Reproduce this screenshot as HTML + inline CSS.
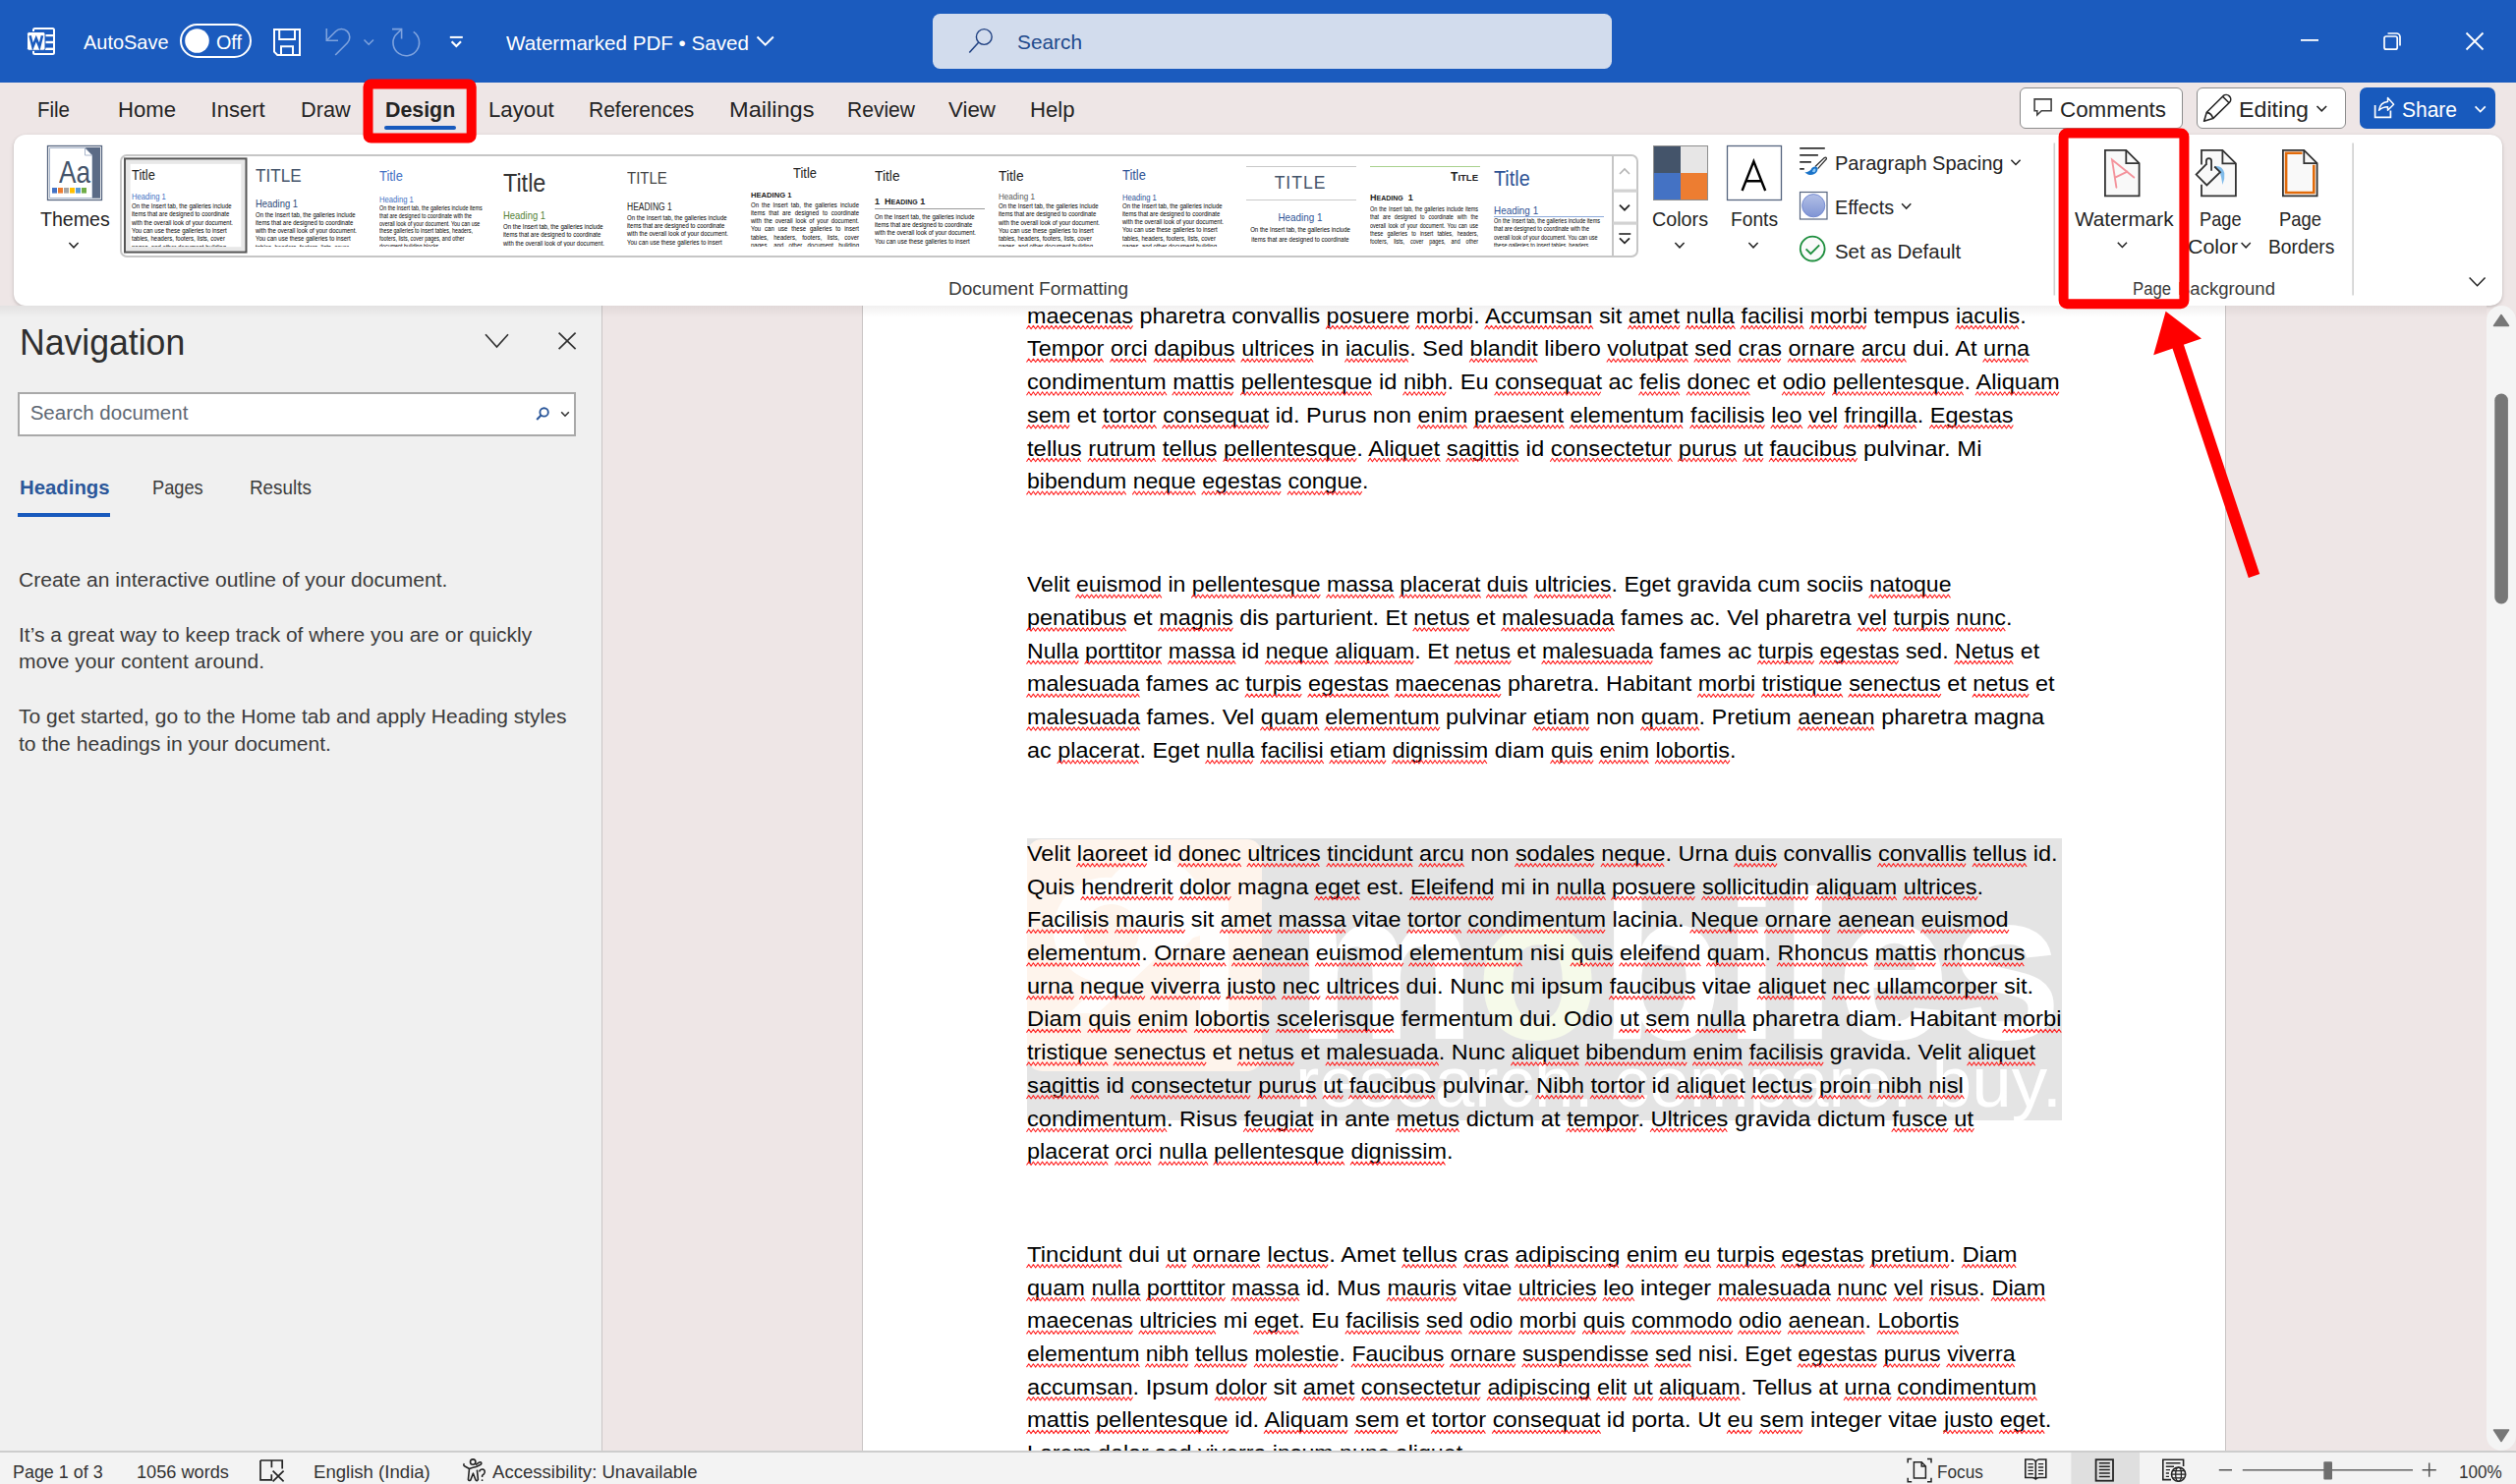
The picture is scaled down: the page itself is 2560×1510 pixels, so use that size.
<!DOCTYPE html>
<html><head><meta charset="utf-8"><title>Word</title>
<style>
html,body{margin:0;padding:0;width:2560px;height:1510px;overflow:hidden;background:#EEE6E6;font-family:'Liberation Sans', sans-serif;}
.t{position:absolute;white-space:pre;line-height:1;transform-origin:0 0;font-family:'Liberation Sans', sans-serif;}
.a{position:absolute;}
.u{}
svg{position:absolute;overflow:visible;}
</style></head><body>
<div class="a" style="left:0;top:0;width:2560px;height:84px;background:#1B5BBE"></div>
<div class="a" style="left:0;top:84px;width:2560px;height:227px;background:#EEE6E6"></div>
<div class="a" style="left:14px;top:137px;width:2532px;height:174px;background:#fff;border-radius:12px;box-shadow:0 1px 3px rgba(0,0,0,0.18),0 2px 6px rgba(0,0,0,0.06)"></div>
<div class="a" style="left:0;top:311px;width:612px;height:1165px;background:#F0F0F0"></div>
<div class="a" style="left:612px;top:311px;width:1px;height:1165px;background:#C9C6C6"></div>
<div class="a" style="left:613px;top:311px;width:1917px;height:1165px;background:#EEE6E6"></div>
<div class="a" style="left:877px;top:311px;width:1388px;height:1165px;background:#fff;border-left:1px solid #C8C3C3;border-right:1px solid #C8C3C3;box-sizing:border-box"></div>
<div class="a" style="left:2530px;top:311px;width:30px;height:1165px;background:#F4F4F4;border-radius:15px"></div>
<div class="a" style="left:1045px;top:853px;width:1053px;height:287px;background:#E4E4E4"></div><div class="a" style="left:1045px;top:853.5px;width:239px;height:236.5px;background:#FEF4EC;border-radius:15px"></div><svg style="left:0;top:0" width="2560" height="1510" viewBox="0 0 2560 1510"><path d="M1131,893 A51.5,51.5 0 1 1 1176,975 L1117,1031 H1088 L1120,1000 A51.5,51.5 0 0 1 1131,893 Z M1130,920 A28,28 0 1 0 1131,977 A28,28 0 1 0 1130,920 Z" fill="#FFFFFF" fill-rule="evenodd" opacity="0.9"/><path d="M1221,917 H1250 V1029 H1221 V952 L1196,960 V936 Z" fill="#FFFFFF" opacity="0.9"/></svg>
<div class="a" style="left:0px;top:311px;width:2530px;height:12px;background:linear-gradient(rgba(60,40,40,0.07),rgba(60,40,40,0))"></div>
<div class="t" style="left:1318.0px;top:873.6px;font-size:216px;color:#FFFFFF;font-weight:700;transform:scaleX(0.9556);">m<span style="color:#F6FAEA">o</span>biles</div>
<div class="t" style="left:1318.0px;top:1063.5px;font-size:73px;color:#FFFFFF;transform:scaleX(0.9978);">research. compare. buy.</div>
<div class="a" style="left:391px;top:128px;width:73px;height:4px;background:#185ABD;border-radius:2px"></div>
<div class="a" style="left:2055px;top:89px;width:166px;height:42px;background:#fff;border:1.5px solid #8C8C8C;border-radius:6px;box-sizing:border-box"></div>
<div class="a" style="left:2235px;top:89px;width:152px;height:42px;background:#fff;border:1.5px solid #8C8C8C;border-radius:6px;box-sizing:border-box"></div>
<div class="a" style="left:2401px;top:89px;width:138px;height:42px;background:#185ABD;border-radius:7px"></div>
<div class="a" style="left:18px;top:399px;width:568px;height:45px;background:#fff;border:2px solid #A9A9A9;box-sizing:border-box"></div>
<div class="a" style="left:18px;top:522px;width:94px;height:4px;background:#185ABD"></div>
<svg style="left:0;top:0" width="2560" height="1510" viewBox="0 0 2560 1510"><rect x="34" y="29" width="21" height="26" rx="1.5" fill="none" stroke="#fff" stroke-width="2"/>
<rect x="34" y="35" width="21" height="2.2" fill="#fff"/><rect x="34" y="41.8" width="21" height="2.4" fill="#fff"/><rect x="34" y="48.6" width="21" height="2.4" fill="#fff"/>
<rect x="27.5" y="32.5" width="18.5" height="18.8" rx="2" fill="#fff" stroke="#1B5BBE" stroke-width="1"/>
<path d="M30.6,36.3 L33.4,47.6 L36.8,39.2 L40.2,47.6 L43,36.3" fill="none" stroke="#1B5BBE" stroke-width="2.6" stroke-linejoin="miter"/><rect x="184" y="25" width="71" height="33" rx="16.5" fill="none" stroke="#fff" stroke-width="2"/><circle cx="200.5" cy="41.5" r="12.3" fill="#fff"/><path d="M279,30 H305 V56 H282.3 L279,52.7 Z" fill="none" stroke="#fff" stroke-width="2"/><path d="M284.2,30 V40 H300 V30" fill="none" stroke="#fff" stroke-width="2"/><path d="M286,56 V47.2 H298 V56" fill="none" stroke="#fff" stroke-width="2"/><path d="M332.3,29 V41.2 H344" fill="none" stroke="#7FA3DE" stroke-width="1.6"/><path d="M332.8,40.7 L341.5,32 A8.3,8.3 0 0 1 353.4,43.7 L341.2,56" fill="none" stroke="#7FA3DE" stroke-width="1.6"/><path d="M370.5,40.5 L375.2,45.3 L380,40.5" fill="none" stroke="#7FA3DE" stroke-width="1.5"/><path d="M399,29.6 H408.6 V39.5" fill="none" stroke="#7FA3DE" stroke-width="1.6"/><path d="M408.2,30 L402.3,35.9 A13.3,13.3 0 1 0 420.7,32.4" fill="none" stroke="#7FA3DE" stroke-width="1.6"/><rect x="457.8" y="36.9" width="13" height="2" fill="#fff"/><path d="M459.6,42.3 L464.3,47 L469,42.3" fill="none" stroke="#fff" stroke-width="2.2"/><path d="M770.5,37.5 L778.7,45.7 L786.9,37.5" fill="none" stroke="#fff" stroke-width="2"/><rect x="949" y="14" width="691" height="56" rx="7.5" fill="#D2DCED"/><circle cx="1001.3" cy="37.5" r="7.9" fill="none" stroke="#1E3F80" stroke-width="1.4"/><path d="M995.6,43.2 L986.3,53.5" fill="none" stroke="#1E3F80" stroke-width="1.5"/><rect x="2341" y="40" width="18" height="1.8" fill="#fff"/><rect x="2426" y="37" width="13.2" height="13.2" rx="2" fill="none" stroke="#fff" stroke-width="1.7"/><path d="M2429.5,34 H2438.5 A3.5,3.5 0 0 1 2442,37.5 V46.5" fill="none" stroke="#fff" stroke-width="1.7"/><path d="M2509.5,33.5 L2526.5,50.5 M2526.5,33.5 L2509.5,50.5" fill="none" stroke="#fff" stroke-width="1.8"/><path d="M2070.1,100.9 H2087.1 V112.7 H2077.3 L2072.8,117 V112.7 H2070.1 Z" fill="none" stroke="#424242" stroke-width="1.6" stroke-linejoin="miter"/><path d="M2242.6,123.2 L2245.3,114.3 L2262,97.7 A4.6,4.6 0 0 1 2268.5,104.2 L2251.7,120.6 Z M2261.6,98.3 L2267.6,104.3 M2245.4,114.4 Q2250.5,115.5 2251.6,120.5" fill="none" stroke="#242424" stroke-width="1.6" stroke-linejoin="round"/><path d="M2357.5,108 L2362.3,112.8 L2367.1,108" fill="none" stroke="#242424" stroke-width="1.6"/><path d="M2416.6,107 V119.3 H2432.4 V112.4" fill="none" stroke="#fff" stroke-width="1.7"/><path d="M2420.6,112.3 C2421.5,106.8 2425.3,103.8 2429.5,103.6 V99.6 L2435.6,106.2 L2429.5,112.3 V108.8 C2426,108.8 2423.2,109.8 2420.6,112.3 Z" fill="none" stroke="#fff" stroke-width="1.5" stroke-linejoin="round"/><path d="M2518.6,108.4 L2523.7,113.5 L2528.8,108.4" fill="none" stroke="#fff" stroke-width="1.7"/></svg>
<svg style="left:0;top:0" width="2560" height="1510" viewBox="0 0 2560 1510"><rect x="48.5" y="148.5" width="55" height="55" fill="#fff" stroke="#56657F" stroke-width="1.3"/>
<path d="M50.5,150.5 H86.5 L94,158 V201.5 H50.5 Z" fill="#fff" stroke="#A9B6CB" stroke-width="1"/>
<path d="M86.5,150 H102 V201.8 H94 V158 Z" fill="#5B6B86"/>
<path d="M86.5,150.5 V158 H94" fill="none" stroke="#A9B6CB" stroke-width="1"/><rect x="53" y="191" width="5" height="5.6" fill="#4472C4"/><rect x="59" y="191" width="5" height="5.6" fill="#ED7D31"/><rect x="65" y="191" width="5" height="5.6" fill="#A5A5A5"/><rect x="71" y="191" width="5" height="5.6" fill="#FFC000"/><rect x="77" y="191" width="5" height="5.6" fill="#5B9BD5"/><rect x="83" y="191" width="5" height="5.6" fill="#70AD47"/><rect x="123" y="158" width="1543" height="103" rx="6" fill="#fff" stroke="#C6C6C6" stroke-width="2"/><rect x="1640" y="158" width="2" height="103" fill="#C6C6C6"/><rect x="1641" y="192.5" width="25" height="3.2" fill="#D2D2D2"/><rect x="1641" y="225.5" width="25" height="3.2" fill="#D2D2D2"/><path d="M1648,177 L1653,172 L1658,177" fill="none" stroke="#B4B4B4" stroke-width="1.6"/><path d="M1648,208.7 L1653,213.7 L1658,208.7" fill="none" stroke="#242424" stroke-width="1.8"/><path d="M1647.3,238 H1659.3" stroke="#242424" stroke-width="1.6"/><path d="M1648,242.3 L1653,247.3 L1658,242.3" fill="none" stroke="#242424" stroke-width="1.8"/><rect x="127" y="161.4" width="123.5" height="95.2" fill="#E8E8E8" stroke="#555" stroke-width="2"/><rect x="132.6" y="166.8" width="112.7" height="84.4" fill="#fff"/><rect x="1682" y="148" width="28" height="28" fill="#44546A"/><rect x="1710" y="148" width="28" height="28" fill="#E7E6E6"/><rect x="1682" y="176" width="28" height="28" fill="#4472C4"/><rect x="1710" y="176" width="28" height="28" fill="#ED7D31"/><rect x="1682.5" y="148.5" width="55" height="55" fill="none" stroke="#8E8E8E" stroke-width="1"/><rect x="1757.5" y="148.5" width="55" height="55" fill="#fff" stroke="#56657F" stroke-width="1.3"/><path d="M1772.6,194 L1784.4,164.2 L1796.2,194 M1776.6,184.2 H1792.2" fill="none" stroke="#000" stroke-width="2.4"/><path d="M1831.2,150.9 H1856.8 M1831.2,157.9 H1849.9 M1831.2,164.8 H1842.9 M1831.2,171.8 H1835.8" stroke="#333" stroke-width="1.7" fill="none"/><path d="M1847,169.5 L1856.3,160.6 Q1858.6,159.4 1858.4,161.8 L1849.6,171.6" fill="none" stroke="#333" stroke-width="1.3"/><path d="M1836.3,175.4 Q1842,175 1843.5,171 Q1845.5,168.7 1848.3,169.8 Q1850.5,171.5 1848.8,174.5 Q1846.5,178.5 1840,177.8 Z" fill="#1A73C8"/><path d="M1843.8,174.5 Q1845,171.3 1847,171.5 Q1848.2,173 1846.8,174.8 Q1845.5,176 1843.8,174.5Z" fill="#8CC8F7"/><defs><linearGradient id="gE" x1="0" y1="0" x2="0" y2="1"><stop offset="0" stop-color="#B3C0E6"/><stop offset="1" stop-color="#7F94D4"/></linearGradient></defs><rect x="1831.5" y="195.5" width="27.5" height="27.5" fill="#fff" stroke="#56657F" stroke-width="1.2"/><circle cx="1845.2" cy="209.2" r="11.6" fill="url(#gE)" stroke="#6E86CF" stroke-width="0.9"/><circle cx="1844.2" cy="253.1" r="12.4" fill="#FAFAFA" stroke="#1E8E3E" stroke-width="1.8"/><path d="M1837.6,253.4 L1842.4,258.2 L1851.2,249.4" fill="none" stroke="#1E8E3E" stroke-width="1.9"/><path d="M70.4,247.0 L75,251.8 L79.6,247.0" fill="none" stroke="#242424" stroke-width="1.5"/><path d="M1704.4,247.0 L1709,251.8 L1713.6,247.0" fill="none" stroke="#242424" stroke-width="1.5"/><path d="M1779.4,247.0 L1784,251.8 L1788.6,247.0" fill="none" stroke="#242424" stroke-width="1.5"/><path d="M2154.8,246.7 L2159.4,251.5 L2164.0,246.7" fill="none" stroke="#242424" stroke-width="1.5"/><path d="M2280.6,247.0 L2285.2,251.8 L2289.7999999999997,247.0" fill="none" stroke="#242424" stroke-width="1.5"/><path d="M2046.4,162.7 L2051,167.5 L2055.6,162.7" fill="none" stroke="#242424" stroke-width="1.5"/><path d="M1935.1000000000001,207.3 L1939.7,212.10000000000002 L1944.3,207.3" fill="none" stroke="#242424" stroke-width="1.5"/><rect x="2089.5" y="145.5" width="1.6" height="155" fill="#D0D0D0"/><rect x="2393.3" y="145.5" width="1.6" height="155" fill="#D0D0D0"/><path d="M2141.9,152.9 H2163.3 L2176.6,166.2 V199.4 H2141.9 Z" fill="#F9F9F9" stroke="#333" stroke-width="1.8" stroke-linejoin="miter"/><path d="M2163.3,152.9 V166.2 H2176.6" fill="none" stroke="#333" stroke-width="1.8"/><path d="M2153.4,190.7 L2149,162.6 L2171.3,180.6 M2152.1,180.6 L2164.5,174.6" fill="none" stroke="#F4939C" stroke-width="1.9" stroke-linecap="round"/><path d="M2240,152.9 H2261.4 L2274.9,166.4 V199.4 H2240 Z" fill="#F9F9F9" stroke="none"/><path d="M2240,167.5 V152.9 H2261.4 L2274.9,166.4 V199.4 H2240 V187.8" fill="none" stroke="#333" stroke-width="1.8"/><path d="M2261.4,152.9 V166.4 H2274.9" fill="none" stroke="#333" stroke-width="1.8"/><path d="M2253.5,169.2 Q2261,168 2263.3,176 Q2264,182 2261.4,188 Q2260.5,181 2258.8,175.6 Z" fill="#7FBBEA"/><path d="M2244.6,167.4 L2234.6,177.6 L2245.4,188.5 L2259,175.2 L2253.2,169.5" fill="#F9F9F9" stroke="#333" stroke-width="1.8" stroke-linejoin="miter"/><path d="M2244.9,168 V163.8 A2.6,2.6 0 0 1 2250.1,163.8 V173.8" fill="none" stroke="#333" stroke-width="1.8"/><path d="M2322.9,152.9 H2344.3 L2357.6,166.2 V199.4 H2322.9 Z" fill="#F9F9F9" stroke="#333" stroke-width="1.8" stroke-linejoin="miter"/><path d="M2344.3,152.9 V166.2 H2357.6" fill="none" stroke="#333" stroke-width="1.8"/><path d="M2342.5,155.8 H2326.1 V196 H2354.3 V167.8" fill="none" stroke="#E26B0A" stroke-width="2.6"/><path d="M2512.6,282.6 L2520.6,290.8 L2528.6,282.6" fill="none" stroke="#242424" stroke-width="1.5"/><path d="M494,340.2 L505.5,353 L517,340.2" fill="none" stroke="#333" stroke-width="1.7"/><path d="M568.6,338.6 L585.6,355.2 M585.6,338.6 L568.6,355.2" fill="none" stroke="#333" stroke-width="1.7"/><circle cx="553.6" cy="419.4" r="4.2" fill="none" stroke="#2B579A" stroke-width="1.9"/><path d="M550.5,422.6 L546.2,426.9" stroke="#2B579A" stroke-width="2.1"/><path d="M571.2,419.2 L575,423.2 L578.8,419.2" fill="none" stroke="#333" stroke-width="1.6"/><path d="M2545,320.5 L2552.5,331.5 H2537.5 Z" fill="#777" stroke="#777" stroke-width="1.5" stroke-linejoin="round"/><rect x="2538.3" y="400.5" width="13.6" height="214" rx="6.8" fill="#777"/><path d="M2545,1466.5 L2552.5,1455 H2537.5 Z" fill="#777" stroke="#777" stroke-width="1.5" stroke-linejoin="round"/></svg>
<div class="a" style="left:132px;top:167px;width:114px;height:84px;overflow:hidden"><div style="position:absolute;top:4.4px;font-size:14px;color:#222;line-height:1;white-space:pre;font-weight:400;letter-spacing:0px;left:2px;transform:scaleX(0.92);transform-origin:0 0;">Title</div><div style="position:absolute;top:29.0px;font-size:8.5px;color:#4472C4;line-height:1;white-space:pre;font-weight:400;letter-spacing:0px;left:2px;transform:scaleX(0.9);transform-origin:0 0;">Heading 1</div><div style="position:absolute;left:2px;top:39.1px;width:131.0px;font-size:7.2px;line-height:8.3px;color:#000;text-align:left;transform:scaleX(0.84);transform-origin:0 0;font-weight:400;letter-spacing:0px">On the Insert tab, the galleries include items that are designed to coordinate with the overall look of your document. You can use these galleries to insert tables, headers, footers, lists, cover pages, and other document building blocks.</div></div><div class="a" style="left:258px;top:167px;width:114px;height:84px;overflow:hidden"><div style="position:absolute;top:1.7px;font-size:19px;color:#44546A;line-height:1;white-space:pre;font-weight:400;letter-spacing:0px;left:2px;transform:scaleX(0.9);transform-origin:0 0;">TITLE</div><div style="position:absolute;top:35.3px;font-size:10.5px;color:#2E4A7A;line-height:1;white-space:pre;font-weight:400;letter-spacing:0px;left:2px;transform:scaleX(0.9);transform-origin:0 0;">Heading 1</div><div style="position:absolute;left:2px;top:47.5px;width:131.0px;font-size:7.2px;line-height:8.3px;color:#000;text-align:left;transform:scaleX(0.84);transform-origin:0 0;font-weight:400;letter-spacing:0px">On the Insert tab, the galleries include items that are designed to coordinate with the overall look of your document. You can use these galleries to insert tables, headers, footers, lists, cover pages, and other document building blocks.</div></div><div class="a" style="left:384px;top:167px;width:114px;height:84px;overflow:hidden"><div style="position:absolute;top:4.9px;font-size:14px;color:#4472C4;line-height:1;white-space:pre;font-weight:400;letter-spacing:0px;left:2px;transform:scaleX(0.92);transform-origin:0 0;">Title</div><div style="position:absolute;top:31.5px;font-size:8.5px;color:#4472C4;line-height:1;white-space:pre;font-weight:400;letter-spacing:0px;left:2px;transform:scaleX(0.9);transform-origin:0 0;">Heading 1</div><div style="position:absolute;left:2px;top:41.1px;width:131.0px;font-size:6.4px;line-height:7.8px;color:#000;text-align:left;transform:scaleX(0.84);transform-origin:0 0;font-weight:400;letter-spacing:0px">On the Insert tab, the galleries include items that are designed to coordinate with the overall look of your document. You can use these galleries to insert tables, headers, footers, lists, cover pages, and other document building blocks.</div></div><div class="a" style="left:510px;top:167px;width:114px;height:84px;overflow:hidden"><div style="position:absolute;top:5.7px;font-size:26px;color:#333;line-height:1;white-space:pre;font-weight:400;letter-spacing:0px;left:2px;transform:scaleX(0.9);transform-origin:0 0;">Title</div><div style="position:absolute;top:47.3px;font-size:10.5px;color:#538135;line-height:1;white-space:pre;font-weight:400;letter-spacing:0px;left:2px;transform:scaleX(0.9);transform-origin:0 0;">Heading 1</div><div style="position:absolute;left:2px;top:59.5px;width:131.0px;font-size:7.2px;line-height:8.9px;color:#000;text-align:left;transform:scaleX(0.84);transform-origin:0 0;font-weight:400;letter-spacing:0px">On the Insert tab, the galleries include items that are designed to coordinate with the overall look of your document. You can use these galleries to insert tables, headers, footers, lists, cover pages, and other document building blocks.</div></div><div class="a" style="left:636px;top:167px;width:114px;height:84px;overflow:hidden"><div style="position:absolute;top:6.4px;font-size:17px;color:#444;line-height:1;white-space:pre;font-weight:400;letter-spacing:0px;left:2px;transform:scaleX(0.88);transform-origin:0 0;">TITLE</div><div style="position:absolute;top:39.1px;font-size:10px;color:#222;line-height:1;white-space:pre;font-weight:400;letter-spacing:0px;left:2px;transform:scaleX(0.85);transform-origin:0 0;">HEADING 1</div><div style="position:absolute;left:2px;top:50.9px;width:131.0px;font-size:7.2px;line-height:8.3px;color:#000;text-align:left;transform:scaleX(0.84);transform-origin:0 0;font-weight:400;letter-spacing:0px">On the Insert tab, the galleries include items that are designed to coordinate with the overall look of your document. You can use these galleries to insert tables, headers, footers, lists, cover pages, and other document building blocks.</div></div><div class="a" style="left:762px;top:167px;width:114px;height:84px;overflow:hidden"><div style="position:absolute;top:1.9px;font-size:14px;color:#222;line-height:1;white-space:pre;font-weight:400;letter-spacing:0px;left:0;width:114px;text-align:center;transform:scaleX(0.92);transform-origin:50% 0;">Title</div><div style="position:absolute;top:28.3px;font-size:8px;color:#222;line-height:1;white-space:pre;font-weight:700;letter-spacing:0px;left:2px;transform:scaleX(0.95);transform-origin:0 0;">HEADING 1</div><div style="position:absolute;left:2px;top:38.0px;width:131.0px;font-size:7.2px;line-height:8.15px;color:#000;text-align:justify;transform:scaleX(0.84);transform-origin:0 0;font-weight:400;letter-spacing:0px">On the Insert tab, the galleries include items that are designed to coordinate with the overall look of your document. You can use these galleries to insert tables, headers, footers, lists, cover pages, and other document building blocks.</div></div><div class="a" style="left:888px;top:167px;width:114px;height:84px;overflow:hidden"><div style="position:absolute;top:3.7px;font-size:15px;color:#222;line-height:1;white-space:pre;font-weight:400;letter-spacing:0px;left:2px;transform:scaleX(0.92);transform-origin:0 0;">Title</div><div style="position:absolute;top:33.7px;font-size:9px;color:#222;line-height:1;white-space:pre;font-weight:700;letter-spacing:0px;left:2px;">1  H<span style="font-size:7px">EADING</span> 1</div><div style="position:absolute;left:2px;top:45.2px;width:112px;height:1px;background:#9A9A9A"></div><div style="position:absolute;left:2px;top:49.9px;width:131.0px;font-size:7.2px;line-height:8.3px;color:#000;text-align:left;transform:scaleX(0.84);transform-origin:0 0;font-weight:400;letter-spacing:0px">On the Insert tab, the galleries include items that are designed to coordinate with the overall look of your document. You can use these galleries to insert tables, headers, footers, lists, cover pages, and other document building blocks.</div></div><div class="a" style="left:1014px;top:167px;width:114px;height:84px;overflow:hidden"><div style="position:absolute;top:3.7px;font-size:15px;color:#222;line-height:1;white-space:pre;font-weight:400;letter-spacing:0px;left:2px;transform:scaleX(0.92);transform-origin:0 0;">Title</div><div style="position:absolute;top:28.7px;font-size:9px;color:#595959;line-height:1;white-space:pre;font-weight:400;letter-spacing:0px;left:2px;transform:scaleX(0.9);transform-origin:0 0;">Heading 1</div><div style="position:absolute;left:2px;top:39.0px;width:131.0px;font-size:7.2px;line-height:8.3px;color:#000;text-align:left;transform:scaleX(0.84);transform-origin:0 0;font-weight:400;letter-spacing:0px">On the Insert tab, the galleries include items that are designed to coordinate with the overall look of your document. You can use these galleries to insert tables, headers, footers, lists, cover pages, and other document building blocks.</div></div><div class="a" style="left:1140px;top:167px;width:114px;height:84px;overflow:hidden"><div style="position:absolute;top:3.9px;font-size:14px;color:#2F5496;line-height:1;white-space:pre;font-weight:400;letter-spacing:0px;left:2px;transform:scaleX(0.92);transform-origin:0 0;">Title</div><div style="position:absolute;top:29.5px;font-size:8.5px;color:#2F5496;line-height:1;white-space:pre;font-weight:400;letter-spacing:0px;left:2px;transform:scaleX(0.9);transform-origin:0 0;">Heading 1</div><div style="position:absolute;left:2px;top:38.6px;width:131.0px;font-size:7.2px;line-height:8.3px;color:#000;text-align:left;transform:scaleX(0.84);transform-origin:0 0;font-weight:400;letter-spacing:0px">On the Insert tab, the galleries include items that are designed to coordinate with the overall look of your document. You can use these galleries to insert tables, headers, footers, lists, cover pages, and other document building blocks.</div></div><div class="a" style="left:1266px;top:167px;width:114px;height:84px;overflow:hidden"><div style="position:absolute;left:2px;top:1.5px;width:112px;height:1px;background:#C9C9C9"></div><div style="position:absolute;top:10.9px;font-size:17.5px;color:#44546A;line-height:1;white-space:pre;font-weight:400;letter-spacing:1px;left:0;width:114px;text-align:center;">TITLE</div><div style="position:absolute;left:2px;top:36.1px;width:112px;height:1px;background:#C9C9C9"></div><div style="position:absolute;top:49.2px;font-size:11px;color:#2F5496;line-height:1;white-space:pre;font-weight:400;letter-spacing:0px;left:0;width:114px;text-align:center;transform:scaleX(0.9);transform-origin:50% 0;">Heading 1</div><div style="position:absolute;left:2px;top:62.0px;width:131.0px;font-size:7.2px;line-height:10px;color:#000;text-align:center;transform:scaleX(0.84);transform-origin:0 0;font-weight:400;letter-spacing:0px">On the Insert tab, the galleries include items that are designed to coordinate with the overall look of your document. You can use these galleries to insert tables, headers, footers, lists, cover pages, and other document building blocks.</div></div><div class="a" style="left:1392px;top:167px;width:114px;height:84px;overflow:hidden"><div style="position:absolute;left:2px;top:1.5px;width:112px;height:1px;background:#A9D18E"></div><div style="position:absolute;top:6.6px;font-size:12px;color:#222;line-height:1;white-space:pre;font-weight:700;letter-spacing:0px;left:0;width:112px;text-align:right;">T<span style="font-size:9.5px">ITLE</span></div><div style="position:absolute;top:30.0px;font-size:9px;color:#222;line-height:1;white-space:pre;font-weight:700;letter-spacing:0px;left:2px;">H<span style="font-size:7px">EADING</span>  1</div><div style="position:absolute;left:2px;top:42.2px;width:131.0px;font-size:6.5px;line-height:8.2px;color:#000;text-align:justify;transform:scaleX(0.84);transform-origin:0 0;font-weight:400;letter-spacing:0px">On the Insert tab, the galleries include items that are designed to coordinate with the overall look of your document. You can use these galleries to insert tables, headers, footers, lists, cover pages, and other document building blocks.</div></div><div class="a" style="left:1518px;top:167px;width:114px;height:84px;overflow:hidden"><div style="position:absolute;top:4.3px;font-size:22px;color:#2F5496;line-height:1;white-space:pre;font-weight:400;letter-spacing:0px;left:2px;transform:scaleX(0.9);transform-origin:0 0;">Title</div><div style="position:absolute;top:41.8px;font-size:11px;color:#2F5496;line-height:1;white-space:pre;font-weight:400;letter-spacing:0px;left:2px;transform:scaleX(0.9);transform-origin:0 0;">Heading 1</div><div style="position:absolute;left:2px;top:53.2px;width:112px;height:1px;background:#8EAADB"></div><div style="position:absolute;left:2px;top:54.1px;width:131.0px;font-size:6.6px;line-height:8.3px;color:#000;text-align:left;transform:scaleX(0.84);transform-origin:0 0;font-weight:400;letter-spacing:0px">On the Insert tab, the galleries include items that are designed to coordinate with the overall look of your document. You can use these galleries to insert tables, headers, footers, lists, cover pages, and other document building blocks.</div></div>
<div class="t" style="left:84.5px;top:31.9px;font-size:21px;color:#FFFFFF;transform:scaleX(0.9497);">AutoSave</div>
<div class="t" style="left:220.0px;top:31.9px;font-size:21px;color:#FFFFFF;transform:scaleX(0.9412);">Off</div>
<div class="t" style="left:515.0px;top:33.0px;font-size:21px;color:#FFFFFF;transform:scaleX(0.9815);">Watermarked PDF • Saved</div>
<div class="t" style="left:1035.0px;top:32.4px;font-size:21px;color:#1F4A8C;transform:scaleX(0.9918);">Search</div>
<div class="t" style="left:38.0px;top:101.3px;font-size:22px;color:#242424;transform:scaleX(0.9308);">File</div>
<div class="t" style="left:119.5px;top:101.3px;font-size:22px;color:#242424;transform:scaleX(1.0053);">Home</div>
<div class="t" style="left:214.6px;top:101.3px;font-size:22px;color:#242424;">Insert</div>
<div class="t" style="left:306.4px;top:101.3px;font-size:22px;color:#242424;transform:scaleX(0.9855);">Draw</div>
<div class="t" style="left:391.7px;top:101.3px;font-size:22px;color:#242424;font-weight:700;transform:scaleX(0.9706);">Design</div>
<div class="t" style="left:497.0px;top:101.3px;font-size:22px;color:#242424;transform:scaleX(1.0096);">Layout</div>
<div class="t" style="left:599.4px;top:101.3px;font-size:22px;color:#242424;transform:scaleX(0.9536);">References</div>
<div class="t" style="left:741.5px;top:101.3px;font-size:22px;color:#242424;transform:scaleX(1.0718);">Mailings</div>
<div class="t" style="left:862.0px;top:101.3px;font-size:22px;color:#242424;transform:scaleX(0.9565);">Review</div>
<div class="t" style="left:965.0px;top:101.3px;font-size:22px;color:#242424;transform:scaleX(1.0149);">View</div>
<div class="t" style="left:1048.0px;top:101.3px;font-size:22px;color:#242424;transform:scaleX(1.0077);">Help</div>
<div class="t" style="left:2095.8px;top:101.0px;font-size:22px;color:#242424;transform:scaleX(1.0154);">Comments</div>
<div class="t" style="left:2278.0px;top:101.0px;font-size:22px;color:#242424;transform:scaleX(1.0553);">Editing</div>
<div class="t" style="left:2444.0px;top:101.0px;font-size:22px;color:#fff;transform:scaleX(0.9537);">Share</div>
<div class="t" style="left:40.7px;top:211.8px;font-size:21px;color:#242424;transform:scaleX(0.9320);">Themes</div>
<div class="t" style="left:59.5px;top:158.8px;font-size:32px;color:#44546A;transform:scaleX(0.8176);">Aa</div>
<div class="t" style="left:1681.4px;top:212.2px;font-size:21px;color:#242424;transform:scaleX(0.9392);">Colors</div>
<div class="t" style="left:1761.0px;top:212.2px;font-size:21px;color:#242424;transform:scaleX(0.9137);">Fonts</div>
<div class="t" style="left:1867.0px;top:155.3px;font-size:21px;color:#242424;transform:scaleX(0.9539);">Paragraph Spacing</div>
<div class="t" style="left:1867.0px;top:199.8px;font-size:21px;color:#242424;transform:scaleX(0.9403);">Effects</div>
<div class="t" style="left:1866.8px;top:245.2px;font-size:21px;color:#242424;transform:scaleX(0.9719);">Set as Default</div>
<div class="t" style="left:2110.7px;top:211.8px;font-size:21px;color:#242424;transform:scaleX(0.9872);">Watermark</div>
<div class="t" style="left:2237.5px;top:211.8px;font-size:21px;color:#242424;transform:scaleX(0.8665);">Page</div>
<div class="t" style="left:2226.0px;top:239.8px;font-size:21px;color:#242424;transform:scaleX(1.0162);">Color</div>
<div class="t" style="left:2319.4px;top:211.8px;font-size:21px;color:#242424;transform:scaleX(0.8767);">Page</div>
<div class="t" style="left:2307.6px;top:239.8px;font-size:21px;color:#242424;transform:scaleX(0.9166);">Borders</div>
<div class="t" style="left:964.5px;top:286.0px;font-size:17.5px;color:#3A3A3A;transform:scaleX(1.0876);">Document Formatting</div>
<div class="t" style="left:2170.0px;top:286.0px;font-size:17.5px;color:#3A3A3A;transform:scaleX(0.9541);">Page</div>
<div class="t" style="left:2216.0px;top:286.0px;font-size:17.5px;color:#3A3A3A;transform:scaleX(1.0599);">Background</div>
<div class="t" style="left:20.2px;top:330.9px;font-size:36px;color:#2E2E2E;transform:scaleX(0.9888);">Navigation</div>
<div class="t" style="left:30.7px;top:410.4px;font-size:20.5px;color:#5E6773;">Search document</div>
<div class="t" style="left:19.7px;top:484.6px;font-size:21px;color:#2B579A;font-weight:700;transform:scaleX(0.9690);">Headings</div>
<div class="t" style="left:155.3px;top:484.6px;font-size:21px;color:#3B3B3B;transform:scaleX(0.8682);">Pages</div>
<div class="t" style="left:254.2px;top:484.6px;font-size:21px;color:#3B3B3B;transform:scaleX(0.8967);">Results</div>
<div class="t" style="left:18.6px;top:579.5px;font-size:20.5px;color:#3B3B3B;transform:scaleX(1.0267);">Create an interactive outline of your document.</div>
<div class="t" style="left:18.6px;top:636.0px;font-size:20.5px;color:#3B3B3B;transform:scaleX(1.0214);">It’s a great way to keep track of where you are or quickly</div>
<div class="t" style="left:18.6px;top:662.5px;font-size:20.5px;color:#3B3B3B;transform:scaleX(1.0251);">move your content around.</div>
<div class="t" style="left:18.6px;top:719.0px;font-size:20.5px;color:#3B3B3B;transform:scaleX(1.0233);">To get started, go to the Home tab and apply Heading styles</div>
<div class="t" style="left:18.6px;top:746.6px;font-size:20.5px;color:#3B3B3B;transform:scaleX(1.0296);">to the headings in your document.</div>
<div class="t" style="left:1044.5px;top:310.6px;font-size:22.5px;color:#000000;transform:scaleX(1.0408);"><span class="u">maecenas</span> pharetra convallis <span class="u">posuere</span> <span class="u">morbi</span>. <span class="u">Accumsan</span> sit <span class="u">amet</span> <span class="u">nulla</span> <span class="u">facilisi</span> <span class="u">morbi</span> tempus <span class="u">iaculis</span>.</div>
<div class="t" style="left:1044.5px;top:344.3px;font-size:22.5px;color:#000000;transform:scaleX(1.0441);"><span class="u">Tempor</span> <span class="u">orci</span> <span class="u">dapibus</span> <span class="u">ultrices</span> in <span class="u">iaculis</span>. Sed <span class="u">blandit</span> libero <span class="u">volutpat</span> <span class="u">sed</span> <span class="u">cras</span> <span class="u">ornare</span> <span class="u">arcu</span> dui. At <span class="u">urna</span></div>
<div class="t" style="left:1044.5px;top:378.0px;font-size:22.5px;color:#000000;transform:scaleX(1.0485);"><span class="u">condimentum</span> <span class="u">mattis</span> <span class="u">pellentesque</span> id <span class="u">nibh</span>. Eu <span class="u">consequat</span> ac <span class="u">felis</span> <span class="u">donec</span> et <span class="u">odio</span> <span class="u">pellentesque</span>. <span class="u">Aliquam</span></div>
<div class="t" style="left:1044.5px;top:411.7px;font-size:22.5px;color:#000000;transform:scaleX(1.0419);"><span class="u">sem</span> et <span class="u">tortor</span> <span class="u">consequat</span> id. Purus non <span class="u">enim</span> <span class="u">praesent</span> <span class="u">elementum</span> <span class="u">facilisis</span> <span class="u">leo</span> <span class="u">vel</span> <span class="u">fringilla</span>. <span class="u">Egestas</span></div>
<div class="t" style="left:1044.5px;top:445.5px;font-size:22.5px;color:#000000;transform:scaleX(1.0595);"><span class="u">tellus</span> <span class="u">rutrum</span> <span class="u">tellus</span> <span class="u">pellentesque</span>. <span class="u">Aliquet</span> <span class="u">sagittis</span> id <span class="u">consectetur</span> <span class="u">purus</span> <span class="u">ut</span> <span class="u">faucibus</span> pulvinar. Mi</div>
<div class="t" style="left:1044.5px;top:479.2px;font-size:22.5px;color:#000000;transform:scaleX(1.0247);"><span class="u">bibendum</span> <span class="u">neque</span> <span class="u">egestas</span> <span class="u">congue</span>.</div>
<div class="t" style="left:1044.5px;top:584.2px;font-size:22.5px;color:#000000;transform:scaleX(1.0244);">Velit <span class="u">euismod</span> in <span class="u">pellentesque</span> <span class="u">massa</span> <span class="u">placerat</span> <span class="u">duis</span> <span class="u">ultricies</span>. Eget gravida cum sociis <span class="u">natoque</span></div>
<div class="t" style="left:1044.5px;top:617.9px;font-size:22.5px;color:#000000;transform:scaleX(1.0408);"><span class="u">penatibus</span> et <span class="u">magnis</span> dis parturient. Et <span class="u">netus</span> et <span class="u">malesuada</span> fames ac. Vel pharetra <span class="u">vel</span> <span class="u">turpis</span> <span class="u">nunc</span>.</div>
<div class="t" style="left:1044.5px;top:651.6px;font-size:22.5px;color:#000000;transform:scaleX(1.0268);"><span class="u">Nulla</span> <span class="u">porttitor</span> <span class="u">massa</span> id <span class="u">neque</span> <span class="u">aliquam</span>. Et <span class="u">netus</span> et <span class="u">malesuada</span> fames ac <span class="u">turpis</span> <span class="u">egestas</span> sed. <span class="u">Netus</span> et</div>
<div class="t" style="left:1044.5px;top:685.3px;font-size:22.5px;color:#000000;transform:scaleX(1.0396);"><span class="u">malesuada</span> fames ac <span class="u">turpis</span> <span class="u">egestas</span> <span class="u">maecenas</span> pharetra. Habitant <span class="u">morbi</span> <span class="u">tristique</span> <span class="u">senectus</span> et <span class="u">netus</span> et</div>
<div class="t" style="left:1044.5px;top:719.1px;font-size:22.5px;color:#000000;transform:scaleX(1.0449);"><span class="u">malesuada</span> fames. Vel <span class="u">quam</span> <span class="u">elementum</span> pulvinar <span class="u">etiam</span> non <span class="u">quam</span>. Pretium <span class="u">aenean</span> pharetra magna</div>
<div class="t" style="left:1044.5px;top:752.8px;font-size:22.5px;color:#000000;transform:scaleX(1.0393);">ac <span class="u">placerat</span>. Eget <span class="u">nulla</span> <span class="u">facilisi</span> <span class="u">etiam</span> <span class="u">dignissim</span> diam <span class="u">quis</span> <span class="u">enim</span> <span class="u">lobortis</span>.</div>
<div class="t" style="left:1044.5px;top:857.8px;font-size:22.5px;color:#000000;transform:scaleX(1.0425);">Velit <span class="u">laoreet</span> id <span class="u">donec</span> <span class="u">ultrices</span> <span class="u">tincidunt</span> <span class="u">arcu</span> non <span class="u">sodales</span> <span class="u">neque</span>. Urna <span class="u">duis</span> convallis <span class="u">convallis</span> <span class="u">tellus</span> id.</div>
<div class="t" style="left:1044.5px;top:891.5px;font-size:22.5px;color:#000000;transform:scaleX(1.0499);">Quis <span class="u">hendrerit</span> <span class="u">dolor</span> magna <span class="u">eget</span> est. <span class="u">Eleifend</span> mi in <span class="u">nulla</span> <span class="u">posuere</span> <span class="u">sollicitudin</span> <span class="u">aliquam</span> <span class="u">ultrices</span>.</div>
<div class="t" style="left:1044.5px;top:925.2px;font-size:22.5px;color:#000000;transform:scaleX(1.0421);"><span class="u">Facilisis</span> <span class="u">mauris</span> sit <span class="u">amet</span> <span class="u">massa</span> vitae <span class="u">tortor</span> <span class="u">condimentum</span> lacinia. <span class="u">Neque</span> <span class="u">ornare</span> <span class="u">aenean</span> <span class="u">euismod</span></div>
<div class="t" style="left:1044.5px;top:958.9px;font-size:22.5px;color:#000000;transform:scaleX(1.0434);"><span class="u">elementum</span>. <span class="u">Ornare</span> <span class="u">aenean</span> <span class="u">euismod</span> <span class="u">elementum</span> nisi <span class="u">quis</span> <span class="u">eleifend</span> <span class="u">quam</span>. <span class="u">Rhoncus</span> <span class="u">mattis</span> <span class="u">rhoncus</span></div>
<div class="t" style="left:1044.5px;top:992.7px;font-size:22.5px;color:#000000;transform:scaleX(1.0483);"><span class="u">urna</span> <span class="u">neque</span> <span class="u">viverra</span> <span class="u">justo</span> <span class="u">nec</span> <span class="u">ultrices</span> dui. Nunc mi ipsum <span class="u">faucibus</span> vitae <span class="u">aliquet</span> <span class="u">nec</span> <span class="u">ullamcorper</span> sit.</div>
<div class="t" style="left:1044.5px;top:1026.4px;font-size:22.5px;color:#000000;transform:scaleX(1.0571);"><span class="u">Diam</span> <span class="u">quis</span> <span class="u">enim</span> <span class="u">lobortis</span> <span class="u">scelerisque</span> fermentum dui. Odio <span class="u">ut</span> <span class="u">sem</span> <span class="u">nulla</span> pharetra diam. Habitant <span class="u">morbi</span></div>
<div class="t" style="left:1044.5px;top:1060.1px;font-size:22.5px;color:#000000;transform:scaleX(1.0396);"><span class="u">tristique</span> <span class="u">senectus</span> et <span class="u">netus</span> et <span class="u">malesuada</span>. Nunc <span class="u">aliquet</span> <span class="u">bibendum</span> <span class="u">enim</span> <span class="u">facilisis</span> gravida. Velit <span class="u">aliquet</span></div>
<div class="t" style="left:1044.5px;top:1093.8px;font-size:22.5px;color:#000000;transform:scaleX(1.0564);"><span class="u">sagittis</span> id <span class="u">consectetur</span> <span class="u">purus</span> <span class="u">ut</span> <span class="u">faucibus</span> pulvinar. <span class="u">Nibh</span> <span class="u">tortor</span> id <span class="u">aliquet</span> <span class="u">lectus</span> <span class="u">proin</span> <span class="u">nibh</span> <span class="u">nisl</span></div>
<div class="t" style="left:1044.5px;top:1127.5px;font-size:22.5px;color:#000000;transform:scaleX(1.0504);"><span class="u">condimentum</span>. Risus <span class="u">feugiat</span> in ante <span class="u">metus</span> dictum at <span class="u">tempor</span>. <span class="u">Ultrices</span> gravida dictum <span class="u">fusce</span> <span class="u">ut</span></div>
<div class="t" style="left:1044.5px;top:1161.3px;font-size:22.5px;color:#000000;transform:scaleX(1.0406);"><span class="u">placerat</span> <span class="u">orci</span> <span class="u">nulla</span> <span class="u">pellentesque</span> <span class="u">dignissim</span>.</div>
<div class="t" style="left:1044.5px;top:1265.8px;font-size:22.5px;color:#000000;transform:scaleX(1.0663);"><span class="u">Tincidunt</span> dui <span class="u">ut</span> <span class="u">ornare</span> <span class="u">lectus</span>. Amet <span class="u">tellus</span> <span class="u">cras</span> <span class="u">adipiscing</span> <span class="u">enim</span> <span class="u">eu</span> <span class="u">turpis</span> <span class="u">egestas</span> <span class="u">pretium</span>. <span class="u">Diam</span></div>
<div class="t" style="left:1044.5px;top:1299.5px;font-size:22.5px;color:#000000;transform:scaleX(1.0461);"><span class="u">quam</span> <span class="u">nulla</span> <span class="u">porttitor</span> <span class="u">massa</span> id. Mus <span class="u">mauris</span> vitae <span class="u">ultricies</span> <span class="u">leo</span> integer <span class="u">malesuada</span> <span class="u">nunc</span> <span class="u">vel</span> <span class="u">risus</span>. <span class="u">Diam</span></div>
<div class="t" style="left:1044.5px;top:1333.2px;font-size:22.5px;color:#000000;transform:scaleX(1.0372);"><span class="u">maecenas</span> <span class="u">ultricies</span> mi <span class="u">eget</span>. Eu <span class="u">facilisis</span> <span class="u">sed</span> <span class="u">odio</span> <span class="u">morbi</span> <span class="u">quis</span> <span class="u">commodo</span> <span class="u">odio</span> <span class="u">aenean</span>. <span class="u">Lobortis</span></div>
<div class="t" style="left:1044.5px;top:1366.9px;font-size:22.5px;color:#000000;transform:scaleX(1.0279);"><span class="u">elementum</span> <span class="u">nibh</span> <span class="u">tellus</span> <span class="u">molestie</span>. <span class="u">Faucibus</span> <span class="u">ornare</span> <span class="u">suspendisse</span> <span class="u">sed</span> nisi. Eget <span class="u">egestas</span> <span class="u">purus</span> <span class="u">viverra</span></div>
<div class="t" style="left:1044.5px;top:1400.7px;font-size:22.5px;color:#000000;transform:scaleX(1.0491);"><span class="u">accumsan</span>. Ipsum <span class="u">dolor</span> sit <span class="u">amet</span> <span class="u">consectetur</span> <span class="u">adipiscing</span> <span class="u">elit</span> <span class="u">ut</span> <span class="u">aliquam</span>. Tellus at <span class="u">urna</span> <span class="u">condimentum</span></div>
<div class="t" style="left:1044.5px;top:1434.4px;font-size:22.5px;color:#000000;transform:scaleX(1.0549);"><span class="u">mattis</span> <span class="u">pellentesque</span> id. <span class="u">Aliquam</span> <span class="u">sem</span> et <span class="u">tortor</span> <span class="u">consequat</span> id porta. Ut <span class="u">eu</span> <span class="u">sem</span> integer vitae <span class="u">justo</span> <span class="u">eget</span>.</div>
<div class="t" style="left:1044.5px;top:1468.1px;font-size:22.5px;color:#000000;transform:scaleX(1.0299);">Lorem dolor sed viverra ipsum nunc aliquet.</div>
<svg style="left:0;top:0;position:absolute" width="2560" height="1510" viewBox="0 0 2560 1510"><path d="M1044.5,334.8l2.3,-3.4l2.3,3.4l2.3,-3.4l2.3,3.4l2.3,-3.4l2.3,3.4l2.3,-3.4l2.3,3.4l2.3,-3.4l2.3,3.4l2.3,-3.4l2.3,3.4l2.3,-3.4l2.3,3.4l2.3,-3.4l2.3,3.4l2.3,-3.4l2.3,3.4l2.3,-3.4l2.3,3.4l2.3,-3.4l2.3,3.4l2.3,-3.4l2.3,3.4l2.3,-3.4l2.3,3.4l2.3,-3.4l2.3,3.4l2.3,-3.4l2.3,3.4l2.3,-3.4l2.3,3.4l2.3,-3.4l2.3,3.4l2.3,-3.4l2.3,3.4l2.3,-3.4l2.3,3.4l2.3,-3.4l2.3,3.4l2.3,-3.4l2.3,3.4l2.3,-3.4l2.3,3.4l2.3,-3.4l2.3,3.4l2.3,-3.4 M1349.1,334.8l2.3,-3.4l2.3,3.4l2.3,-3.4l2.3,3.4l2.3,-3.4l2.3,3.4l2.3,-3.4l2.3,3.4l2.3,-3.4l2.3,3.4l2.3,-3.4l2.3,3.4l2.3,-3.4l2.3,3.4l2.3,-3.4l2.3,3.4l2.3,-3.4l2.3,3.4l2.3,-3.4l2.3,3.4l2.3,-3.4l2.3,3.4l2.3,-3.4l2.3,3.4l2.3,-3.4l2.3,3.4l2.3,-3.4l2.3,3.4l2.3,-3.4l2.3,3.4l2.3,-3.4l2.3,3.4l2.3,-3.4l2.3,3.4l2.3,-3.4l2.3,3.4l2.3,-3.4 M1440.3,334.8l2.3,-3.4l2.3,3.4l2.3,-3.4l2.3,3.4l2.3,-3.4l2.3,3.4l2.3,-3.4l2.3,3.4l2.3,-3.4l2.3,3.4l2.3,-3.4l2.3,3.4l2.3,-3.4l2.3,3.4l2.3,-3.4l2.3,3.4l2.3,-3.4l2.3,3.4l2.3,-3.4l2.3,3.4l2.3,-3.4l2.3,3.4l2.3,-3.4l2.3,3.4l2.3,-3.4 M1510.6,334.8l2.3,-3.4l2.3,3.4l2.3,-3.4l2.3,3.4l2.3,-3.4l2.3,3.4l2.3,-3.4l2.3,3.4l2.3,-3.4l2.3,3.4l2.3,-3.4l2.3,3.4l2.3,-3.4l2.3,3.4l2.3,-3.4l2.3,3.4l2.3,-3.4l2.3,3.4l2.3,-3.4l2.3,3.4l2.3,-3.4l2.3,3.4l2.3,-3.4l2.3,3.4l2.3,-3.4l2.3,3.4l2.3,-3.4l2.3,3.4l2.3,-3.4l2.3,3.4l2.3,-3.4l2.3,3.4l2.3,-3.4l2.3,3.4l2.3,-3.4l2.3,3.4l2.3,-3.4l2.3,3.4l2.3,-3.4l2.3,3.4l2.3,-3.4l2.3,3.4l2.3,-3.4l2.3,3.4l2.3,-3.4l2.3,3.4l2.3,-3.4l2.3,3.4 M1656.3,334.8l2.3,-3.4l2.3,3.4l2.3,-3.4l2.3,3.4l2.3,-3.4l2.3,3.4l2.3,-3.4l2.3,3.4l2.3,-3.4l2.3,3.4l2.3,-3.4l2.3,3.4l2.3,-3.4l2.3,3.4l2.3,-3.4l2.3,3.4l2.3,-3.4l2.3,3.4l2.3,-3.4l2.3,3.4l2.3,-3.4l2.3,3.4l2.3,-3.4 M1714.9,334.8l2.3,-3.4l2.3,3.4l2.3,-3.4l2.3,3.4l2.3,-3.4l2.3,3.4l2.3,-3.4l2.3,3.4l2.3,-3.4l2.3,3.4l2.3,-3.4l2.3,3.4l2.3,-3.4l2.3,3.4l2.3,-3.4l2.3,3.4l2.3,-3.4l2.3,3.4l2.3,-3.4l2.3,3.4l2.3,-3.4l2.3,3.4 M1770.9,334.8l2.3,-3.4l2.3,3.4l2.3,-3.4l2.3,3.4l2.3,-3.4l2.3,3.4l2.3,-3.4l2.3,3.4l2.3,-3.4l2.3,3.4l2.3,-3.4l2.3,3.4l2.3,-3.4l2.3,3.4l2.3,-3.4l2.3,3.4l2.3,-3.4l2.3,3.4l2.3,-3.4l2.3,3.4l2.3,-3.4l2.3,3.4l2.3,-3.4l2.3,3.4l2.3,-3.4l2.3,3.4l2.3,-3.4l2.3,3.4 M1841.2,334.8l2.3,-3.4l2.3,3.4l2.3,-3.4l2.3,3.4l2.3,-3.4l2.3,3.4l2.3,-3.4l2.3,3.4l2.3,-3.4l2.3,3.4l2.3,-3.4l2.3,3.4l2.3,-3.4l2.3,3.4l2.3,-3.4l2.3,3.4l2.3,-3.4l2.3,3.4l2.3,-3.4l2.3,3.4l2.3,-3.4l2.3,3.4l2.3,-3.4l2.3,3.4l2.3,-3.4 M1989.6,334.8l2.3,-3.4l2.3,3.4l2.3,-3.4l2.3,3.4l2.3,-3.4l2.3,3.4l2.3,-3.4l2.3,3.4l2.3,-3.4l2.3,3.4l2.3,-3.4l2.3,3.4l2.3,-3.4l2.3,3.4l2.3,-3.4l2.3,3.4l2.3,-3.4l2.3,3.4l2.3,-3.4l2.3,3.4l2.3,-3.4l2.3,3.4l2.3,-3.4l2.3,3.4l2.3,-3.4l2.3,3.4l2.3,-3.4l2.3,3.4 M1044.5,368.5l2.3,-3.4l2.3,3.4l2.3,-3.4l2.3,3.4l2.3,-3.4l2.3,3.4l2.3,-3.4l2.3,3.4l2.3,-3.4l2.3,3.4l2.3,-3.4l2.3,3.4l2.3,-3.4l2.3,3.4l2.3,-3.4l2.3,3.4l2.3,-3.4l2.3,3.4l2.3,-3.4l2.3,3.4l2.3,-3.4l2.3,3.4l2.3,-3.4l2.3,3.4l2.3,-3.4l2.3,3.4l2.3,-3.4l2.3,3.4l2.3,-3.4l2.3,3.4l2.3,-3.4l2.3,3.4l2.3,-3.4l2.3,3.4 M1129.4,368.5l2.3,-3.4l2.3,3.4l2.3,-3.4l2.3,3.4l2.3,-3.4l2.3,3.4l2.3,-3.4l2.3,3.4l2.3,-3.4l2.3,3.4l2.3,-3.4l2.3,3.4l2.3,-3.4l2.3,3.4l2.3,-3.4l2.3,3.4 M1173.8,368.5l2.3,-3.4l2.3,3.4l2.3,-3.4l2.3,3.4l2.3,-3.4l2.3,3.4l2.3,-3.4l2.3,3.4l2.3,-3.4l2.3,3.4l2.3,-3.4l2.3,3.4l2.3,-3.4l2.3,3.4l2.3,-3.4l2.3,3.4l2.3,-3.4l2.3,3.4l2.3,-3.4l2.3,3.4l2.3,-3.4l2.3,3.4l2.3,-3.4l2.3,3.4l2.3,-3.4l2.3,3.4l2.3,-3.4l2.3,3.4l2.3,-3.4l2.3,3.4l2.3,-3.4l2.3,3.4l2.3,-3.4l2.3,3.4l2.3,-3.4l2.3,3.4 M1262.6,368.5l2.3,-3.4l2.3,3.4l2.3,-3.4l2.3,3.4l2.3,-3.4l2.3,3.4l2.3,-3.4l2.3,3.4l2.3,-3.4l2.3,3.4l2.3,-3.4l2.3,3.4l2.3,-3.4l2.3,3.4l2.3,-3.4l2.3,3.4l2.3,-3.4l2.3,3.4l2.3,-3.4l2.3,3.4l2.3,-3.4l2.3,3.4l2.3,-3.4l2.3,3.4l2.3,-3.4l2.3,3.4l2.3,-3.4l2.3,3.4l2.3,-3.4l2.3,3.4l2.3,-3.4l2.3,3.4 M1368.4,368.5l2.3,-3.4l2.3,3.4l2.3,-3.4l2.3,3.4l2.3,-3.4l2.3,3.4l2.3,-3.4l2.3,3.4l2.3,-3.4l2.3,3.4l2.3,-3.4l2.3,3.4l2.3,-3.4l2.3,3.4l2.3,-3.4l2.3,3.4l2.3,-3.4l2.3,3.4l2.3,-3.4l2.3,3.4l2.3,-3.4l2.3,3.4l2.3,-3.4l2.3,3.4l2.3,-3.4l2.3,3.4l2.3,-3.4l2.3,3.4 M1495.1,368.5l2.3,-3.4l2.3,3.4l2.3,-3.4l2.3,3.4l2.3,-3.4l2.3,3.4l2.3,-3.4l2.3,3.4l2.3,-3.4l2.3,3.4l2.3,-3.4l2.3,3.4l2.3,-3.4l2.3,3.4l2.3,-3.4l2.3,3.4l2.3,-3.4l2.3,3.4l2.3,-3.4l2.3,3.4l2.3,-3.4l2.3,3.4l2.3,-3.4l2.3,3.4l2.3,-3.4l2.3,3.4l2.3,-3.4l2.3,3.4l2.3,-3.4l2.3,3.4 M1634.8,368.5l2.3,-3.4l2.3,3.4l2.3,-3.4l2.3,3.4l2.3,-3.4l2.3,3.4l2.3,-3.4l2.3,3.4l2.3,-3.4l2.3,3.4l2.3,-3.4l2.3,3.4l2.3,-3.4l2.3,3.4l2.3,-3.4l2.3,3.4l2.3,-3.4l2.3,3.4l2.3,-3.4l2.3,3.4l2.3,-3.4l2.3,3.4l2.3,-3.4l2.3,3.4l2.3,-3.4l2.3,3.4l2.3,-3.4l2.3,3.4l2.3,-3.4l2.3,3.4l2.3,-3.4l2.3,3.4l2.3,-3.4l2.3,3.4l2.3,-3.4l2.3,3.4 M1723.7,368.5l2.3,-3.4l2.3,3.4l2.3,-3.4l2.3,3.4l2.3,-3.4l2.3,3.4l2.3,-3.4l2.3,3.4l2.3,-3.4l2.3,3.4l2.3,-3.4l2.3,3.4l2.3,-3.4l2.3,3.4l2.3,-3.4l2.3,3.4 M1768.1,368.5l2.3,-3.4l2.3,3.4l2.3,-3.4l2.3,3.4l2.3,-3.4l2.3,3.4l2.3,-3.4l2.3,3.4l2.3,-3.4l2.3,3.4l2.3,-3.4l2.3,3.4l2.3,-3.4l2.3,3.4l2.3,-3.4l2.3,3.4l2.3,-3.4l2.3,3.4l2.3,-3.4 M1819.0,368.5l2.3,-3.4l2.3,3.4l2.3,-3.4l2.3,3.4l2.3,-3.4l2.3,3.4l2.3,-3.4l2.3,3.4l2.3,-3.4l2.3,3.4l2.3,-3.4l2.3,3.4l2.3,-3.4l2.3,3.4l2.3,-3.4l2.3,3.4l2.3,-3.4l2.3,3.4l2.3,-3.4l2.3,3.4l2.3,-3.4l2.3,3.4l2.3,-3.4l2.3,3.4l2.3,-3.4l2.3,3.4l2.3,-3.4l2.3,3.4l2.3,-3.4l2.3,3.4 M1893.5,368.5l2.3,-3.4l2.3,3.4l2.3,-3.4l2.3,3.4l2.3,-3.4l2.3,3.4l2.3,-3.4l2.3,3.4l2.3,-3.4l2.3,3.4l2.3,-3.4l2.3,3.4l2.3,-3.4l2.3,3.4l2.3,-3.4l2.3,3.4l2.3,-3.4l2.3,3.4l2.3,-3.4l2.3,3.4 M2017.6,368.5l2.3,-3.4l2.3,3.4l2.3,-3.4l2.3,3.4l2.3,-3.4l2.3,3.4l2.3,-3.4l2.3,3.4l2.3,-3.4l2.3,3.4l2.3,-3.4l2.3,3.4l2.3,-3.4l2.3,3.4l2.3,-3.4l2.3,3.4l2.3,-3.4l2.3,3.4l2.3,-3.4l2.3,3.4 M1044.5,402.2l2.3,-3.4l2.3,3.4l2.3,-3.4l2.3,3.4l2.3,-3.4l2.3,3.4l2.3,-3.4l2.3,3.4l2.3,-3.4l2.3,3.4l2.3,-3.4l2.3,3.4l2.3,-3.4l2.3,3.4l2.3,-3.4l2.3,3.4l2.3,-3.4l2.3,3.4l2.3,-3.4l2.3,3.4l2.3,-3.4l2.3,3.4l2.3,-3.4l2.3,3.4l2.3,-3.4l2.3,3.4l2.3,-3.4l2.3,3.4l2.3,-3.4l2.3,3.4l2.3,-3.4l2.3,3.4l2.3,-3.4l2.3,3.4l2.3,-3.4l2.3,3.4l2.3,-3.4l2.3,3.4l2.3,-3.4l2.3,3.4l2.3,-3.4l2.3,3.4l2.3,-3.4l2.3,3.4l2.3,-3.4l2.3,3.4l2.3,-3.4l2.3,3.4l2.3,-3.4l2.3,3.4l2.3,-3.4l2.3,3.4l2.3,-3.4l2.3,3.4l2.3,-3.4l2.3,3.4l2.3,-3.4l2.3,3.4l2.3,-3.4l2.3,3.4l2.3,-3.4l2.3,3.4 M1192.7,402.2l2.3,-3.4l2.3,3.4l2.3,-3.4l2.3,3.4l2.3,-3.4l2.3,3.4l2.3,-3.4l2.3,3.4l2.3,-3.4l2.3,3.4l2.3,-3.4l2.3,3.4l2.3,-3.4l2.3,3.4l2.3,-3.4l2.3,3.4l2.3,-3.4l2.3,3.4l2.3,-3.4l2.3,3.4l2.3,-3.4l2.3,3.4l2.3,-3.4l2.3,3.4l2.3,-3.4l2.3,3.4l2.3,-3.4 M1262.2,402.2l2.3,-3.4l2.3,3.4l2.3,-3.4l2.3,3.4l2.3,-3.4l2.3,3.4l2.3,-3.4l2.3,3.4l2.3,-3.4l2.3,3.4l2.3,-3.4l2.3,3.4l2.3,-3.4l2.3,3.4l2.3,-3.4l2.3,3.4l2.3,-3.4l2.3,3.4l2.3,-3.4l2.3,3.4l2.3,-3.4l2.3,3.4l2.3,-3.4l2.3,3.4l2.3,-3.4l2.3,3.4l2.3,-3.4l2.3,3.4l2.3,-3.4l2.3,3.4l2.3,-3.4l2.3,3.4l2.3,-3.4l2.3,3.4l2.3,-3.4l2.3,3.4l2.3,-3.4l2.3,3.4l2.3,-3.4l2.3,3.4l2.3,-3.4l2.3,3.4l2.3,-3.4l2.3,3.4l2.3,-3.4l2.3,3.4l2.3,-3.4l2.3,3.4l2.3,-3.4l2.3,3.4l2.3,-3.4l2.3,3.4l2.3,-3.4l2.3,3.4l2.3,-3.4l2.3,3.4l2.3,-3.4l2.3,3.4 M1427.5,402.2l2.3,-3.4l2.3,3.4l2.3,-3.4l2.3,3.4l2.3,-3.4l2.3,3.4l2.3,-3.4l2.3,3.4l2.3,-3.4l2.3,3.4l2.3,-3.4l2.3,3.4l2.3,-3.4l2.3,3.4l2.3,-3.4l2.3,3.4l2.3,-3.4l2.3,3.4l2.3,-3.4 M1520.6,402.2l2.3,-3.4l2.3,3.4l2.3,-3.4l2.3,3.4l2.3,-3.4l2.3,3.4l2.3,-3.4l2.3,3.4l2.3,-3.4l2.3,3.4l2.3,-3.4l2.3,3.4l2.3,-3.4l2.3,3.4l2.3,-3.4l2.3,3.4l2.3,-3.4l2.3,3.4l2.3,-3.4l2.3,3.4l2.3,-3.4l2.3,3.4l2.3,-3.4l2.3,3.4l2.3,-3.4l2.3,3.4l2.3,-3.4l2.3,3.4l2.3,-3.4l2.3,3.4l2.3,-3.4l2.3,3.4l2.3,-3.4l2.3,3.4l2.3,-3.4l2.3,3.4l2.3,-3.4l2.3,3.4l2.3,-3.4l2.3,3.4l2.3,-3.4l2.3,3.4l2.3,-3.4l2.3,3.4l2.3,-3.4l2.3,3.4l2.3,-3.4 M1667.5,402.2l2.3,-3.4l2.3,3.4l2.3,-3.4l2.3,3.4l2.3,-3.4l2.3,3.4l2.3,-3.4l2.3,3.4l2.3,-3.4l2.3,3.4l2.3,-3.4l2.3,3.4l2.3,-3.4l2.3,3.4l2.3,-3.4l2.3,3.4l2.3,-3.4l2.3,3.4 M1716.0,402.2l2.3,-3.4l2.3,3.4l2.3,-3.4l2.3,3.4l2.3,-3.4l2.3,3.4l2.3,-3.4l2.3,3.4l2.3,-3.4l2.3,3.4l2.3,-3.4l2.3,3.4l2.3,-3.4l2.3,3.4l2.3,-3.4l2.3,3.4l2.3,-3.4l2.3,3.4l2.3,-3.4l2.3,3.4l2.3,-3.4l2.3,3.4l2.3,-3.4l2.3,3.4l2.3,-3.4l2.3,3.4l2.3,-3.4l2.3,3.4 M1813.1,402.2l2.3,-3.4l2.3,3.4l2.3,-3.4l2.3,3.4l2.3,-3.4l2.3,3.4l2.3,-3.4l2.3,3.4l2.3,-3.4l2.3,3.4l2.3,-3.4l2.3,3.4l2.3,-3.4l2.3,3.4l2.3,-3.4l2.3,3.4l2.3,-3.4l2.3,3.4l2.3,-3.4 M1864.3,402.2l2.3,-3.4l2.3,3.4l2.3,-3.4l2.3,3.4l2.3,-3.4l2.3,3.4l2.3,-3.4l2.3,3.4l2.3,-3.4l2.3,3.4l2.3,-3.4l2.3,3.4l2.3,-3.4l2.3,3.4l2.3,-3.4l2.3,3.4l2.3,-3.4l2.3,3.4l2.3,-3.4l2.3,3.4l2.3,-3.4l2.3,3.4l2.3,-3.4l2.3,3.4l2.3,-3.4l2.3,3.4l2.3,-3.4l2.3,3.4l2.3,-3.4l2.3,3.4l2.3,-3.4l2.3,3.4l2.3,-3.4l2.3,3.4l2.3,-3.4l2.3,3.4l2.3,-3.4l2.3,3.4l2.3,-3.4l2.3,3.4l2.3,-3.4l2.3,3.4l2.3,-3.4l2.3,3.4l2.3,-3.4l2.3,3.4l2.3,-3.4l2.3,3.4l2.3,-3.4l2.3,3.4l2.3,-3.4l2.3,3.4l2.3,-3.4l2.3,3.4l2.3,-3.4l2.3,3.4l2.3,-3.4l2.3,3.4 M2009.9,402.2l2.3,-3.4l2.3,3.4l2.3,-3.4l2.3,3.4l2.3,-3.4l2.3,3.4l2.3,-3.4l2.3,3.4l2.3,-3.4l2.3,3.4l2.3,-3.4l2.3,3.4l2.3,-3.4l2.3,3.4l2.3,-3.4l2.3,3.4l2.3,-3.4l2.3,3.4l2.3,-3.4l2.3,3.4l2.3,-3.4l2.3,3.4l2.3,-3.4l2.3,3.4l2.3,-3.4l2.3,3.4l2.3,-3.4l2.3,3.4l2.3,-3.4l2.3,3.4l2.3,-3.4l2.3,3.4l2.3,-3.4l2.3,3.4l2.3,-3.4l2.3,3.4l2.3,-3.4 M1044.5,435.9l2.3,-3.4l2.3,3.4l2.3,-3.4l2.3,3.4l2.3,-3.4l2.3,3.4l2.3,-3.4l2.3,3.4l2.3,-3.4l2.3,3.4l2.3,-3.4l2.3,3.4l2.3,-3.4l2.3,3.4l2.3,-3.4l2.3,3.4l2.3,-3.4l2.3,3.4l2.3,-3.4 M1121.4,435.9l2.3,-3.4l2.3,3.4l2.3,-3.4l2.3,3.4l2.3,-3.4l2.3,3.4l2.3,-3.4l2.3,3.4l2.3,-3.4l2.3,3.4l2.3,-3.4l2.3,3.4l2.3,-3.4l2.3,3.4l2.3,-3.4l2.3,3.4l2.3,-3.4l2.3,3.4l2.3,-3.4l2.3,3.4l2.3,-3.4l2.3,3.4l2.3,-3.4l2.3,3.4 M1182.6,435.9l2.3,-3.4l2.3,3.4l2.3,-3.4l2.3,3.4l2.3,-3.4l2.3,3.4l2.3,-3.4l2.3,3.4l2.3,-3.4l2.3,3.4l2.3,-3.4l2.3,3.4l2.3,-3.4l2.3,3.4l2.3,-3.4l2.3,3.4l2.3,-3.4l2.3,3.4l2.3,-3.4l2.3,3.4l2.3,-3.4l2.3,3.4l2.3,-3.4l2.3,3.4l2.3,-3.4l2.3,3.4l2.3,-3.4l2.3,3.4l2.3,-3.4l2.3,3.4l2.3,-3.4l2.3,3.4l2.3,-3.4l2.3,3.4l2.3,-3.4l2.3,3.4l2.3,-3.4l2.3,3.4l2.3,-3.4l2.3,3.4l2.3,-3.4l2.3,3.4l2.3,-3.4l2.3,3.4l2.3,-3.4l2.3,3.4l2.3,-3.4 M1442.0,435.9l2.3,-3.4l2.3,3.4l2.3,-3.4l2.3,3.4l2.3,-3.4l2.3,3.4l2.3,-3.4l2.3,3.4l2.3,-3.4l2.3,3.4l2.3,-3.4l2.3,3.4l2.3,-3.4l2.3,3.4l2.3,-3.4l2.3,3.4l2.3,-3.4l2.3,3.4l2.3,-3.4l2.3,3.4l2.3,-3.4l2.3,3.4 M1499.4,435.9l2.3,-3.4l2.3,3.4l2.3,-3.4l2.3,3.4l2.3,-3.4l2.3,3.4l2.3,-3.4l2.3,3.4l2.3,-3.4l2.3,3.4l2.3,-3.4l2.3,3.4l2.3,-3.4l2.3,3.4l2.3,-3.4l2.3,3.4l2.3,-3.4l2.3,3.4l2.3,-3.4l2.3,3.4l2.3,-3.4l2.3,3.4l2.3,-3.4l2.3,3.4l2.3,-3.4l2.3,3.4l2.3,-3.4l2.3,3.4l2.3,-3.4l2.3,3.4l2.3,-3.4l2.3,3.4l2.3,-3.4l2.3,3.4l2.3,-3.4l2.3,3.4l2.3,-3.4l2.3,3.4l2.3,-3.4l2.3,3.4 M1597.1,435.9l2.3,-3.4l2.3,3.4l2.3,-3.4l2.3,3.4l2.3,-3.4l2.3,3.4l2.3,-3.4l2.3,3.4l2.3,-3.4l2.3,3.4l2.3,-3.4l2.3,3.4l2.3,-3.4l2.3,3.4l2.3,-3.4l2.3,3.4l2.3,-3.4l2.3,3.4l2.3,-3.4l2.3,3.4l2.3,-3.4l2.3,3.4l2.3,-3.4l2.3,3.4l2.3,-3.4l2.3,3.4l2.3,-3.4l2.3,3.4l2.3,-3.4l2.3,3.4l2.3,-3.4l2.3,3.4l2.3,-3.4l2.3,3.4l2.3,-3.4l2.3,3.4l2.3,-3.4l2.3,3.4l2.3,-3.4l2.3,3.4l2.3,-3.4l2.3,3.4l2.3,-3.4l2.3,3.4l2.3,-3.4l2.3,3.4l2.3,-3.4l2.3,3.4l2.3,-3.4l2.3,3.4 M1719.6,435.9l2.3,-3.4l2.3,3.4l2.3,-3.4l2.3,3.4l2.3,-3.4l2.3,3.4l2.3,-3.4l2.3,3.4l2.3,-3.4l2.3,3.4l2.3,-3.4l2.3,3.4l2.3,-3.4l2.3,3.4l2.3,-3.4l2.3,3.4l2.3,-3.4l2.3,3.4l2.3,-3.4l2.3,3.4l2.3,-3.4l2.3,3.4l2.3,-3.4l2.3,3.4l2.3,-3.4l2.3,3.4l2.3,-3.4l2.3,3.4l2.3,-3.4l2.3,3.4l2.3,-3.4l2.3,3.4l2.3,-3.4 M1801.7,435.9l2.3,-3.4l2.3,3.4l2.3,-3.4l2.3,3.4l2.3,-3.4l2.3,3.4l2.3,-3.4l2.3,3.4l2.3,-3.4l2.3,3.4l2.3,-3.4l2.3,3.4l2.3,-3.4l2.3,3.4 M1839.5,435.9l2.3,-3.4l2.3,3.4l2.3,-3.4l2.3,3.4l2.3,-3.4l2.3,3.4l2.3,-3.4l2.3,3.4l2.3,-3.4l2.3,3.4l2.3,-3.4l2.3,3.4l2.3,-3.4 M1876.0,435.9l2.3,-3.4l2.3,3.4l2.3,-3.4l2.3,3.4l2.3,-3.4l2.3,3.4l2.3,-3.4l2.3,3.4l2.3,-3.4l2.3,3.4l2.3,-3.4l2.3,3.4l2.3,-3.4l2.3,3.4l2.3,-3.4l2.3,3.4l2.3,-3.4l2.3,3.4l2.3,-3.4l2.3,3.4l2.3,-3.4l2.3,3.4l2.3,-3.4l2.3,3.4l2.3,-3.4l2.3,3.4l2.3,-3.4l2.3,3.4l2.3,-3.4l2.3,3.4l2.3,-3.4l2.3,3.4 M1963.3,435.9l2.3,-3.4l2.3,3.4l2.3,-3.4l2.3,3.4l2.3,-3.4l2.3,3.4l2.3,-3.4l2.3,3.4l2.3,-3.4l2.3,3.4l2.3,-3.4l2.3,3.4l2.3,-3.4l2.3,3.4l2.3,-3.4l2.3,3.4l2.3,-3.4l2.3,3.4l2.3,-3.4l2.3,3.4l2.3,-3.4l2.3,3.4l2.3,-3.4l2.3,3.4l2.3,-3.4l2.3,3.4l2.3,-3.4l2.3,3.4l2.3,-3.4l2.3,3.4l2.3,-3.4l2.3,3.4l2.3,-3.4l2.3,3.4l2.3,-3.4l2.3,3.4l2.3,-3.4 M1044.5,469.7l2.3,-3.4l2.3,3.4l2.3,-3.4l2.3,3.4l2.3,-3.4l2.3,3.4l2.3,-3.4l2.3,3.4l2.3,-3.4l2.3,3.4l2.3,-3.4l2.3,3.4l2.3,-3.4l2.3,3.4l2.3,-3.4l2.3,3.4l2.3,-3.4l2.3,3.4l2.3,-3.4l2.3,3.4l2.3,-3.4l2.3,3.4l2.3,-3.4l2.3,3.4 M1106.8,469.7l2.3,-3.4l2.3,3.4l2.3,-3.4l2.3,3.4l2.3,-3.4l2.3,3.4l2.3,-3.4l2.3,3.4l2.3,-3.4l2.3,3.4l2.3,-3.4l2.3,3.4l2.3,-3.4l2.3,3.4l2.3,-3.4l2.3,3.4l2.3,-3.4l2.3,3.4l2.3,-3.4l2.3,3.4l2.3,-3.4l2.3,3.4l2.3,-3.4l2.3,3.4l2.3,-3.4l2.3,3.4l2.3,-3.4l2.3,3.4l2.3,-3.4l2.3,3.4 M1182.3,469.7l2.3,-3.4l2.3,3.4l2.3,-3.4l2.3,3.4l2.3,-3.4l2.3,3.4l2.3,-3.4l2.3,3.4l2.3,-3.4l2.3,3.4l2.3,-3.4l2.3,3.4l2.3,-3.4l2.3,3.4l2.3,-3.4l2.3,3.4l2.3,-3.4l2.3,3.4l2.3,-3.4l2.3,3.4l2.3,-3.4l2.3,3.4l2.3,-3.4l2.3,3.4 M1244.6,469.7l2.3,-3.4l2.3,3.4l2.3,-3.4l2.3,3.4l2.3,-3.4l2.3,3.4l2.3,-3.4l2.3,3.4l2.3,-3.4l2.3,3.4l2.3,-3.4l2.3,3.4l2.3,-3.4l2.3,3.4l2.3,-3.4l2.3,3.4l2.3,-3.4l2.3,3.4l2.3,-3.4l2.3,3.4l2.3,-3.4l2.3,3.4l2.3,-3.4l2.3,3.4l2.3,-3.4l2.3,3.4l2.3,-3.4l2.3,3.4l2.3,-3.4l2.3,3.4l2.3,-3.4l2.3,3.4l2.3,-3.4l2.3,3.4l2.3,-3.4l2.3,3.4l2.3,-3.4l2.3,3.4l2.3,-3.4l2.3,3.4l2.3,-3.4l2.3,3.4l2.3,-3.4l2.3,3.4l2.3,-3.4l2.3,3.4l2.3,-3.4l2.3,3.4l2.3,-3.4l2.3,3.4l2.3,-3.4l2.3,3.4l2.3,-3.4l2.3,3.4l2.3,-3.4l2.3,3.4l2.3,-3.4l2.3,3.4l2.3,-3.4 M1391.8,469.7l2.3,-3.4l2.3,3.4l2.3,-3.4l2.3,3.4l2.3,-3.4l2.3,3.4l2.3,-3.4l2.3,3.4l2.3,-3.4l2.3,3.4l2.3,-3.4l2.3,3.4l2.3,-3.4l2.3,3.4l2.3,-3.4l2.3,3.4l2.3,-3.4l2.3,3.4l2.3,-3.4l2.3,3.4l2.3,-3.4l2.3,3.4l2.3,-3.4l2.3,3.4l2.3,-3.4l2.3,3.4l2.3,-3.4l2.3,3.4l2.3,-3.4l2.3,3.4l2.3,-3.4l2.3,3.4 M1471.3,469.7l2.3,-3.4l2.3,3.4l2.3,-3.4l2.3,3.4l2.3,-3.4l2.3,3.4l2.3,-3.4l2.3,3.4l2.3,-3.4l2.3,3.4l2.3,-3.4l2.3,3.4l2.3,-3.4l2.3,3.4l2.3,-3.4l2.3,3.4l2.3,-3.4l2.3,3.4l2.3,-3.4l2.3,3.4l2.3,-3.4l2.3,3.4l2.3,-3.4l2.3,3.4l2.3,-3.4l2.3,3.4l2.3,-3.4l2.3,3.4l2.3,-3.4l2.3,3.4l2.3,-3.4l2.3,3.4 M1577.3,469.7l2.3,-3.4l2.3,3.4l2.3,-3.4l2.3,3.4l2.3,-3.4l2.3,3.4l2.3,-3.4l2.3,3.4l2.3,-3.4l2.3,3.4l2.3,-3.4l2.3,3.4l2.3,-3.4l2.3,3.4l2.3,-3.4l2.3,3.4l2.3,-3.4l2.3,3.4l2.3,-3.4l2.3,3.4l2.3,-3.4l2.3,3.4l2.3,-3.4l2.3,3.4l2.3,-3.4l2.3,3.4l2.3,-3.4l2.3,3.4l2.3,-3.4l2.3,3.4l2.3,-3.4l2.3,3.4l2.3,-3.4l2.3,3.4l2.3,-3.4l2.3,3.4l2.3,-3.4l2.3,3.4l2.3,-3.4l2.3,3.4l2.3,-3.4l2.3,3.4l2.3,-3.4l2.3,3.4l2.3,-3.4l2.3,3.4l2.3,-3.4l2.3,3.4l2.3,-3.4l2.3,3.4l2.3,-3.4l2.3,3.4l2.3,-3.4l2.3,3.4 M1707.2,469.7l2.3,-3.4l2.3,3.4l2.3,-3.4l2.3,3.4l2.3,-3.4l2.3,3.4l2.3,-3.4l2.3,3.4l2.3,-3.4l2.3,3.4l2.3,-3.4l2.3,3.4l2.3,-3.4l2.3,3.4l2.3,-3.4l2.3,3.4l2.3,-3.4l2.3,3.4l2.3,-3.4l2.3,3.4l2.3,-3.4l2.3,3.4l2.3,-3.4l2.3,3.4l2.3,-3.4l2.3,3.4 M1773.4,469.7l2.3,-3.4l2.3,3.4l2.3,-3.4l2.3,3.4l2.3,-3.4l2.3,3.4l2.3,-3.4l2.3,3.4l2.3,-3.4 M1800.0,469.7l2.3,-3.4l2.3,3.4l2.3,-3.4l2.3,3.4l2.3,-3.4l2.3,3.4l2.3,-3.4l2.3,3.4l2.3,-3.4l2.3,3.4l2.3,-3.4l2.3,3.4l2.3,-3.4l2.3,3.4l2.3,-3.4l2.3,3.4l2.3,-3.4l2.3,3.4l2.3,-3.4l2.3,3.4l2.3,-3.4l2.3,3.4l2.3,-3.4l2.3,3.4l2.3,-3.4l2.3,3.4l2.3,-3.4l2.3,3.4l2.3,-3.4l2.3,3.4l2.3,-3.4l2.3,3.4l2.3,-3.4l2.3,3.4l2.3,-3.4l2.3,3.4l2.3,-3.4l2.3,3.4l2.3,-3.4 M1044.5,503.4l2.3,-3.4l2.3,3.4l2.3,-3.4l2.3,3.4l2.3,-3.4l2.3,3.4l2.3,-3.4l2.3,3.4l2.3,-3.4l2.3,3.4l2.3,-3.4l2.3,3.4l2.3,-3.4l2.3,3.4l2.3,-3.4l2.3,3.4l2.3,-3.4l2.3,3.4l2.3,-3.4l2.3,3.4l2.3,-3.4l2.3,3.4l2.3,-3.4l2.3,3.4l2.3,-3.4l2.3,3.4l2.3,-3.4l2.3,3.4l2.3,-3.4l2.3,3.4l2.3,-3.4l2.3,3.4l2.3,-3.4l2.3,3.4l2.3,-3.4l2.3,3.4l2.3,-3.4l2.3,3.4l2.3,-3.4l2.3,3.4l2.3,-3.4l2.3,3.4l2.3,-3.4l2.3,3.4 M1152.2,503.4l2.3,-3.4l2.3,3.4l2.3,-3.4l2.3,3.4l2.3,-3.4l2.3,3.4l2.3,-3.4l2.3,3.4l2.3,-3.4l2.3,3.4l2.3,-3.4l2.3,3.4l2.3,-3.4l2.3,3.4l2.3,-3.4l2.3,3.4l2.3,-3.4l2.3,3.4l2.3,-3.4l2.3,3.4l2.3,-3.4l2.3,3.4l2.3,-3.4l2.3,3.4l2.3,-3.4l2.3,3.4l2.3,-3.4l2.3,3.4 M1222.7,503.4l2.3,-3.4l2.3,3.4l2.3,-3.4l2.3,3.4l2.3,-3.4l2.3,3.4l2.3,-3.4l2.3,3.4l2.3,-3.4l2.3,3.4l2.3,-3.4l2.3,3.4l2.3,-3.4l2.3,3.4l2.3,-3.4l2.3,3.4l2.3,-3.4l2.3,3.4l2.3,-3.4l2.3,3.4l2.3,-3.4l2.3,3.4l2.3,-3.4l2.3,3.4l2.3,-3.4l2.3,3.4l2.3,-3.4l2.3,3.4l2.3,-3.4l2.3,3.4l2.3,-3.4l2.3,3.4l2.3,-3.4l2.3,3.4l2.3,-3.4 M1309.9,503.4l2.3,-3.4l2.3,3.4l2.3,-3.4l2.3,3.4l2.3,-3.4l2.3,3.4l2.3,-3.4l2.3,3.4l2.3,-3.4l2.3,3.4l2.3,-3.4l2.3,3.4l2.3,-3.4l2.3,3.4l2.3,-3.4l2.3,3.4l2.3,-3.4l2.3,3.4l2.3,-3.4l2.3,3.4l2.3,-3.4l2.3,3.4l2.3,-3.4l2.3,3.4l2.3,-3.4l2.3,3.4l2.3,-3.4l2.3,3.4l2.3,-3.4l2.3,3.4l2.3,-3.4l2.3,3.4l2.3,-3.4 M1094.5,608.4l2.3,-3.4l2.3,3.4l2.3,-3.4l2.3,3.4l2.3,-3.4l2.3,3.4l2.3,-3.4l2.3,3.4l2.3,-3.4l2.3,3.4l2.3,-3.4l2.3,3.4l2.3,-3.4l2.3,3.4l2.3,-3.4l2.3,3.4l2.3,-3.4l2.3,3.4l2.3,-3.4l2.3,3.4l2.3,-3.4l2.3,3.4l2.3,-3.4l2.3,3.4l2.3,-3.4l2.3,3.4l2.3,-3.4l2.3,3.4l2.3,-3.4l2.3,3.4l2.3,-3.4l2.3,3.4l2.3,-3.4l2.3,3.4l2.3,-3.4l2.3,3.4l2.3,-3.4l2.3,3.4 M1212.3,608.4l2.3,-3.4l2.3,3.4l2.3,-3.4l2.3,3.4l2.3,-3.4l2.3,3.4l2.3,-3.4l2.3,3.4l2.3,-3.4l2.3,3.4l2.3,-3.4l2.3,3.4l2.3,-3.4l2.3,3.4l2.3,-3.4l2.3,3.4l2.3,-3.4l2.3,3.4l2.3,-3.4l2.3,3.4l2.3,-3.4l2.3,3.4l2.3,-3.4l2.3,3.4l2.3,-3.4l2.3,3.4l2.3,-3.4l2.3,3.4l2.3,-3.4l2.3,3.4l2.3,-3.4l2.3,3.4l2.3,-3.4l2.3,3.4l2.3,-3.4l2.3,3.4l2.3,-3.4l2.3,3.4l2.3,-3.4l2.3,3.4l2.3,-3.4l2.3,3.4l2.3,-3.4l2.3,3.4l2.3,-3.4l2.3,3.4l2.3,-3.4l2.3,3.4l2.3,-3.4l2.3,3.4l2.3,-3.4l2.3,3.4l2.3,-3.4l2.3,3.4l2.3,-3.4l2.3,3.4l2.3,-3.4 M1349.5,608.4l2.3,-3.4l2.3,3.4l2.3,-3.4l2.3,3.4l2.3,-3.4l2.3,3.4l2.3,-3.4l2.3,3.4l2.3,-3.4l2.3,3.4l2.3,-3.4l2.3,3.4l2.3,-3.4l2.3,3.4l2.3,-3.4l2.3,3.4l2.3,-3.4l2.3,3.4l2.3,-3.4l2.3,3.4l2.3,-3.4l2.3,3.4l2.3,-3.4l2.3,3.4l2.3,-3.4l2.3,3.4l2.3,-3.4l2.3,3.4l2.3,-3.4l2.3,3.4 M1423.8,608.4l2.3,-3.4l2.3,3.4l2.3,-3.4l2.3,3.4l2.3,-3.4l2.3,3.4l2.3,-3.4l2.3,3.4l2.3,-3.4l2.3,3.4l2.3,-3.4l2.3,3.4l2.3,-3.4l2.3,3.4l2.3,-3.4l2.3,3.4l2.3,-3.4l2.3,3.4l2.3,-3.4l2.3,3.4l2.3,-3.4l2.3,3.4l2.3,-3.4l2.3,3.4l2.3,-3.4l2.3,3.4l2.3,-3.4l2.3,3.4l2.3,-3.4l2.3,3.4l2.3,-3.4l2.3,3.4l2.3,-3.4l2.3,3.4l2.3,-3.4l2.3,3.4 M1512.2,608.4l2.3,-3.4l2.3,3.4l2.3,-3.4l2.3,3.4l2.3,-3.4l2.3,3.4l2.3,-3.4l2.3,3.4l2.3,-3.4l2.3,3.4l2.3,-3.4l2.3,3.4l2.3,-3.4l2.3,3.4l2.3,-3.4l2.3,3.4l2.3,-3.4l2.3,3.4 M1560.9,608.4l2.3,-3.4l2.3,3.4l2.3,-3.4l2.3,3.4l2.3,-3.4l2.3,3.4l2.3,-3.4l2.3,3.4l2.3,-3.4l2.3,3.4l2.3,-3.4l2.3,3.4l2.3,-3.4l2.3,3.4l2.3,-3.4l2.3,3.4l2.3,-3.4l2.3,3.4l2.3,-3.4l2.3,3.4l2.3,-3.4l2.3,3.4l2.3,-3.4l2.3,3.4l2.3,-3.4l2.3,3.4l2.3,-3.4l2.3,3.4l2.3,-3.4l2.3,3.4l2.3,-3.4l2.3,3.4l2.3,-3.4l2.3,3.4 M1901.7,608.4l2.3,-3.4l2.3,3.4l2.3,-3.4l2.3,3.4l2.3,-3.4l2.3,3.4l2.3,-3.4l2.3,3.4l2.3,-3.4l2.3,3.4l2.3,-3.4l2.3,3.4l2.3,-3.4l2.3,3.4l2.3,-3.4l2.3,3.4l2.3,-3.4l2.3,3.4l2.3,-3.4l2.3,3.4l2.3,-3.4l2.3,3.4l2.3,-3.4l2.3,3.4l2.3,-3.4l2.3,3.4l2.3,-3.4l2.3,3.4l2.3,-3.4l2.3,3.4l2.3,-3.4l2.3,3.4l2.3,-3.4l2.3,3.4l2.3,-3.4l2.3,3.4 M1044.5,642.1l2.3,-3.4l2.3,3.4l2.3,-3.4l2.3,3.4l2.3,-3.4l2.3,3.4l2.3,-3.4l2.3,3.4l2.3,-3.4l2.3,3.4l2.3,-3.4l2.3,3.4l2.3,-3.4l2.3,3.4l2.3,-3.4l2.3,3.4l2.3,-3.4l2.3,3.4l2.3,-3.4l2.3,3.4l2.3,-3.4l2.3,3.4l2.3,-3.4l2.3,3.4l2.3,-3.4l2.3,3.4l2.3,-3.4l2.3,3.4l2.3,-3.4l2.3,3.4l2.3,-3.4l2.3,3.4l2.3,-3.4l2.3,3.4l2.3,-3.4l2.3,3.4l2.3,-3.4l2.3,3.4l2.3,-3.4l2.3,3.4l2.3,-3.4l2.3,3.4l2.3,-3.4l2.3,3.4 M1178.6,642.1l2.3,-3.4l2.3,3.4l2.3,-3.4l2.3,3.4l2.3,-3.4l2.3,3.4l2.3,-3.4l2.3,3.4l2.3,-3.4l2.3,3.4l2.3,-3.4l2.3,3.4l2.3,-3.4l2.3,3.4l2.3,-3.4l2.3,3.4l2.3,-3.4l2.3,3.4l2.3,-3.4l2.3,3.4l2.3,-3.4l2.3,3.4l2.3,-3.4l2.3,3.4l2.3,-3.4l2.3,3.4l2.3,-3.4l2.3,3.4l2.3,-3.4l2.3,3.4l2.3,-3.4l2.3,3.4l2.3,-3.4 M1437.7,642.1l2.3,-3.4l2.3,3.4l2.3,-3.4l2.3,3.4l2.3,-3.4l2.3,3.4l2.3,-3.4l2.3,3.4l2.3,-3.4l2.3,3.4l2.3,-3.4l2.3,3.4l2.3,-3.4l2.3,3.4l2.3,-3.4l2.3,3.4l2.3,-3.4l2.3,3.4l2.3,-3.4l2.3,3.4l2.3,-3.4l2.3,3.4l2.3,-3.4l2.3,3.4l2.3,-3.4 M1527.5,642.1l2.3,-3.4l2.3,3.4l2.3,-3.4l2.3,3.4l2.3,-3.4l2.3,3.4l2.3,-3.4l2.3,3.4l2.3,-3.4l2.3,3.4l2.3,-3.4l2.3,3.4l2.3,-3.4l2.3,3.4l2.3,-3.4l2.3,3.4l2.3,-3.4l2.3,3.4l2.3,-3.4l2.3,3.4l2.3,-3.4l2.3,3.4l2.3,-3.4l2.3,3.4l2.3,-3.4l2.3,3.4l2.3,-3.4l2.3,3.4l2.3,-3.4l2.3,3.4l2.3,-3.4l2.3,3.4l2.3,-3.4l2.3,3.4l2.3,-3.4l2.3,3.4l2.3,-3.4l2.3,3.4l2.3,-3.4l2.3,3.4l2.3,-3.4l2.3,3.4l2.3,-3.4l2.3,3.4l2.3,-3.4l2.3,3.4l2.3,-3.4l2.3,3.4l2.3,-3.4l2.3,3.4 M1889.4,642.1l2.3,-3.4l2.3,3.4l2.3,-3.4l2.3,3.4l2.3,-3.4l2.3,3.4l2.3,-3.4l2.3,3.4l2.3,-3.4l2.3,3.4l2.3,-3.4l2.3,3.4l2.3,-3.4 M1925.9,642.1l2.3,-3.4l2.3,3.4l2.3,-3.4l2.3,3.4l2.3,-3.4l2.3,3.4l2.3,-3.4l2.3,3.4l2.3,-3.4l2.3,3.4l2.3,-3.4l2.3,3.4l2.3,-3.4l2.3,3.4l2.3,-3.4l2.3,3.4l2.3,-3.4l2.3,3.4l2.3,-3.4l2.3,3.4l2.3,-3.4l2.3,3.4l2.3,-3.4l2.3,3.4l2.3,-3.4 M1989.7,642.1l2.3,-3.4l2.3,3.4l2.3,-3.4l2.3,3.4l2.3,-3.4l2.3,3.4l2.3,-3.4l2.3,3.4l2.3,-3.4l2.3,3.4l2.3,-3.4l2.3,3.4l2.3,-3.4l2.3,3.4l2.3,-3.4l2.3,3.4l2.3,-3.4l2.3,3.4l2.3,-3.4l2.3,3.4l2.3,-3.4l2.3,3.4 M1044.5,675.8l2.3,-3.4l2.3,3.4l2.3,-3.4l2.3,3.4l2.3,-3.4l2.3,3.4l2.3,-3.4l2.3,3.4l2.3,-3.4l2.3,3.4l2.3,-3.4l2.3,3.4l2.3,-3.4l2.3,3.4l2.3,-3.4l2.3,3.4l2.3,-3.4l2.3,3.4l2.3,-3.4l2.3,3.4l2.3,-3.4l2.3,3.4l2.3,-3.4 M1103.6,675.8l2.3,-3.4l2.3,3.4l2.3,-3.4l2.3,3.4l2.3,-3.4l2.3,3.4l2.3,-3.4l2.3,3.4l2.3,-3.4l2.3,3.4l2.3,-3.4l2.3,3.4l2.3,-3.4l2.3,3.4l2.3,-3.4l2.3,3.4l2.3,-3.4l2.3,3.4l2.3,-3.4l2.3,3.4l2.3,-3.4l2.3,3.4l2.3,-3.4l2.3,3.4l2.3,-3.4l2.3,3.4l2.3,-3.4l2.3,3.4l2.3,-3.4l2.3,3.4l2.3,-3.4l2.3,3.4l2.3,-3.4l2.3,3.4 M1188.3,675.8l2.3,-3.4l2.3,3.4l2.3,-3.4l2.3,3.4l2.3,-3.4l2.3,3.4l2.3,-3.4l2.3,3.4l2.3,-3.4l2.3,3.4l2.3,-3.4l2.3,3.4l2.3,-3.4l2.3,3.4l2.3,-3.4l2.3,3.4l2.3,-3.4l2.3,3.4l2.3,-3.4l2.3,3.4l2.3,-3.4l2.3,3.4l2.3,-3.4l2.3,3.4l2.3,-3.4l2.3,3.4l2.3,-3.4l2.3,3.4l2.3,-3.4l2.3,3.4 M1287.2,675.8l2.3,-3.4l2.3,3.4l2.3,-3.4l2.3,3.4l2.3,-3.4l2.3,3.4l2.3,-3.4l2.3,3.4l2.3,-3.4l2.3,3.4l2.3,-3.4l2.3,3.4l2.3,-3.4l2.3,3.4l2.3,-3.4l2.3,3.4l2.3,-3.4l2.3,3.4l2.3,-3.4l2.3,3.4l2.3,-3.4l2.3,3.4l2.3,-3.4l2.3,3.4l2.3,-3.4l2.3,3.4l2.3,-3.4l2.3,3.4 M1357.9,675.8l2.3,-3.4l2.3,3.4l2.3,-3.4l2.3,3.4l2.3,-3.4l2.3,3.4l2.3,-3.4l2.3,3.4l2.3,-3.4l2.3,3.4l2.3,-3.4l2.3,3.4l2.3,-3.4l2.3,3.4l2.3,-3.4l2.3,3.4l2.3,-3.4l2.3,3.4l2.3,-3.4l2.3,3.4l2.3,-3.4l2.3,3.4l2.3,-3.4l2.3,3.4l2.3,-3.4l2.3,3.4l2.3,-3.4l2.3,3.4l2.3,-3.4l2.3,3.4l2.3,-3.4l2.3,3.4l2.3,-3.4l2.3,3.4l2.3,-3.4 M1479.9,675.8l2.3,-3.4l2.3,3.4l2.3,-3.4l2.3,3.4l2.3,-3.4l2.3,3.4l2.3,-3.4l2.3,3.4l2.3,-3.4l2.3,3.4l2.3,-3.4l2.3,3.4l2.3,-3.4l2.3,3.4l2.3,-3.4l2.3,3.4l2.3,-3.4l2.3,3.4l2.3,-3.4l2.3,3.4l2.3,-3.4l2.3,3.4l2.3,-3.4l2.3,3.4l2.3,-3.4 M1568.6,675.8l2.3,-3.4l2.3,3.4l2.3,-3.4l2.3,3.4l2.3,-3.4l2.3,3.4l2.3,-3.4l2.3,3.4l2.3,-3.4l2.3,3.4l2.3,-3.4l2.3,3.4l2.3,-3.4l2.3,3.4l2.3,-3.4l2.3,3.4l2.3,-3.4l2.3,3.4l2.3,-3.4l2.3,3.4l2.3,-3.4l2.3,3.4l2.3,-3.4l2.3,3.4l2.3,-3.4l2.3,3.4l2.3,-3.4l2.3,3.4l2.3,-3.4l2.3,3.4l2.3,-3.4l2.3,3.4l2.3,-3.4l2.3,3.4l2.3,-3.4l2.3,3.4l2.3,-3.4l2.3,3.4l2.3,-3.4l2.3,3.4l2.3,-3.4l2.3,3.4l2.3,-3.4l2.3,3.4l2.3,-3.4l2.3,3.4l2.3,-3.4l2.3,3.4l2.3,-3.4 M1788.2,675.8l2.3,-3.4l2.3,3.4l2.3,-3.4l2.3,3.4l2.3,-3.4l2.3,3.4l2.3,-3.4l2.3,3.4l2.3,-3.4l2.3,3.4l2.3,-3.4l2.3,3.4l2.3,-3.4l2.3,3.4l2.3,-3.4l2.3,3.4l2.3,-3.4l2.3,3.4l2.3,-3.4l2.3,3.4l2.3,-3.4l2.3,3.4l2.3,-3.4l2.3,3.4l2.3,-3.4 M1851.1,675.8l2.3,-3.4l2.3,3.4l2.3,-3.4l2.3,3.4l2.3,-3.4l2.3,3.4l2.3,-3.4l2.3,3.4l2.3,-3.4l2.3,3.4l2.3,-3.4l2.3,3.4l2.3,-3.4l2.3,3.4l2.3,-3.4l2.3,3.4l2.3,-3.4l2.3,3.4l2.3,-3.4l2.3,3.4l2.3,-3.4l2.3,3.4l2.3,-3.4l2.3,3.4l2.3,-3.4l2.3,3.4l2.3,-3.4l2.3,3.4l2.3,-3.4l2.3,3.4l2.3,-3.4l2.3,3.4l2.3,-3.4l2.3,3.4l2.3,-3.4 M1988.5,675.8l2.3,-3.4l2.3,3.4l2.3,-3.4l2.3,3.4l2.3,-3.4l2.3,3.4l2.3,-3.4l2.3,3.4l2.3,-3.4l2.3,3.4l2.3,-3.4l2.3,3.4l2.3,-3.4l2.3,3.4l2.3,-3.4l2.3,3.4l2.3,-3.4l2.3,3.4l2.3,-3.4l2.3,3.4l2.3,-3.4l2.3,3.4l2.3,-3.4l2.3,3.4l2.3,-3.4l2.3,3.4 M1044.5,709.5l2.3,-3.4l2.3,3.4l2.3,-3.4l2.3,3.4l2.3,-3.4l2.3,3.4l2.3,-3.4l2.3,3.4l2.3,-3.4l2.3,3.4l2.3,-3.4l2.3,3.4l2.3,-3.4l2.3,3.4l2.3,-3.4l2.3,3.4l2.3,-3.4l2.3,3.4l2.3,-3.4l2.3,3.4l2.3,-3.4l2.3,3.4l2.3,-3.4l2.3,3.4l2.3,-3.4l2.3,3.4l2.3,-3.4l2.3,3.4l2.3,-3.4l2.3,3.4l2.3,-3.4l2.3,3.4l2.3,-3.4l2.3,3.4l2.3,-3.4l2.3,3.4l2.3,-3.4l2.3,3.4l2.3,-3.4l2.3,3.4l2.3,-3.4l2.3,3.4l2.3,-3.4l2.3,3.4l2.3,-3.4l2.3,3.4l2.3,-3.4l2.3,3.4l2.3,-3.4l2.3,3.4 M1266.8,709.5l2.3,-3.4l2.3,3.4l2.3,-3.4l2.3,3.4l2.3,-3.4l2.3,3.4l2.3,-3.4l2.3,3.4l2.3,-3.4l2.3,3.4l2.3,-3.4l2.3,3.4l2.3,-3.4l2.3,3.4l2.3,-3.4l2.3,3.4l2.3,-3.4l2.3,3.4l2.3,-3.4l2.3,3.4l2.3,-3.4l2.3,3.4l2.3,-3.4l2.3,3.4l2.3,-3.4 M1330.6,709.5l2.3,-3.4l2.3,3.4l2.3,-3.4l2.3,3.4l2.3,-3.4l2.3,3.4l2.3,-3.4l2.3,3.4l2.3,-3.4l2.3,3.4l2.3,-3.4l2.3,3.4l2.3,-3.4l2.3,3.4l2.3,-3.4l2.3,3.4l2.3,-3.4l2.3,3.4l2.3,-3.4l2.3,3.4l2.3,-3.4l2.3,3.4l2.3,-3.4l2.3,3.4l2.3,-3.4l2.3,3.4l2.3,-3.4l2.3,3.4l2.3,-3.4l2.3,3.4l2.3,-3.4l2.3,3.4l2.3,-3.4l2.3,3.4l2.3,-3.4l2.3,3.4 M1419.0,709.5l2.3,-3.4l2.3,3.4l2.3,-3.4l2.3,3.4l2.3,-3.4l2.3,3.4l2.3,-3.4l2.3,3.4l2.3,-3.4l2.3,3.4l2.3,-3.4l2.3,3.4l2.3,-3.4l2.3,3.4l2.3,-3.4l2.3,3.4l2.3,-3.4l2.3,3.4l2.3,-3.4l2.3,3.4l2.3,-3.4l2.3,3.4l2.3,-3.4l2.3,3.4l2.3,-3.4l2.3,3.4l2.3,-3.4l2.3,3.4l2.3,-3.4l2.3,3.4l2.3,-3.4l2.3,3.4l2.3,-3.4l2.3,3.4l2.3,-3.4l2.3,3.4l2.3,-3.4l2.3,3.4l2.3,-3.4l2.3,3.4l2.3,-3.4l2.3,3.4l2.3,-3.4l2.3,3.4l2.3,-3.4l2.3,3.4l2.3,-3.4 M1727.2,709.5l2.3,-3.4l2.3,3.4l2.3,-3.4l2.3,3.4l2.3,-3.4l2.3,3.4l2.3,-3.4l2.3,3.4l2.3,-3.4l2.3,3.4l2.3,-3.4l2.3,3.4l2.3,-3.4l2.3,3.4l2.3,-3.4l2.3,3.4l2.3,-3.4l2.3,3.4l2.3,-3.4l2.3,3.4l2.3,-3.4l2.3,3.4l2.3,-3.4l2.3,3.4l2.3,-3.4 M1792.2,709.5l2.3,-3.4l2.3,3.4l2.3,-3.4l2.3,3.4l2.3,-3.4l2.3,3.4l2.3,-3.4l2.3,3.4l2.3,-3.4l2.3,3.4l2.3,-3.4l2.3,3.4l2.3,-3.4l2.3,3.4l2.3,-3.4l2.3,3.4l2.3,-3.4l2.3,3.4l2.3,-3.4l2.3,3.4l2.3,-3.4l2.3,3.4l2.3,-3.4l2.3,3.4l2.3,-3.4l2.3,3.4l2.3,-3.4l2.3,3.4l2.3,-3.4l2.3,3.4l2.3,-3.4l2.3,3.4l2.3,-3.4l2.3,3.4l2.3,-3.4l2.3,3.4 M1880.6,709.5l2.3,-3.4l2.3,3.4l2.3,-3.4l2.3,3.4l2.3,-3.4l2.3,3.4l2.3,-3.4l2.3,3.4l2.3,-3.4l2.3,3.4l2.3,-3.4l2.3,3.4l2.3,-3.4l2.3,3.4l2.3,-3.4l2.3,3.4l2.3,-3.4l2.3,3.4l2.3,-3.4l2.3,3.4l2.3,-3.4l2.3,3.4l2.3,-3.4l2.3,3.4l2.3,-3.4l2.3,3.4l2.3,-3.4l2.3,3.4l2.3,-3.4l2.3,3.4l2.3,-3.4l2.3,3.4l2.3,-3.4l2.3,3.4l2.3,-3.4l2.3,3.4l2.3,-3.4l2.3,3.4l2.3,-3.4l2.3,3.4l2.3,-3.4 M2006.8,709.5l2.3,-3.4l2.3,3.4l2.3,-3.4l2.3,3.4l2.3,-3.4l2.3,3.4l2.3,-3.4l2.3,3.4l2.3,-3.4l2.3,3.4l2.3,-3.4l2.3,3.4l2.3,-3.4l2.3,3.4l2.3,-3.4l2.3,3.4l2.3,-3.4l2.3,3.4l2.3,-3.4l2.3,3.4l2.3,-3.4l2.3,3.4l2.3,-3.4l2.3,3.4l2.3,-3.4 M1044.5,743.3l2.3,-3.4l2.3,3.4l2.3,-3.4l2.3,3.4l2.3,-3.4l2.3,3.4l2.3,-3.4l2.3,3.4l2.3,-3.4l2.3,3.4l2.3,-3.4l2.3,3.4l2.3,-3.4l2.3,3.4l2.3,-3.4l2.3,3.4l2.3,-3.4l2.3,3.4l2.3,-3.4l2.3,3.4l2.3,-3.4l2.3,3.4l2.3,-3.4l2.3,3.4l2.3,-3.4l2.3,3.4l2.3,-3.4l2.3,3.4l2.3,-3.4l2.3,3.4l2.3,-3.4l2.3,3.4l2.3,-3.4l2.3,3.4l2.3,-3.4l2.3,3.4l2.3,-3.4l2.3,3.4l2.3,-3.4l2.3,3.4l2.3,-3.4l2.3,3.4l2.3,-3.4l2.3,3.4l2.3,-3.4l2.3,3.4l2.3,-3.4l2.3,3.4l2.3,-3.4l2.3,3.4 M1282.4,743.3l2.3,-3.4l2.3,3.4l2.3,-3.4l2.3,3.4l2.3,-3.4l2.3,3.4l2.3,-3.4l2.3,3.4l2.3,-3.4l2.3,3.4l2.3,-3.4l2.3,3.4l2.3,-3.4l2.3,3.4l2.3,-3.4l2.3,3.4l2.3,-3.4l2.3,3.4l2.3,-3.4l2.3,3.4l2.3,-3.4l2.3,3.4l2.3,-3.4l2.3,3.4l2.3,-3.4l2.3,3.4 M1347.7,743.3l2.3,-3.4l2.3,3.4l2.3,-3.4l2.3,3.4l2.3,-3.4l2.3,3.4l2.3,-3.4l2.3,3.4l2.3,-3.4l2.3,3.4l2.3,-3.4l2.3,3.4l2.3,-3.4l2.3,3.4l2.3,-3.4l2.3,3.4l2.3,-3.4l2.3,3.4l2.3,-3.4l2.3,3.4l2.3,-3.4l2.3,3.4l2.3,-3.4l2.3,3.4l2.3,-3.4l2.3,3.4l2.3,-3.4l2.3,3.4l2.3,-3.4l2.3,3.4l2.3,-3.4l2.3,3.4l2.3,-3.4l2.3,3.4l2.3,-3.4l2.3,3.4l2.3,-3.4l2.3,3.4l2.3,-3.4l2.3,3.4l2.3,-3.4l2.3,3.4l2.3,-3.4l2.3,3.4l2.3,-3.4l2.3,3.4l2.3,-3.4l2.3,3.4l2.3,-3.4l2.3,3.4l2.3,-3.4 M1559.4,743.3l2.3,-3.4l2.3,3.4l2.3,-3.4l2.3,3.4l2.3,-3.4l2.3,3.4l2.3,-3.4l2.3,3.4l2.3,-3.4l2.3,3.4l2.3,-3.4l2.3,3.4l2.3,-3.4l2.3,3.4l2.3,-3.4l2.3,3.4l2.3,-3.4l2.3,3.4l2.3,-3.4l2.3,3.4l2.3,-3.4l2.3,3.4l2.3,-3.4l2.3,3.4l2.3,-3.4 M1669.2,743.3l2.3,-3.4l2.3,3.4l2.3,-3.4l2.3,3.4l2.3,-3.4l2.3,3.4l2.3,-3.4l2.3,3.4l2.3,-3.4l2.3,3.4l2.3,-3.4l2.3,3.4l2.3,-3.4l2.3,3.4l2.3,-3.4l2.3,3.4l2.3,-3.4l2.3,3.4l2.3,-3.4l2.3,3.4l2.3,-3.4l2.3,3.4l2.3,-3.4l2.3,3.4l2.3,-3.4l2.3,3.4 M1828.7,743.3l2.3,-3.4l2.3,3.4l2.3,-3.4l2.3,3.4l2.3,-3.4l2.3,3.4l2.3,-3.4l2.3,3.4l2.3,-3.4l2.3,3.4l2.3,-3.4l2.3,3.4l2.3,-3.4l2.3,3.4l2.3,-3.4l2.3,3.4l2.3,-3.4l2.3,3.4l2.3,-3.4l2.3,3.4l2.3,-3.4l2.3,3.4l2.3,-3.4l2.3,3.4l2.3,-3.4l2.3,3.4l2.3,-3.4l2.3,3.4l2.3,-3.4l2.3,3.4l2.3,-3.4l2.3,3.4l2.3,-3.4l2.3,3.4 M1075.7,777.0l2.3,-3.4l2.3,3.4l2.3,-3.4l2.3,3.4l2.3,-3.4l2.3,3.4l2.3,-3.4l2.3,3.4l2.3,-3.4l2.3,3.4l2.3,-3.4l2.3,3.4l2.3,-3.4l2.3,3.4l2.3,-3.4l2.3,3.4l2.3,-3.4l2.3,3.4l2.3,-3.4l2.3,3.4l2.3,-3.4l2.3,3.4l2.3,-3.4l2.3,3.4l2.3,-3.4l2.3,3.4l2.3,-3.4l2.3,3.4l2.3,-3.4l2.3,3.4l2.3,-3.4l2.3,3.4l2.3,-3.4l2.3,3.4l2.3,-3.4l2.3,3.4 M1226.5,777.0l2.3,-3.4l2.3,3.4l2.3,-3.4l2.3,3.4l2.3,-3.4l2.3,3.4l2.3,-3.4l2.3,3.4l2.3,-3.4l2.3,3.4l2.3,-3.4l2.3,3.4l2.3,-3.4l2.3,3.4l2.3,-3.4l2.3,3.4l2.3,-3.4l2.3,3.4l2.3,-3.4l2.3,3.4l2.3,-3.4 M1282.4,777.0l2.3,-3.4l2.3,3.4l2.3,-3.4l2.3,3.4l2.3,-3.4l2.3,3.4l2.3,-3.4l2.3,3.4l2.3,-3.4l2.3,3.4l2.3,-3.4l2.3,3.4l2.3,-3.4l2.3,3.4l2.3,-3.4l2.3,3.4l2.3,-3.4l2.3,3.4l2.3,-3.4l2.3,3.4l2.3,-3.4l2.3,3.4l2.3,-3.4l2.3,3.4l2.3,-3.4l2.3,3.4l2.3,-3.4l2.3,3.4 M1352.6,777.0l2.3,-3.4l2.3,3.4l2.3,-3.4l2.3,3.4l2.3,-3.4l2.3,3.4l2.3,-3.4l2.3,3.4l2.3,-3.4l2.3,3.4l2.3,-3.4l2.3,3.4l2.3,-3.4l2.3,3.4l2.3,-3.4l2.3,3.4l2.3,-3.4l2.3,3.4l2.3,-3.4l2.3,3.4l2.3,-3.4l2.3,3.4l2.3,-3.4l2.3,3.4l2.3,-3.4 M1416.3,777.0l2.3,-3.4l2.3,3.4l2.3,-3.4l2.3,3.4l2.3,-3.4l2.3,3.4l2.3,-3.4l2.3,3.4l2.3,-3.4l2.3,3.4l2.3,-3.4l2.3,3.4l2.3,-3.4l2.3,3.4l2.3,-3.4l2.3,3.4l2.3,-3.4l2.3,3.4l2.3,-3.4l2.3,3.4l2.3,-3.4l2.3,3.4l2.3,-3.4l2.3,3.4l2.3,-3.4l2.3,3.4l2.3,-3.4l2.3,3.4l2.3,-3.4l2.3,3.4l2.3,-3.4l2.3,3.4l2.3,-3.4l2.3,3.4l2.3,-3.4l2.3,3.4l2.3,-3.4l2.3,3.4l2.3,-3.4l2.3,3.4l2.3,-3.4l2.3,3.4 M1577.5,777.0l2.3,-3.4l2.3,3.4l2.3,-3.4l2.3,3.4l2.3,-3.4l2.3,3.4l2.3,-3.4l2.3,3.4l2.3,-3.4l2.3,3.4l2.3,-3.4l2.3,3.4l2.3,-3.4l2.3,3.4l2.3,-3.4l2.3,3.4l2.3,-3.4l2.3,3.4l2.3,-3.4 M1626.9,777.0l2.3,-3.4l2.3,3.4l2.3,-3.4l2.3,3.4l2.3,-3.4l2.3,3.4l2.3,-3.4l2.3,3.4l2.3,-3.4l2.3,3.4l2.3,-3.4l2.3,3.4l2.3,-3.4l2.3,3.4l2.3,-3.4l2.3,3.4l2.3,-3.4l2.3,3.4l2.3,-3.4l2.3,3.4l2.3,-3.4l2.3,3.4 M1684.1,777.0l2.3,-3.4l2.3,3.4l2.3,-3.4l2.3,3.4l2.3,-3.4l2.3,3.4l2.3,-3.4l2.3,3.4l2.3,-3.4l2.3,3.4l2.3,-3.4l2.3,3.4l2.3,-3.4l2.3,3.4l2.3,-3.4l2.3,3.4l2.3,-3.4l2.3,3.4l2.3,-3.4l2.3,3.4l2.3,-3.4l2.3,3.4l2.3,-3.4l2.3,3.4l2.3,-3.4l2.3,3.4l2.3,-3.4l2.3,3.4l2.3,-3.4l2.3,3.4l2.3,-3.4l2.3,3.4l2.3,-3.4 M1095.4,882.0l2.3,-3.4l2.3,3.4l2.3,-3.4l2.3,3.4l2.3,-3.4l2.3,3.4l2.3,-3.4l2.3,3.4l2.3,-3.4l2.3,3.4l2.3,-3.4l2.3,3.4l2.3,-3.4l2.3,3.4l2.3,-3.4l2.3,3.4l2.3,-3.4l2.3,3.4l2.3,-3.4l2.3,3.4l2.3,-3.4l2.3,3.4l2.3,-3.4l2.3,3.4l2.3,-3.4l2.3,3.4l2.3,-3.4l2.3,3.4l2.3,-3.4l2.3,3.4l2.3,-3.4 M1198.4,882.0l2.3,-3.4l2.3,3.4l2.3,-3.4l2.3,3.4l2.3,-3.4l2.3,3.4l2.3,-3.4l2.3,3.4l2.3,-3.4l2.3,3.4l2.3,-3.4l2.3,3.4l2.3,-3.4l2.3,3.4l2.3,-3.4l2.3,3.4l2.3,-3.4l2.3,3.4l2.3,-3.4l2.3,3.4l2.3,-3.4l2.3,3.4l2.3,-3.4l2.3,3.4l2.3,-3.4l2.3,3.4l2.3,-3.4l2.3,3.4 M1268.8,882.0l2.3,-3.4l2.3,3.4l2.3,-3.4l2.3,3.4l2.3,-3.4l2.3,3.4l2.3,-3.4l2.3,3.4l2.3,-3.4l2.3,3.4l2.3,-3.4l2.3,3.4l2.3,-3.4l2.3,3.4l2.3,-3.4l2.3,3.4l2.3,-3.4l2.3,3.4l2.3,-3.4l2.3,3.4l2.3,-3.4l2.3,3.4l2.3,-3.4l2.3,3.4l2.3,-3.4l2.3,3.4l2.3,-3.4l2.3,3.4l2.3,-3.4l2.3,3.4l2.3,-3.4l2.3,3.4 M1349.7,882.0l2.3,-3.4l2.3,3.4l2.3,-3.4l2.3,3.4l2.3,-3.4l2.3,3.4l2.3,-3.4l2.3,3.4l2.3,-3.4l2.3,3.4l2.3,-3.4l2.3,3.4l2.3,-3.4l2.3,3.4l2.3,-3.4l2.3,3.4l2.3,-3.4l2.3,3.4l2.3,-3.4l2.3,3.4l2.3,-3.4l2.3,3.4l2.3,-3.4l2.3,3.4l2.3,-3.4l2.3,3.4l2.3,-3.4l2.3,3.4l2.3,-3.4l2.3,3.4l2.3,-3.4l2.3,3.4l2.3,-3.4l2.3,3.4l2.3,-3.4l2.3,3.4l2.3,-3.4l2.3,3.4 M1443.6,882.0l2.3,-3.4l2.3,3.4l2.3,-3.4l2.3,3.4l2.3,-3.4l2.3,3.4l2.3,-3.4l2.3,3.4l2.3,-3.4l2.3,3.4l2.3,-3.4l2.3,3.4l2.3,-3.4l2.3,3.4l2.3,-3.4l2.3,3.4l2.3,-3.4l2.3,3.4l2.3,-3.4l2.3,3.4 M1541.4,882.0l2.3,-3.4l2.3,3.4l2.3,-3.4l2.3,3.4l2.3,-3.4l2.3,3.4l2.3,-3.4l2.3,3.4l2.3,-3.4l2.3,3.4l2.3,-3.4l2.3,3.4l2.3,-3.4l2.3,3.4l2.3,-3.4l2.3,3.4l2.3,-3.4l2.3,3.4l2.3,-3.4l2.3,3.4l2.3,-3.4l2.3,3.4l2.3,-3.4l2.3,3.4l2.3,-3.4l2.3,3.4l2.3,-3.4l2.3,3.4l2.3,-3.4l2.3,3.4l2.3,-3.4l2.3,3.4l2.3,-3.4l2.3,3.4l2.3,-3.4 M1628.8,882.0l2.3,-3.4l2.3,3.4l2.3,-3.4l2.3,3.4l2.3,-3.4l2.3,3.4l2.3,-3.4l2.3,3.4l2.3,-3.4l2.3,3.4l2.3,-3.4l2.3,3.4l2.3,-3.4l2.3,3.4l2.3,-3.4l2.3,3.4l2.3,-3.4l2.3,3.4l2.3,-3.4l2.3,3.4l2.3,-3.4l2.3,3.4l2.3,-3.4l2.3,3.4l2.3,-3.4l2.3,3.4l2.3,-3.4l2.3,3.4 M1764.4,882.0l2.3,-3.4l2.3,3.4l2.3,-3.4l2.3,3.4l2.3,-3.4l2.3,3.4l2.3,-3.4l2.3,3.4l2.3,-3.4l2.3,3.4l2.3,-3.4l2.3,3.4l2.3,-3.4l2.3,3.4l2.3,-3.4l2.3,3.4l2.3,-3.4l2.3,3.4l2.3,-3.4 M1910.4,882.0l2.3,-3.4l2.3,3.4l2.3,-3.4l2.3,3.4l2.3,-3.4l2.3,3.4l2.3,-3.4l2.3,3.4l2.3,-3.4l2.3,3.4l2.3,-3.4l2.3,3.4l2.3,-3.4l2.3,3.4l2.3,-3.4l2.3,3.4l2.3,-3.4l2.3,3.4l2.3,-3.4l2.3,3.4l2.3,-3.4l2.3,3.4l2.3,-3.4l2.3,3.4l2.3,-3.4l2.3,3.4l2.3,-3.4l2.3,3.4l2.3,-3.4l2.3,3.4l2.3,-3.4l2.3,3.4l2.3,-3.4l2.3,3.4l2.3,-3.4l2.3,3.4l2.3,-3.4l2.3,3.4l2.3,-3.4 M2006.9,882.0l2.3,-3.4l2.3,3.4l2.3,-3.4l2.3,3.4l2.3,-3.4l2.3,3.4l2.3,-3.4l2.3,3.4l2.3,-3.4l2.3,3.4l2.3,-3.4l2.3,3.4l2.3,-3.4l2.3,3.4l2.3,-3.4l2.3,3.4l2.3,-3.4l2.3,3.4l2.3,-3.4l2.3,3.4l2.3,-3.4l2.3,3.4l2.3,-3.4l2.3,3.4 M1099.6,915.7l2.3,-3.4l2.3,3.4l2.3,-3.4l2.3,3.4l2.3,-3.4l2.3,3.4l2.3,-3.4l2.3,3.4l2.3,-3.4l2.3,3.4l2.3,-3.4l2.3,3.4l2.3,-3.4l2.3,3.4l2.3,-3.4l2.3,3.4l2.3,-3.4l2.3,3.4l2.3,-3.4l2.3,3.4l2.3,-3.4l2.3,3.4l2.3,-3.4l2.3,3.4l2.3,-3.4l2.3,3.4l2.3,-3.4l2.3,3.4l2.3,-3.4l2.3,3.4l2.3,-3.4l2.3,3.4l2.3,-3.4l2.3,3.4l2.3,-3.4l2.3,3.4l2.3,-3.4l2.3,3.4l2.3,-3.4l2.3,3.4l2.3,-3.4 M1199.5,915.7l2.3,-3.4l2.3,3.4l2.3,-3.4l2.3,3.4l2.3,-3.4l2.3,3.4l2.3,-3.4l2.3,3.4l2.3,-3.4l2.3,3.4l2.3,-3.4l2.3,3.4l2.3,-3.4l2.3,3.4l2.3,-3.4l2.3,3.4l2.3,-3.4l2.3,3.4l2.3,-3.4l2.3,3.4l2.3,-3.4l2.3,3.4l2.3,-3.4 M1337.4,915.7l2.3,-3.4l2.3,3.4l2.3,-3.4l2.3,3.4l2.3,-3.4l2.3,3.4l2.3,-3.4l2.3,3.4l2.3,-3.4l2.3,3.4l2.3,-3.4l2.3,3.4l2.3,-3.4l2.3,3.4l2.3,-3.4l2.3,3.4l2.3,-3.4l2.3,3.4l2.3,-3.4l2.3,3.4 M1434.6,915.7l2.3,-3.4l2.3,3.4l2.3,-3.4l2.3,3.4l2.3,-3.4l2.3,3.4l2.3,-3.4l2.3,3.4l2.3,-3.4l2.3,3.4l2.3,-3.4l2.3,3.4l2.3,-3.4l2.3,3.4l2.3,-3.4l2.3,3.4l2.3,-3.4l2.3,3.4l2.3,-3.4l2.3,3.4l2.3,-3.4l2.3,3.4l2.3,-3.4l2.3,3.4l2.3,-3.4l2.3,3.4l2.3,-3.4l2.3,3.4l2.3,-3.4l2.3,3.4l2.3,-3.4l2.3,3.4l2.3,-3.4l2.3,3.4l2.3,-3.4l2.3,3.4l2.3,-3.4 M1583.0,915.7l2.3,-3.4l2.3,3.4l2.3,-3.4l2.3,3.4l2.3,-3.4l2.3,3.4l2.3,-3.4l2.3,3.4l2.3,-3.4l2.3,3.4l2.3,-3.4l2.3,3.4l2.3,-3.4l2.3,3.4l2.3,-3.4l2.3,3.4l2.3,-3.4l2.3,3.4l2.3,-3.4l2.3,3.4l2.3,-3.4l2.3,3.4 M1639.4,915.7l2.3,-3.4l2.3,3.4l2.3,-3.4l2.3,3.4l2.3,-3.4l2.3,3.4l2.3,-3.4l2.3,3.4l2.3,-3.4l2.3,3.4l2.3,-3.4l2.3,3.4l2.3,-3.4l2.3,3.4l2.3,-3.4l2.3,3.4l2.3,-3.4l2.3,3.4l2.3,-3.4l2.3,3.4l2.3,-3.4l2.3,3.4l2.3,-3.4l2.3,3.4l2.3,-3.4l2.3,3.4l2.3,-3.4l2.3,3.4l2.3,-3.4l2.3,3.4l2.3,-3.4l2.3,3.4l2.3,-3.4l2.3,3.4l2.3,-3.4l2.3,3.4l2.3,-3.4 M1731.4,915.7l2.3,-3.4l2.3,3.4l2.3,-3.4l2.3,3.4l2.3,-3.4l2.3,3.4l2.3,-3.4l2.3,3.4l2.3,-3.4l2.3,3.4l2.3,-3.4l2.3,3.4l2.3,-3.4l2.3,3.4l2.3,-3.4l2.3,3.4l2.3,-3.4l2.3,3.4l2.3,-3.4l2.3,3.4l2.3,-3.4l2.3,3.4l2.3,-3.4l2.3,3.4l2.3,-3.4l2.3,3.4l2.3,-3.4l2.3,3.4l2.3,-3.4l2.3,3.4l2.3,-3.4l2.3,3.4l2.3,-3.4l2.3,3.4l2.3,-3.4l2.3,3.4l2.3,-3.4l2.3,3.4l2.3,-3.4l2.3,3.4l2.3,-3.4l2.3,3.4l2.3,-3.4l2.3,3.4l2.3,-3.4l2.3,3.4l2.3,-3.4 M1847.0,915.7l2.3,-3.4l2.3,3.4l2.3,-3.4l2.3,3.4l2.3,-3.4l2.3,3.4l2.3,-3.4l2.3,3.4l2.3,-3.4l2.3,3.4l2.3,-3.4l2.3,3.4l2.3,-3.4l2.3,3.4l2.3,-3.4l2.3,3.4l2.3,-3.4l2.3,3.4l2.3,-3.4l2.3,3.4l2.3,-3.4l2.3,3.4l2.3,-3.4l2.3,3.4l2.3,-3.4l2.3,3.4l2.3,-3.4l2.3,3.4l2.3,-3.4l2.3,3.4l2.3,-3.4l2.3,3.4l2.3,-3.4l2.3,3.4l2.3,-3.4l2.3,3.4 M1936.3,915.7l2.3,-3.4l2.3,3.4l2.3,-3.4l2.3,3.4l2.3,-3.4l2.3,3.4l2.3,-3.4l2.3,3.4l2.3,-3.4l2.3,3.4l2.3,-3.4l2.3,3.4l2.3,-3.4l2.3,3.4l2.3,-3.4l2.3,3.4l2.3,-3.4l2.3,3.4l2.3,-3.4l2.3,3.4l2.3,-3.4l2.3,3.4l2.3,-3.4l2.3,3.4l2.3,-3.4l2.3,3.4l2.3,-3.4l2.3,3.4l2.3,-3.4l2.3,3.4l2.3,-3.4l2.3,3.4l2.3,-3.4 M1044.5,949.4l2.3,-3.4l2.3,3.4l2.3,-3.4l2.3,3.4l2.3,-3.4l2.3,3.4l2.3,-3.4l2.3,3.4l2.3,-3.4l2.3,3.4l2.3,-3.4l2.3,3.4l2.3,-3.4l2.3,3.4l2.3,-3.4l2.3,3.4l2.3,-3.4l2.3,3.4l2.3,-3.4l2.3,3.4l2.3,-3.4l2.3,3.4l2.3,-3.4l2.3,3.4l2.3,-3.4l2.3,3.4l2.3,-3.4l2.3,3.4l2.3,-3.4l2.3,3.4l2.3,-3.4l2.3,3.4l2.3,-3.4l2.3,3.4l2.3,-3.4l2.3,3.4 M1134.4,949.4l2.3,-3.4l2.3,3.4l2.3,-3.4l2.3,3.4l2.3,-3.4l2.3,3.4l2.3,-3.4l2.3,3.4l2.3,-3.4l2.3,3.4l2.3,-3.4l2.3,3.4l2.3,-3.4l2.3,3.4l2.3,-3.4l2.3,3.4l2.3,-3.4l2.3,3.4l2.3,-3.4l2.3,3.4l2.3,-3.4l2.3,3.4l2.3,-3.4l2.3,3.4l2.3,-3.4l2.3,3.4l2.3,-3.4l2.3,3.4l2.3,-3.4l2.3,3.4l2.3,-3.4 M1241.3,949.4l2.3,-3.4l2.3,3.4l2.3,-3.4l2.3,3.4l2.3,-3.4l2.3,3.4l2.3,-3.4l2.3,3.4l2.3,-3.4l2.3,3.4l2.3,-3.4l2.3,3.4l2.3,-3.4l2.3,3.4l2.3,-3.4l2.3,3.4l2.3,-3.4l2.3,3.4l2.3,-3.4l2.3,3.4l2.3,-3.4l2.3,3.4l2.3,-3.4 M1299.9,949.4l2.3,-3.4l2.3,3.4l2.3,-3.4l2.3,3.4l2.3,-3.4l2.3,3.4l2.3,-3.4l2.3,3.4l2.3,-3.4l2.3,3.4l2.3,-3.4l2.3,3.4l2.3,-3.4l2.3,3.4l2.3,-3.4l2.3,3.4l2.3,-3.4l2.3,3.4l2.3,-3.4l2.3,3.4l2.3,-3.4l2.3,3.4l2.3,-3.4l2.3,3.4l2.3,-3.4l2.3,3.4l2.3,-3.4l2.3,3.4l2.3,-3.4l2.3,3.4 M1431.6,949.4l2.3,-3.4l2.3,3.4l2.3,-3.4l2.3,3.4l2.3,-3.4l2.3,3.4l2.3,-3.4l2.3,3.4l2.3,-3.4l2.3,3.4l2.3,-3.4l2.3,3.4l2.3,-3.4l2.3,3.4l2.3,-3.4l2.3,3.4l2.3,-3.4l2.3,3.4l2.3,-3.4l2.3,3.4l2.3,-3.4l2.3,3.4l2.3,-3.4l2.3,3.4 M1492.8,949.4l2.3,-3.4l2.3,3.4l2.3,-3.4l2.3,3.4l2.3,-3.4l2.3,3.4l2.3,-3.4l2.3,3.4l2.3,-3.4l2.3,3.4l2.3,-3.4l2.3,3.4l2.3,-3.4l2.3,3.4l2.3,-3.4l2.3,3.4l2.3,-3.4l2.3,3.4l2.3,-3.4l2.3,3.4l2.3,-3.4l2.3,3.4l2.3,-3.4l2.3,3.4l2.3,-3.4l2.3,3.4l2.3,-3.4l2.3,3.4l2.3,-3.4l2.3,3.4l2.3,-3.4l2.3,3.4l2.3,-3.4l2.3,3.4l2.3,-3.4l2.3,3.4l2.3,-3.4l2.3,3.4l2.3,-3.4l2.3,3.4l2.3,-3.4l2.3,3.4l2.3,-3.4l2.3,3.4l2.3,-3.4l2.3,3.4l2.3,-3.4l2.3,3.4l2.3,-3.4l2.3,3.4l2.3,-3.4l2.3,3.4l2.3,-3.4l2.3,3.4l2.3,-3.4l2.3,3.4l2.3,-3.4l2.3,3.4l2.3,-3.4l2.3,3.4l2.3,-3.4 M1719.6,949.4l2.3,-3.4l2.3,3.4l2.3,-3.4l2.3,3.4l2.3,-3.4l2.3,3.4l2.3,-3.4l2.3,3.4l2.3,-3.4l2.3,3.4l2.3,-3.4l2.3,3.4l2.3,-3.4l2.3,3.4l2.3,-3.4l2.3,3.4l2.3,-3.4l2.3,3.4l2.3,-3.4l2.3,3.4l2.3,-3.4l2.3,3.4l2.3,-3.4l2.3,3.4l2.3,-3.4l2.3,3.4l2.3,-3.4l2.3,3.4l2.3,-3.4l2.3,3.4 M1795.2,949.4l2.3,-3.4l2.3,3.4l2.3,-3.4l2.3,3.4l2.3,-3.4l2.3,3.4l2.3,-3.4l2.3,3.4l2.3,-3.4l2.3,3.4l2.3,-3.4l2.3,3.4l2.3,-3.4l2.3,3.4l2.3,-3.4l2.3,3.4l2.3,-3.4l2.3,3.4l2.3,-3.4l2.3,3.4l2.3,-3.4l2.3,3.4l2.3,-3.4l2.3,3.4l2.3,-3.4l2.3,3.4l2.3,-3.4l2.3,3.4l2.3,-3.4 M1869.6,949.4l2.3,-3.4l2.3,3.4l2.3,-3.4l2.3,3.4l2.3,-3.4l2.3,3.4l2.3,-3.4l2.3,3.4l2.3,-3.4l2.3,3.4l2.3,-3.4l2.3,3.4l2.3,-3.4l2.3,3.4l2.3,-3.4l2.3,3.4l2.3,-3.4l2.3,3.4l2.3,-3.4l2.3,3.4l2.3,-3.4l2.3,3.4l2.3,-3.4l2.3,3.4l2.3,-3.4l2.3,3.4l2.3,-3.4l2.3,3.4l2.3,-3.4l2.3,3.4l2.3,-3.4l2.3,3.4l2.3,-3.4l2.3,3.4 M1954.3,949.4l2.3,-3.4l2.3,3.4l2.3,-3.4l2.3,3.4l2.3,-3.4l2.3,3.4l2.3,-3.4l2.3,3.4l2.3,-3.4l2.3,3.4l2.3,-3.4l2.3,3.4l2.3,-3.4l2.3,3.4l2.3,-3.4l2.3,3.4l2.3,-3.4l2.3,3.4l2.3,-3.4l2.3,3.4l2.3,-3.4l2.3,3.4l2.3,-3.4l2.3,3.4l2.3,-3.4l2.3,3.4l2.3,-3.4l2.3,3.4l2.3,-3.4l2.3,3.4l2.3,-3.4l2.3,3.4l2.3,-3.4l2.3,3.4l2.3,-3.4l2.3,3.4l2.3,-3.4l2.3,3.4l2.3,-3.4 M1044.5,983.1l2.3,-3.4l2.3,3.4l2.3,-3.4l2.3,3.4l2.3,-3.4l2.3,3.4l2.3,-3.4l2.3,3.4l2.3,-3.4l2.3,3.4l2.3,-3.4l2.3,3.4l2.3,-3.4l2.3,3.4l2.3,-3.4l2.3,3.4l2.3,-3.4l2.3,3.4l2.3,-3.4l2.3,3.4l2.3,-3.4l2.3,3.4l2.3,-3.4l2.3,3.4l2.3,-3.4l2.3,3.4l2.3,-3.4l2.3,3.4l2.3,-3.4l2.3,3.4l2.3,-3.4l2.3,3.4l2.3,-3.4l2.3,3.4l2.3,-3.4l2.3,3.4l2.3,-3.4l2.3,3.4l2.3,-3.4l2.3,3.4l2.3,-3.4l2.3,3.4l2.3,-3.4l2.3,3.4l2.3,-3.4l2.3,3.4l2.3,-3.4l2.3,3.4l2.3,-3.4l2.3,3.4 M1173.7,983.1l2.3,-3.4l2.3,3.4l2.3,-3.4l2.3,3.4l2.3,-3.4l2.3,3.4l2.3,-3.4l2.3,3.4l2.3,-3.4l2.3,3.4l2.3,-3.4l2.3,3.4l2.3,-3.4l2.3,3.4l2.3,-3.4l2.3,3.4l2.3,-3.4l2.3,3.4l2.3,-3.4l2.3,3.4l2.3,-3.4l2.3,3.4l2.3,-3.4l2.3,3.4l2.3,-3.4l2.3,3.4l2.3,-3.4l2.3,3.4l2.3,-3.4l2.3,3.4l2.3,-3.4l2.3,3.4 M1253.3,983.1l2.3,-3.4l2.3,3.4l2.3,-3.4l2.3,3.4l2.3,-3.4l2.3,3.4l2.3,-3.4l2.3,3.4l2.3,-3.4l2.3,3.4l2.3,-3.4l2.3,3.4l2.3,-3.4l2.3,3.4l2.3,-3.4l2.3,3.4l2.3,-3.4l2.3,3.4l2.3,-3.4l2.3,3.4l2.3,-3.4l2.3,3.4l2.3,-3.4l2.3,3.4l2.3,-3.4l2.3,3.4l2.3,-3.4l2.3,3.4l2.3,-3.4l2.3,3.4l2.3,-3.4l2.3,3.4l2.3,-3.4l2.3,3.4 M1338.2,983.1l2.3,-3.4l2.3,3.4l2.3,-3.4l2.3,3.4l2.3,-3.4l2.3,3.4l2.3,-3.4l2.3,3.4l2.3,-3.4l2.3,3.4l2.3,-3.4l2.3,3.4l2.3,-3.4l2.3,3.4l2.3,-3.4l2.3,3.4l2.3,-3.4l2.3,3.4l2.3,-3.4l2.3,3.4l2.3,-3.4l2.3,3.4l2.3,-3.4l2.3,3.4l2.3,-3.4l2.3,3.4l2.3,-3.4l2.3,3.4l2.3,-3.4l2.3,3.4l2.3,-3.4l2.3,3.4l2.3,-3.4l2.3,3.4l2.3,-3.4l2.3,3.4l2.3,-3.4l2.3,3.4l2.3,-3.4 M1433.5,983.1l2.3,-3.4l2.3,3.4l2.3,-3.4l2.3,3.4l2.3,-3.4l2.3,3.4l2.3,-3.4l2.3,3.4l2.3,-3.4l2.3,3.4l2.3,-3.4l2.3,3.4l2.3,-3.4l2.3,3.4l2.3,-3.4l2.3,3.4l2.3,-3.4l2.3,3.4l2.3,-3.4l2.3,3.4l2.3,-3.4l2.3,3.4l2.3,-3.4l2.3,3.4l2.3,-3.4l2.3,3.4l2.3,-3.4l2.3,3.4l2.3,-3.4l2.3,3.4l2.3,-3.4l2.3,3.4l2.3,-3.4l2.3,3.4l2.3,-3.4l2.3,3.4l2.3,-3.4l2.3,3.4l2.3,-3.4l2.3,3.4l2.3,-3.4l2.3,3.4l2.3,-3.4l2.3,3.4l2.3,-3.4l2.3,3.4l2.3,-3.4l2.3,3.4l2.3,-3.4l2.3,3.4 M1597.9,983.1l2.3,-3.4l2.3,3.4l2.3,-3.4l2.3,3.4l2.3,-3.4l2.3,3.4l2.3,-3.4l2.3,3.4l2.3,-3.4l2.3,3.4l2.3,-3.4l2.3,3.4l2.3,-3.4l2.3,3.4l2.3,-3.4l2.3,3.4l2.3,-3.4l2.3,3.4l2.3,-3.4 M1647.5,983.1l2.3,-3.4l2.3,3.4l2.3,-3.4l2.3,3.4l2.3,-3.4l2.3,3.4l2.3,-3.4l2.3,3.4l2.3,-3.4l2.3,3.4l2.3,-3.4l2.3,3.4l2.3,-3.4l2.3,3.4l2.3,-3.4l2.3,3.4l2.3,-3.4l2.3,3.4l2.3,-3.4l2.3,3.4l2.3,-3.4l2.3,3.4l2.3,-3.4l2.3,3.4l2.3,-3.4l2.3,3.4l2.3,-3.4l2.3,3.4l2.3,-3.4l2.3,3.4l2.3,-3.4l2.3,3.4l2.3,-3.4l2.3,3.4l2.3,-3.4l2.3,3.4 M1736.3,983.1l2.3,-3.4l2.3,3.4l2.3,-3.4l2.3,3.4l2.3,-3.4l2.3,3.4l2.3,-3.4l2.3,3.4l2.3,-3.4l2.3,3.4l2.3,-3.4l2.3,3.4l2.3,-3.4l2.3,3.4l2.3,-3.4l2.3,3.4l2.3,-3.4l2.3,3.4l2.3,-3.4l2.3,3.4l2.3,-3.4l2.3,3.4l2.3,-3.4l2.3,3.4l2.3,-3.4l2.3,3.4 M1808.1,983.1l2.3,-3.4l2.3,3.4l2.3,-3.4l2.3,3.4l2.3,-3.4l2.3,3.4l2.3,-3.4l2.3,3.4l2.3,-3.4l2.3,3.4l2.3,-3.4l2.3,3.4l2.3,-3.4l2.3,3.4l2.3,-3.4l2.3,3.4l2.3,-3.4l2.3,3.4l2.3,-3.4l2.3,3.4l2.3,-3.4l2.3,3.4l2.3,-3.4l2.3,3.4l2.3,-3.4l2.3,3.4l2.3,-3.4l2.3,3.4l2.3,-3.4l2.3,3.4l2.3,-3.4l2.3,3.4l2.3,-3.4l2.3,3.4l2.3,-3.4l2.3,3.4l2.3,-3.4l2.3,3.4l2.3,-3.4l2.3,3.4 M1907.3,983.1l2.3,-3.4l2.3,3.4l2.3,-3.4l2.3,3.4l2.3,-3.4l2.3,3.4l2.3,-3.4l2.3,3.4l2.3,-3.4l2.3,3.4l2.3,-3.4l2.3,3.4l2.3,-3.4l2.3,3.4l2.3,-3.4l2.3,3.4l2.3,-3.4l2.3,3.4l2.3,-3.4l2.3,3.4l2.3,-3.4l2.3,3.4l2.3,-3.4l2.3,3.4l2.3,-3.4l2.3,3.4l2.3,-3.4 M1976.5,983.1l2.3,-3.4l2.3,3.4l2.3,-3.4l2.3,3.4l2.3,-3.4l2.3,3.4l2.3,-3.4l2.3,3.4l2.3,-3.4l2.3,3.4l2.3,-3.4l2.3,3.4l2.3,-3.4l2.3,3.4l2.3,-3.4l2.3,3.4l2.3,-3.4l2.3,3.4l2.3,-3.4l2.3,3.4l2.3,-3.4l2.3,3.4l2.3,-3.4l2.3,3.4l2.3,-3.4l2.3,3.4l2.3,-3.4l2.3,3.4l2.3,-3.4l2.3,3.4l2.3,-3.4l2.3,3.4l2.3,-3.4l2.3,3.4l2.3,-3.4l2.3,3.4 M1044.5,1016.9l2.3,-3.4l2.3,3.4l2.3,-3.4l2.3,3.4l2.3,-3.4l2.3,3.4l2.3,-3.4l2.3,3.4l2.3,-3.4l2.3,3.4l2.3,-3.4l2.3,3.4l2.3,-3.4l2.3,3.4l2.3,-3.4l2.3,3.4l2.3,-3.4l2.3,3.4l2.3,-3.4l2.3,3.4l2.3,-3.4 M1098.3,1016.9l2.3,-3.4l2.3,3.4l2.3,-3.4l2.3,3.4l2.3,-3.4l2.3,3.4l2.3,-3.4l2.3,3.4l2.3,-3.4l2.3,3.4l2.3,-3.4l2.3,3.4l2.3,-3.4l2.3,3.4l2.3,-3.4l2.3,3.4l2.3,-3.4l2.3,3.4l2.3,-3.4l2.3,3.4l2.3,-3.4l2.3,3.4l2.3,-3.4l2.3,3.4l2.3,-3.4l2.3,3.4l2.3,-3.4l2.3,3.4l2.3,-3.4 M1170.5,1016.9l2.3,-3.4l2.3,3.4l2.3,-3.4l2.3,3.4l2.3,-3.4l2.3,3.4l2.3,-3.4l2.3,3.4l2.3,-3.4l2.3,3.4l2.3,-3.4l2.3,3.4l2.3,-3.4l2.3,3.4l2.3,-3.4l2.3,3.4l2.3,-3.4l2.3,3.4l2.3,-3.4l2.3,3.4l2.3,-3.4l2.3,3.4l2.3,-3.4l2.3,3.4l2.3,-3.4l2.3,3.4l2.3,-3.4l2.3,3.4l2.3,-3.4l2.3,3.4l2.3,-3.4 M1247.8,1016.9l2.3,-3.4l2.3,3.4l2.3,-3.4l2.3,3.4l2.3,-3.4l2.3,3.4l2.3,-3.4l2.3,3.4l2.3,-3.4l2.3,3.4l2.3,-3.4l2.3,3.4l2.3,-3.4l2.3,3.4l2.3,-3.4l2.3,3.4l2.3,-3.4l2.3,3.4l2.3,-3.4l2.3,3.4l2.3,-3.4l2.3,3.4 M1304.2,1016.9l2.3,-3.4l2.3,3.4l2.3,-3.4l2.3,3.4l2.3,-3.4l2.3,3.4l2.3,-3.4l2.3,3.4l2.3,-3.4l2.3,3.4l2.3,-3.4l2.3,3.4l2.3,-3.4l2.3,3.4l2.3,-3.4l2.3,3.4l2.3,-3.4 M1348.8,1016.9l2.3,-3.4l2.3,3.4l2.3,-3.4l2.3,3.4l2.3,-3.4l2.3,3.4l2.3,-3.4l2.3,3.4l2.3,-3.4l2.3,3.4l2.3,-3.4l2.3,3.4l2.3,-3.4l2.3,3.4l2.3,-3.4l2.3,3.4l2.3,-3.4l2.3,3.4l2.3,-3.4l2.3,3.4l2.3,-3.4l2.3,3.4l2.3,-3.4l2.3,3.4l2.3,-3.4l2.3,3.4l2.3,-3.4l2.3,3.4l2.3,-3.4l2.3,3.4l2.3,-3.4l2.3,3.4 M1637.2,1016.9l2.3,-3.4l2.3,3.4l2.3,-3.4l2.3,3.4l2.3,-3.4l2.3,3.4l2.3,-3.4l2.3,3.4l2.3,-3.4l2.3,3.4l2.3,-3.4l2.3,3.4l2.3,-3.4l2.3,3.4l2.3,-3.4l2.3,3.4l2.3,-3.4l2.3,3.4l2.3,-3.4l2.3,3.4l2.3,-3.4l2.3,3.4l2.3,-3.4l2.3,3.4l2.3,-3.4l2.3,3.4l2.3,-3.4l2.3,3.4l2.3,-3.4l2.3,3.4l2.3,-3.4l2.3,3.4l2.3,-3.4l2.3,3.4l2.3,-3.4l2.3,3.4l2.3,-3.4l2.3,3.4 M1788.0,1016.9l2.3,-3.4l2.3,3.4l2.3,-3.4l2.3,3.4l2.3,-3.4l2.3,3.4l2.3,-3.4l2.3,3.4l2.3,-3.4l2.3,3.4l2.3,-3.4l2.3,3.4l2.3,-3.4l2.3,3.4l2.3,-3.4l2.3,3.4l2.3,-3.4l2.3,3.4l2.3,-3.4l2.3,3.4l2.3,-3.4l2.3,3.4l2.3,-3.4l2.3,3.4l2.3,-3.4l2.3,3.4l2.3,-3.4l2.3,3.4l2.3,-3.4l2.3,3.4 M1864.1,1016.9l2.3,-3.4l2.3,3.4l2.3,-3.4l2.3,3.4l2.3,-3.4l2.3,3.4l2.3,-3.4l2.3,3.4l2.3,-3.4l2.3,3.4l2.3,-3.4l2.3,3.4l2.3,-3.4l2.3,3.4l2.3,-3.4l2.3,3.4l2.3,-3.4 M1908.7,1016.9l2.3,-3.4l2.3,3.4l2.3,-3.4l2.3,3.4l2.3,-3.4l2.3,3.4l2.3,-3.4l2.3,3.4l2.3,-3.4l2.3,3.4l2.3,-3.4l2.3,3.4l2.3,-3.4l2.3,3.4l2.3,-3.4l2.3,3.4l2.3,-3.4l2.3,3.4l2.3,-3.4l2.3,3.4l2.3,-3.4l2.3,3.4l2.3,-3.4l2.3,3.4l2.3,-3.4l2.3,3.4l2.3,-3.4l2.3,3.4l2.3,-3.4l2.3,3.4l2.3,-3.4l2.3,3.4l2.3,-3.4l2.3,3.4l2.3,-3.4l2.3,3.4l2.3,-3.4l2.3,3.4l2.3,-3.4l2.3,3.4l2.3,-3.4l2.3,3.4l2.3,-3.4l2.3,3.4l2.3,-3.4l2.3,3.4l2.3,-3.4l2.3,3.4l2.3,-3.4l2.3,3.4l2.3,-3.4l2.3,3.4l2.3,-3.4l2.3,3.4 M1044.5,1050.6l2.3,-3.4l2.3,3.4l2.3,-3.4l2.3,3.4l2.3,-3.4l2.3,3.4l2.3,-3.4l2.3,3.4l2.3,-3.4l2.3,3.4l2.3,-3.4l2.3,3.4l2.3,-3.4l2.3,3.4l2.3,-3.4l2.3,3.4l2.3,-3.4l2.3,3.4l2.3,-3.4l2.3,3.4l2.3,-3.4l2.3,3.4l2.3,-3.4l2.3,3.4 M1106.6,1050.6l2.3,-3.4l2.3,3.4l2.3,-3.4l2.3,3.4l2.3,-3.4l2.3,3.4l2.3,-3.4l2.3,3.4l2.3,-3.4l2.3,3.4l2.3,-3.4l2.3,3.4l2.3,-3.4l2.3,3.4l2.3,-3.4l2.3,3.4l2.3,-3.4l2.3,3.4l2.3,-3.4 M1156.9,1050.6l2.3,-3.4l2.3,3.4l2.3,-3.4l2.3,3.4l2.3,-3.4l2.3,3.4l2.3,-3.4l2.3,3.4l2.3,-3.4l2.3,3.4l2.3,-3.4l2.3,3.4l2.3,-3.4l2.3,3.4l2.3,-3.4l2.3,3.4l2.3,-3.4l2.3,3.4l2.3,-3.4l2.3,3.4l2.3,-3.4l2.3,3.4 M1215.1,1050.6l2.3,-3.4l2.3,3.4l2.3,-3.4l2.3,3.4l2.3,-3.4l2.3,3.4l2.3,-3.4l2.3,3.4l2.3,-3.4l2.3,3.4l2.3,-3.4l2.3,3.4l2.3,-3.4l2.3,3.4l2.3,-3.4l2.3,3.4l2.3,-3.4l2.3,3.4l2.3,-3.4l2.3,3.4l2.3,-3.4l2.3,3.4l2.3,-3.4l2.3,3.4l2.3,-3.4l2.3,3.4l2.3,-3.4l2.3,3.4l2.3,-3.4l2.3,3.4l2.3,-3.4l2.3,3.4l2.3,-3.4 M1298.4,1050.6l2.3,-3.4l2.3,3.4l2.3,-3.4l2.3,3.4l2.3,-3.4l2.3,3.4l2.3,-3.4l2.3,3.4l2.3,-3.4l2.3,3.4l2.3,-3.4l2.3,3.4l2.3,-3.4l2.3,3.4l2.3,-3.4l2.3,3.4l2.3,-3.4l2.3,3.4l2.3,-3.4l2.3,3.4l2.3,-3.4l2.3,3.4l2.3,-3.4l2.3,3.4l2.3,-3.4l2.3,3.4l2.3,-3.4l2.3,3.4l2.3,-3.4l2.3,3.4l2.3,-3.4l2.3,3.4l2.3,-3.4l2.3,3.4l2.3,-3.4l2.3,3.4l2.3,-3.4l2.3,3.4l2.3,-3.4l2.3,3.4l2.3,-3.4l2.3,3.4l2.3,-3.4l2.3,3.4l2.3,-3.4l2.3,3.4l2.3,-3.4l2.3,3.4l2.3,-3.4l2.3,3.4l2.3,-3.4l2.3,3.4 M1647.4,1050.6l2.3,-3.4l2.3,3.4l2.3,-3.4l2.3,3.4l2.3,-3.4l2.3,3.4l2.3,-3.4l2.3,3.4l2.3,-3.4 M1673.9,1050.6l2.3,-3.4l2.3,3.4l2.3,-3.4l2.3,3.4l2.3,-3.4l2.3,3.4l2.3,-3.4l2.3,3.4l2.3,-3.4l2.3,3.4l2.3,-3.4l2.3,3.4l2.3,-3.4l2.3,3.4l2.3,-3.4l2.3,3.4l2.3,-3.4l2.3,3.4l2.3,-3.4l2.3,3.4 M1725.4,1050.6l2.3,-3.4l2.3,3.4l2.3,-3.4l2.3,3.4l2.3,-3.4l2.3,3.4l2.3,-3.4l2.3,3.4l2.3,-3.4l2.3,3.4l2.3,-3.4l2.3,3.4l2.3,-3.4l2.3,3.4l2.3,-3.4l2.3,3.4l2.3,-3.4l2.3,3.4l2.3,-3.4l2.3,3.4l2.3,-3.4l2.3,3.4 M2037.5,1050.6l2.3,-3.4l2.3,3.4l2.3,-3.4l2.3,3.4l2.3,-3.4l2.3,3.4l2.3,-3.4l2.3,3.4l2.3,-3.4l2.3,3.4l2.3,-3.4l2.3,3.4l2.3,-3.4l2.3,3.4l2.3,-3.4l2.3,3.4l2.3,-3.4l2.3,3.4l2.3,-3.4l2.3,3.4l2.3,-3.4l2.3,3.4l2.3,-3.4l2.3,3.4l2.3,-3.4l2.3,3.4 M1044.5,1084.3l2.3,-3.4l2.3,3.4l2.3,-3.4l2.3,3.4l2.3,-3.4l2.3,3.4l2.3,-3.4l2.3,3.4l2.3,-3.4l2.3,3.4l2.3,-3.4l2.3,3.4l2.3,-3.4l2.3,3.4l2.3,-3.4l2.3,3.4l2.3,-3.4l2.3,3.4l2.3,-3.4l2.3,3.4l2.3,-3.4l2.3,3.4l2.3,-3.4l2.3,3.4l2.3,-3.4l2.3,3.4l2.3,-3.4l2.3,3.4l2.3,-3.4l2.3,3.4l2.3,-3.4l2.3,3.4l2.3,-3.4l2.3,3.4l2.3,-3.4l2.3,3.4 M1132.9,1084.3l2.3,-3.4l2.3,3.4l2.3,-3.4l2.3,3.4l2.3,-3.4l2.3,3.4l2.3,-3.4l2.3,3.4l2.3,-3.4l2.3,3.4l2.3,-3.4l2.3,3.4l2.3,-3.4l2.3,3.4l2.3,-3.4l2.3,3.4l2.3,-3.4l2.3,3.4l2.3,-3.4l2.3,3.4l2.3,-3.4l2.3,3.4l2.3,-3.4l2.3,3.4l2.3,-3.4l2.3,3.4l2.3,-3.4l2.3,3.4l2.3,-3.4l2.3,3.4l2.3,-3.4l2.3,3.4l2.3,-3.4l2.3,3.4l2.3,-3.4l2.3,3.4l2.3,-3.4l2.3,3.4l2.3,-3.4l2.3,3.4l2.3,-3.4 M1259.1,1084.3l2.3,-3.4l2.3,3.4l2.3,-3.4l2.3,3.4l2.3,-3.4l2.3,3.4l2.3,-3.4l2.3,3.4l2.3,-3.4l2.3,3.4l2.3,-3.4l2.3,3.4l2.3,-3.4l2.3,3.4l2.3,-3.4l2.3,3.4l2.3,-3.4l2.3,3.4l2.3,-3.4l2.3,3.4l2.3,-3.4l2.3,3.4l2.3,-3.4l2.3,3.4l2.3,-3.4 M1348.8,1084.3l2.3,-3.4l2.3,3.4l2.3,-3.4l2.3,3.4l2.3,-3.4l2.3,3.4l2.3,-3.4l2.3,3.4l2.3,-3.4l2.3,3.4l2.3,-3.4l2.3,3.4l2.3,-3.4l2.3,3.4l2.3,-3.4l2.3,3.4l2.3,-3.4l2.3,3.4l2.3,-3.4l2.3,3.4l2.3,-3.4l2.3,3.4l2.3,-3.4l2.3,3.4l2.3,-3.4l2.3,3.4l2.3,-3.4l2.3,3.4l2.3,-3.4l2.3,3.4l2.3,-3.4l2.3,3.4l2.3,-3.4l2.3,3.4l2.3,-3.4l2.3,3.4l2.3,-3.4l2.3,3.4l2.3,-3.4l2.3,3.4l2.3,-3.4l2.3,3.4l2.3,-3.4l2.3,3.4l2.3,-3.4l2.3,3.4l2.3,-3.4l2.3,3.4l2.3,-3.4l2.3,3.4 M1537.4,1084.3l2.3,-3.4l2.3,3.4l2.3,-3.4l2.3,3.4l2.3,-3.4l2.3,3.4l2.3,-3.4l2.3,3.4l2.3,-3.4l2.3,3.4l2.3,-3.4l2.3,3.4l2.3,-3.4l2.3,3.4l2.3,-3.4l2.3,3.4l2.3,-3.4l2.3,3.4l2.3,-3.4l2.3,3.4l2.3,-3.4l2.3,3.4l2.3,-3.4l2.3,3.4l2.3,-3.4l2.3,3.4l2.3,-3.4l2.3,3.4l2.3,-3.4l2.3,3.4 M1612.8,1084.3l2.3,-3.4l2.3,3.4l2.3,-3.4l2.3,3.4l2.3,-3.4l2.3,3.4l2.3,-3.4l2.3,3.4l2.3,-3.4l2.3,3.4l2.3,-3.4l2.3,3.4l2.3,-3.4l2.3,3.4l2.3,-3.4l2.3,3.4l2.3,-3.4l2.3,3.4l2.3,-3.4l2.3,3.4l2.3,-3.4l2.3,3.4l2.3,-3.4l2.3,3.4l2.3,-3.4l2.3,3.4l2.3,-3.4l2.3,3.4l2.3,-3.4l2.3,3.4l2.3,-3.4l2.3,3.4l2.3,-3.4l2.3,3.4l2.3,-3.4l2.3,3.4l2.3,-3.4l2.3,3.4l2.3,-3.4l2.3,3.4l2.3,-3.4l2.3,3.4l2.3,-3.4l2.3,3.4l2.3,-3.4 M1722.1,1084.3l2.3,-3.4l2.3,3.4l2.3,-3.4l2.3,3.4l2.3,-3.4l2.3,3.4l2.3,-3.4l2.3,3.4l2.3,-3.4l2.3,3.4l2.3,-3.4l2.3,3.4l2.3,-3.4l2.3,3.4l2.3,-3.4l2.3,3.4l2.3,-3.4l2.3,3.4l2.3,-3.4l2.3,3.4l2.3,-3.4l2.3,3.4 M1779.3,1084.3l2.3,-3.4l2.3,3.4l2.3,-3.4l2.3,3.4l2.3,-3.4l2.3,3.4l2.3,-3.4l2.3,3.4l2.3,-3.4l2.3,3.4l2.3,-3.4l2.3,3.4l2.3,-3.4l2.3,3.4l2.3,-3.4l2.3,3.4l2.3,-3.4l2.3,3.4l2.3,-3.4l2.3,3.4l2.3,-3.4l2.3,3.4l2.3,-3.4l2.3,3.4l2.3,-3.4l2.3,3.4l2.3,-3.4l2.3,3.4l2.3,-3.4l2.3,3.4l2.3,-3.4l2.3,3.4l2.3,-3.4 M2001.6,1084.3l2.3,-3.4l2.3,3.4l2.3,-3.4l2.3,3.4l2.3,-3.4l2.3,3.4l2.3,-3.4l2.3,3.4l2.3,-3.4l2.3,3.4l2.3,-3.4l2.3,3.4l2.3,-3.4l2.3,3.4l2.3,-3.4l2.3,3.4l2.3,-3.4l2.3,3.4l2.3,-3.4l2.3,3.4l2.3,-3.4l2.3,3.4l2.3,-3.4l2.3,3.4l2.3,-3.4l2.3,3.4l2.3,-3.4l2.3,3.4l2.3,-3.4l2.3,3.4 M1044.5,1118.0l2.3,-3.4l2.3,3.4l2.3,-3.4l2.3,3.4l2.3,-3.4l2.3,3.4l2.3,-3.4l2.3,3.4l2.3,-3.4l2.3,3.4l2.3,-3.4l2.3,3.4l2.3,-3.4l2.3,3.4l2.3,-3.4l2.3,3.4l2.3,-3.4l2.3,3.4l2.3,-3.4l2.3,3.4l2.3,-3.4l2.3,3.4l2.3,-3.4l2.3,3.4l2.3,-3.4l2.3,3.4l2.3,-3.4l2.3,3.4l2.3,-3.4l2.3,3.4l2.3,-3.4l2.3,3.4 M1150.2,1118.0l2.3,-3.4l2.3,3.4l2.3,-3.4l2.3,3.4l2.3,-3.4l2.3,3.4l2.3,-3.4l2.3,3.4l2.3,-3.4l2.3,3.4l2.3,-3.4l2.3,3.4l2.3,-3.4l2.3,3.4l2.3,-3.4l2.3,3.4l2.3,-3.4l2.3,3.4l2.3,-3.4l2.3,3.4l2.3,-3.4l2.3,3.4l2.3,-3.4l2.3,3.4l2.3,-3.4l2.3,3.4l2.3,-3.4l2.3,3.4l2.3,-3.4l2.3,3.4l2.3,-3.4l2.3,3.4l2.3,-3.4l2.3,3.4l2.3,-3.4l2.3,3.4l2.3,-3.4l2.3,3.4l2.3,-3.4l2.3,3.4l2.3,-3.4l2.3,3.4l2.3,-3.4l2.3,3.4l2.3,-3.4l2.3,3.4l2.3,-3.4l2.3,3.4l2.3,-3.4l2.3,3.4l2.3,-3.4l2.3,3.4l2.3,-3.4 M1279.7,1118.0l2.3,-3.4l2.3,3.4l2.3,-3.4l2.3,3.4l2.3,-3.4l2.3,3.4l2.3,-3.4l2.3,3.4l2.3,-3.4l2.3,3.4l2.3,-3.4l2.3,3.4l2.3,-3.4l2.3,3.4l2.3,-3.4l2.3,3.4l2.3,-3.4l2.3,3.4l2.3,-3.4l2.3,3.4l2.3,-3.4l2.3,3.4l2.3,-3.4l2.3,3.4l2.3,-3.4l2.3,3.4 M1345.8,1118.0l2.3,-3.4l2.3,3.4l2.3,-3.4l2.3,3.4l2.3,-3.4l2.3,3.4l2.3,-3.4l2.3,3.4l2.3,-3.4 M1372.2,1118.0l2.3,-3.4l2.3,3.4l2.3,-3.4l2.3,3.4l2.3,-3.4l2.3,3.4l2.3,-3.4l2.3,3.4l2.3,-3.4l2.3,3.4l2.3,-3.4l2.3,3.4l2.3,-3.4l2.3,3.4l2.3,-3.4l2.3,3.4l2.3,-3.4l2.3,3.4l2.3,-3.4l2.3,3.4l2.3,-3.4l2.3,3.4l2.3,-3.4l2.3,3.4l2.3,-3.4l2.3,3.4l2.3,-3.4l2.3,3.4l2.3,-3.4l2.3,3.4l2.3,-3.4l2.3,3.4l2.3,-3.4l2.3,3.4l2.3,-3.4l2.3,3.4l2.3,-3.4l2.3,3.4 M1562.5,1118.0l2.3,-3.4l2.3,3.4l2.3,-3.4l2.3,3.4l2.3,-3.4l2.3,3.4l2.3,-3.4l2.3,3.4l2.3,-3.4l2.3,3.4l2.3,-3.4l2.3,3.4l2.3,-3.4l2.3,3.4l2.3,-3.4l2.3,3.4l2.3,-3.4l2.3,3.4l2.3,-3.4l2.3,3.4l2.3,-3.4 M1618.0,1118.0l2.3,-3.4l2.3,3.4l2.3,-3.4l2.3,3.4l2.3,-3.4l2.3,3.4l2.3,-3.4l2.3,3.4l2.3,-3.4l2.3,3.4l2.3,-3.4l2.3,3.4l2.3,-3.4l2.3,3.4l2.3,-3.4l2.3,3.4l2.3,-3.4l2.3,3.4l2.3,-3.4l2.3,3.4l2.3,-3.4l2.3,3.4l2.3,-3.4l2.3,3.4 M1705.2,1118.0l2.3,-3.4l2.3,3.4l2.3,-3.4l2.3,3.4l2.3,-3.4l2.3,3.4l2.3,-3.4l2.3,3.4l2.3,-3.4l2.3,3.4l2.3,-3.4l2.3,3.4l2.3,-3.4l2.3,3.4l2.3,-3.4l2.3,3.4l2.3,-3.4l2.3,3.4l2.3,-3.4l2.3,3.4l2.3,-3.4l2.3,3.4l2.3,-3.4l2.3,3.4l2.3,-3.4l2.3,3.4l2.3,-3.4l2.3,3.4l2.3,-3.4l2.3,3.4 M1781.9,1118.0l2.3,-3.4l2.3,3.4l2.3,-3.4l2.3,3.4l2.3,-3.4l2.3,3.4l2.3,-3.4l2.3,3.4l2.3,-3.4l2.3,3.4l2.3,-3.4l2.3,3.4l2.3,-3.4l2.3,3.4l2.3,-3.4l2.3,3.4l2.3,-3.4l2.3,3.4l2.3,-3.4l2.3,3.4l2.3,-3.4l2.3,3.4l2.3,-3.4l2.3,3.4l2.3,-3.4l2.3,3.4l2.3,-3.4 M1850.6,1118.0l2.3,-3.4l2.3,3.4l2.3,-3.4l2.3,3.4l2.3,-3.4l2.3,3.4l2.3,-3.4l2.3,3.4l2.3,-3.4l2.3,3.4l2.3,-3.4l2.3,3.4l2.3,-3.4l2.3,3.4l2.3,-3.4l2.3,3.4l2.3,-3.4l2.3,3.4l2.3,-3.4l2.3,3.4l2.3,-3.4l2.3,3.4l2.3,-3.4 M1910.1,1118.0l2.3,-3.4l2.3,3.4l2.3,-3.4l2.3,3.4l2.3,-3.4l2.3,3.4l2.3,-3.4l2.3,3.4l2.3,-3.4l2.3,3.4l2.3,-3.4l2.3,3.4l2.3,-3.4l2.3,3.4l2.3,-3.4l2.3,3.4l2.3,-3.4l2.3,3.4l2.3,-3.4l2.3,3.4 M1961.6,1118.0l2.3,-3.4l2.3,3.4l2.3,-3.4l2.3,3.4l2.3,-3.4l2.3,3.4l2.3,-3.4l2.3,3.4l2.3,-3.4l2.3,3.4l2.3,-3.4l2.3,3.4l2.3,-3.4l2.3,3.4l2.3,-3.4l2.3,3.4 M1044.5,1151.7l2.3,-3.4l2.3,3.4l2.3,-3.4l2.3,3.4l2.3,-3.4l2.3,3.4l2.3,-3.4l2.3,3.4l2.3,-3.4l2.3,3.4l2.3,-3.4l2.3,3.4l2.3,-3.4l2.3,3.4l2.3,-3.4l2.3,3.4l2.3,-3.4l2.3,3.4l2.3,-3.4l2.3,3.4l2.3,-3.4l2.3,3.4l2.3,-3.4l2.3,3.4l2.3,-3.4l2.3,3.4l2.3,-3.4l2.3,3.4l2.3,-3.4l2.3,3.4l2.3,-3.4l2.3,3.4l2.3,-3.4l2.3,3.4l2.3,-3.4l2.3,3.4l2.3,-3.4l2.3,3.4l2.3,-3.4l2.3,3.4l2.3,-3.4l2.3,3.4l2.3,-3.4l2.3,3.4l2.3,-3.4l2.3,3.4l2.3,-3.4l2.3,3.4l2.3,-3.4l2.3,3.4l2.3,-3.4l2.3,3.4l2.3,-3.4l2.3,3.4l2.3,-3.4l2.3,3.4l2.3,-3.4l2.3,3.4l2.3,-3.4l2.3,3.4l2.3,-3.4l2.3,3.4 M1265.2,1151.7l2.3,-3.4l2.3,3.4l2.3,-3.4l2.3,3.4l2.3,-3.4l2.3,3.4l2.3,-3.4l2.3,3.4l2.3,-3.4l2.3,3.4l2.3,-3.4l2.3,3.4l2.3,-3.4l2.3,3.4l2.3,-3.4l2.3,3.4l2.3,-3.4l2.3,3.4l2.3,-3.4l2.3,3.4l2.3,-3.4l2.3,3.4l2.3,-3.4l2.3,3.4l2.3,-3.4l2.3,3.4l2.3,-3.4l2.3,3.4l2.3,-3.4l2.3,3.4l2.3,-3.4 M1420.2,1151.7l2.3,-3.4l2.3,3.4l2.3,-3.4l2.3,3.4l2.3,-3.4l2.3,3.4l2.3,-3.4l2.3,3.4l2.3,-3.4l2.3,3.4l2.3,-3.4l2.3,3.4l2.3,-3.4l2.3,3.4l2.3,-3.4l2.3,3.4l2.3,-3.4l2.3,3.4l2.3,-3.4l2.3,3.4l2.3,-3.4l2.3,3.4l2.3,-3.4l2.3,3.4l2.3,-3.4l2.3,3.4l2.3,-3.4l2.3,3.4 M1593.6,1151.7l2.3,-3.4l2.3,3.4l2.3,-3.4l2.3,3.4l2.3,-3.4l2.3,3.4l2.3,-3.4l2.3,3.4l2.3,-3.4l2.3,3.4l2.3,-3.4l2.3,3.4l2.3,-3.4l2.3,3.4l2.3,-3.4l2.3,3.4l2.3,-3.4l2.3,3.4l2.3,-3.4l2.3,3.4l2.3,-3.4l2.3,3.4l2.3,-3.4l2.3,3.4l2.3,-3.4l2.3,3.4l2.3,-3.4l2.3,3.4l2.3,-3.4l2.3,3.4l2.3,-3.4 M1679.1,1151.7l2.3,-3.4l2.3,3.4l2.3,-3.4l2.3,3.4l2.3,-3.4l2.3,3.4l2.3,-3.4l2.3,3.4l2.3,-3.4l2.3,3.4l2.3,-3.4l2.3,3.4l2.3,-3.4l2.3,3.4l2.3,-3.4l2.3,3.4l2.3,-3.4l2.3,3.4l2.3,-3.4l2.3,3.4l2.3,-3.4l2.3,3.4l2.3,-3.4l2.3,3.4l2.3,-3.4l2.3,3.4l2.3,-3.4l2.3,3.4l2.3,-3.4l2.3,3.4l2.3,-3.4l2.3,3.4l2.3,-3.4l2.3,3.4 M1924.7,1151.7l2.3,-3.4l2.3,3.4l2.3,-3.4l2.3,3.4l2.3,-3.4l2.3,3.4l2.3,-3.4l2.3,3.4l2.3,-3.4l2.3,3.4l2.3,-3.4l2.3,3.4l2.3,-3.4l2.3,3.4l2.3,-3.4l2.3,3.4l2.3,-3.4l2.3,3.4l2.3,-3.4l2.3,3.4l2.3,-3.4l2.3,3.4l2.3,-3.4l2.3,3.4l2.3,-3.4 M1987.8,1151.7l2.3,-3.4l2.3,3.4l2.3,-3.4l2.3,3.4l2.3,-3.4l2.3,3.4l2.3,-3.4l2.3,3.4l2.3,-3.4 M1044.5,1185.5l2.3,-3.4l2.3,3.4l2.3,-3.4l2.3,3.4l2.3,-3.4l2.3,3.4l2.3,-3.4l2.3,3.4l2.3,-3.4l2.3,3.4l2.3,-3.4l2.3,3.4l2.3,-3.4l2.3,3.4l2.3,-3.4l2.3,3.4l2.3,-3.4l2.3,3.4l2.3,-3.4l2.3,3.4l2.3,-3.4l2.3,3.4l2.3,-3.4l2.3,3.4l2.3,-3.4l2.3,3.4l2.3,-3.4l2.3,3.4l2.3,-3.4l2.3,3.4l2.3,-3.4l2.3,3.4l2.3,-3.4l2.3,3.4l2.3,-3.4l2.3,3.4 M1134.3,1185.5l2.3,-3.4l2.3,3.4l2.3,-3.4l2.3,3.4l2.3,-3.4l2.3,3.4l2.3,-3.4l2.3,3.4l2.3,-3.4l2.3,3.4l2.3,-3.4l2.3,3.4l2.3,-3.4l2.3,3.4l2.3,-3.4l2.3,3.4 M1178.6,1185.5l2.3,-3.4l2.3,3.4l2.3,-3.4l2.3,3.4l2.3,-3.4l2.3,3.4l2.3,-3.4l2.3,3.4l2.3,-3.4l2.3,3.4l2.3,-3.4l2.3,3.4l2.3,-3.4l2.3,3.4l2.3,-3.4l2.3,3.4l2.3,-3.4l2.3,3.4l2.3,-3.4l2.3,3.4l2.3,-3.4l2.3,3.4 M1234.6,1185.5l2.3,-3.4l2.3,3.4l2.3,-3.4l2.3,3.4l2.3,-3.4l2.3,3.4l2.3,-3.4l2.3,3.4l2.3,-3.4l2.3,3.4l2.3,-3.4l2.3,3.4l2.3,-3.4l2.3,3.4l2.3,-3.4l2.3,3.4l2.3,-3.4l2.3,3.4l2.3,-3.4l2.3,3.4l2.3,-3.4l2.3,3.4l2.3,-3.4l2.3,3.4l2.3,-3.4l2.3,3.4l2.3,-3.4l2.3,3.4l2.3,-3.4l2.3,3.4l2.3,-3.4l2.3,3.4l2.3,-3.4l2.3,3.4l2.3,-3.4l2.3,3.4l2.3,-3.4l2.3,3.4l2.3,-3.4l2.3,3.4l2.3,-3.4l2.3,3.4l2.3,-3.4l2.3,3.4l2.3,-3.4l2.3,3.4l2.3,-3.4l2.3,3.4l2.3,-3.4l2.3,3.4l2.3,-3.4l2.3,3.4l2.3,-3.4l2.3,3.4l2.3,-3.4l2.3,3.4l2.3,-3.4l2.3,3.4 M1373.9,1185.5l2.3,-3.4l2.3,3.4l2.3,-3.4l2.3,3.4l2.3,-3.4l2.3,3.4l2.3,-3.4l2.3,3.4l2.3,-3.4l2.3,3.4l2.3,-3.4l2.3,3.4l2.3,-3.4l2.3,3.4l2.3,-3.4l2.3,3.4l2.3,-3.4l2.3,3.4l2.3,-3.4l2.3,3.4l2.3,-3.4l2.3,3.4l2.3,-3.4l2.3,3.4l2.3,-3.4l2.3,3.4l2.3,-3.4l2.3,3.4l2.3,-3.4l2.3,3.4l2.3,-3.4l2.3,3.4l2.3,-3.4l2.3,3.4l2.3,-3.4l2.3,3.4l2.3,-3.4l2.3,3.4l2.3,-3.4l2.3,3.4l2.3,-3.4l2.3,3.4 M1044.5,1290.0l2.3,-3.4l2.3,3.4l2.3,-3.4l2.3,3.4l2.3,-3.4l2.3,3.4l2.3,-3.4l2.3,3.4l2.3,-3.4l2.3,3.4l2.3,-3.4l2.3,3.4l2.3,-3.4l2.3,3.4l2.3,-3.4l2.3,3.4l2.3,-3.4l2.3,3.4l2.3,-3.4l2.3,3.4l2.3,-3.4l2.3,3.4l2.3,-3.4l2.3,3.4l2.3,-3.4l2.3,3.4l2.3,-3.4l2.3,3.4l2.3,-3.4l2.3,3.4l2.3,-3.4l2.3,3.4l2.3,-3.4l2.3,3.4l2.3,-3.4l2.3,3.4l2.3,-3.4l2.3,3.4l2.3,-3.4l2.3,3.4l2.3,-3.4l2.3,3.4 M1186.3,1290.0l2.3,-3.4l2.3,3.4l2.3,-3.4l2.3,3.4l2.3,-3.4l2.3,3.4l2.3,-3.4l2.3,3.4l2.3,-3.4 M1213.0,1290.0l2.3,-3.4l2.3,3.4l2.3,-3.4l2.3,3.4l2.3,-3.4l2.3,3.4l2.3,-3.4l2.3,3.4l2.3,-3.4l2.3,3.4l2.3,-3.4l2.3,3.4l2.3,-3.4l2.3,3.4l2.3,-3.4l2.3,3.4l2.3,-3.4l2.3,3.4l2.3,-3.4l2.3,3.4l2.3,-3.4l2.3,3.4l2.3,-3.4l2.3,3.4l2.3,-3.4l2.3,3.4l2.3,-3.4l2.3,3.4l2.3,-3.4l2.3,3.4 M1289.0,1290.0l2.3,-3.4l2.3,3.4l2.3,-3.4l2.3,3.4l2.3,-3.4l2.3,3.4l2.3,-3.4l2.3,3.4l2.3,-3.4l2.3,3.4l2.3,-3.4l2.3,3.4l2.3,-3.4l2.3,3.4l2.3,-3.4l2.3,3.4l2.3,-3.4l2.3,3.4l2.3,-3.4l2.3,3.4l2.3,-3.4l2.3,3.4l2.3,-3.4l2.3,3.4l2.3,-3.4l2.3,3.4l2.3,-3.4 M1426.4,1290.0l2.3,-3.4l2.3,3.4l2.3,-3.4l2.3,3.4l2.3,-3.4l2.3,3.4l2.3,-3.4l2.3,3.4l2.3,-3.4l2.3,3.4l2.3,-3.4l2.3,3.4l2.3,-3.4l2.3,3.4l2.3,-3.4l2.3,3.4l2.3,-3.4l2.3,3.4l2.3,-3.4l2.3,3.4l2.3,-3.4l2.3,3.4l2.3,-3.4l2.3,3.4 M1489.1,1290.0l2.3,-3.4l2.3,3.4l2.3,-3.4l2.3,3.4l2.3,-3.4l2.3,3.4l2.3,-3.4l2.3,3.4l2.3,-3.4l2.3,3.4l2.3,-3.4l2.3,3.4l2.3,-3.4l2.3,3.4l2.3,-3.4l2.3,3.4l2.3,-3.4l2.3,3.4l2.3,-3.4l2.3,3.4 M1541.1,1290.0l2.3,-3.4l2.3,3.4l2.3,-3.4l2.3,3.4l2.3,-3.4l2.3,3.4l2.3,-3.4l2.3,3.4l2.3,-3.4l2.3,3.4l2.3,-3.4l2.3,3.4l2.3,-3.4l2.3,3.4l2.3,-3.4l2.3,3.4l2.3,-3.4l2.3,3.4l2.3,-3.4l2.3,3.4l2.3,-3.4l2.3,3.4l2.3,-3.4l2.3,3.4l2.3,-3.4l2.3,3.4l2.3,-3.4l2.3,3.4l2.3,-3.4l2.3,3.4l2.3,-3.4l2.3,3.4l2.3,-3.4l2.3,3.4l2.3,-3.4l2.3,3.4l2.3,-3.4l2.3,3.4l2.3,-3.4l2.3,3.4l2.3,-3.4l2.3,3.4l2.3,-3.4l2.3,3.4l2.3,-3.4l2.3,3.4 M1654.5,1290.0l2.3,-3.4l2.3,3.4l2.3,-3.4l2.3,3.4l2.3,-3.4l2.3,3.4l2.3,-3.4l2.3,3.4l2.3,-3.4l2.3,3.4l2.3,-3.4l2.3,3.4l2.3,-3.4l2.3,3.4l2.3,-3.4l2.3,3.4l2.3,-3.4l2.3,3.4l2.3,-3.4l2.3,3.4l2.3,-3.4l2.3,3.4l2.3,-3.4 M1713.2,1290.0l2.3,-3.4l2.3,3.4l2.3,-3.4l2.3,3.4l2.3,-3.4l2.3,3.4l2.3,-3.4l2.3,3.4l2.3,-3.4l2.3,3.4l2.3,-3.4l2.3,3.4 M1746.6,1290.0l2.3,-3.4l2.3,3.4l2.3,-3.4l2.3,3.4l2.3,-3.4l2.3,3.4l2.3,-3.4l2.3,3.4l2.3,-3.4l2.3,3.4l2.3,-3.4l2.3,3.4l2.3,-3.4l2.3,3.4l2.3,-3.4l2.3,3.4l2.3,-3.4l2.3,3.4l2.3,-3.4l2.3,3.4l2.3,-3.4l2.3,3.4l2.3,-3.4l2.3,3.4l2.3,-3.4l2.3,3.4 M1811.9,1290.0l2.3,-3.4l2.3,3.4l2.3,-3.4l2.3,3.4l2.3,-3.4l2.3,3.4l2.3,-3.4l2.3,3.4l2.3,-3.4l2.3,3.4l2.3,-3.4l2.3,3.4l2.3,-3.4l2.3,3.4l2.3,-3.4l2.3,3.4l2.3,-3.4l2.3,3.4l2.3,-3.4l2.3,3.4l2.3,-3.4l2.3,3.4l2.3,-3.4l2.3,3.4l2.3,-3.4l2.3,3.4l2.3,-3.4l2.3,3.4l2.3,-3.4l2.3,3.4l2.3,-3.4l2.3,3.4l2.3,-3.4l2.3,3.4l2.3,-3.4l2.3,3.4l2.3,-3.4 M1902.7,1290.0l2.3,-3.4l2.3,3.4l2.3,-3.4l2.3,3.4l2.3,-3.4l2.3,3.4l2.3,-3.4l2.3,3.4l2.3,-3.4l2.3,3.4l2.3,-3.4l2.3,3.4l2.3,-3.4l2.3,3.4l2.3,-3.4l2.3,3.4l2.3,-3.4l2.3,3.4l2.3,-3.4l2.3,3.4l2.3,-3.4l2.3,3.4l2.3,-3.4l2.3,3.4l2.3,-3.4l2.3,3.4l2.3,-3.4l2.3,3.4l2.3,-3.4l2.3,3.4l2.3,-3.4l2.3,3.4l2.3,-3.4l2.3,3.4l2.3,-3.4 M1996.0,1290.0l2.3,-3.4l2.3,3.4l2.3,-3.4l2.3,3.4l2.3,-3.4l2.3,3.4l2.3,-3.4l2.3,3.4l2.3,-3.4l2.3,3.4l2.3,-3.4l2.3,3.4l2.3,-3.4l2.3,3.4l2.3,-3.4l2.3,3.4l2.3,-3.4l2.3,3.4l2.3,-3.4l2.3,3.4l2.3,-3.4l2.3,3.4l2.3,-3.4l2.3,3.4 M1044.5,1323.7l2.3,-3.4l2.3,3.4l2.3,-3.4l2.3,3.4l2.3,-3.4l2.3,3.4l2.3,-3.4l2.3,3.4l2.3,-3.4l2.3,3.4l2.3,-3.4l2.3,3.4l2.3,-3.4l2.3,3.4l2.3,-3.4l2.3,3.4l2.3,-3.4l2.3,3.4l2.3,-3.4l2.3,3.4l2.3,-3.4l2.3,3.4l2.3,-3.4l2.3,3.4l2.3,-3.4l2.3,3.4 M1109.9,1323.7l2.3,-3.4l2.3,3.4l2.3,-3.4l2.3,3.4l2.3,-3.4l2.3,3.4l2.3,-3.4l2.3,3.4l2.3,-3.4l2.3,3.4l2.3,-3.4l2.3,3.4l2.3,-3.4l2.3,3.4l2.3,-3.4l2.3,3.4l2.3,-3.4l2.3,3.4l2.3,-3.4l2.3,3.4l2.3,-3.4l2.3,3.4 M1166.2,1323.7l2.3,-3.4l2.3,3.4l2.3,-3.4l2.3,3.4l2.3,-3.4l2.3,3.4l2.3,-3.4l2.3,3.4l2.3,-3.4l2.3,3.4l2.3,-3.4l2.3,3.4l2.3,-3.4l2.3,3.4l2.3,-3.4l2.3,3.4l2.3,-3.4l2.3,3.4l2.3,-3.4l2.3,3.4l2.3,-3.4l2.3,3.4l2.3,-3.4l2.3,3.4l2.3,-3.4l2.3,3.4l2.3,-3.4l2.3,3.4l2.3,-3.4l2.3,3.4l2.3,-3.4l2.3,3.4l2.3,-3.4l2.3,3.4l2.3,-3.4 M1252.6,1323.7l2.3,-3.4l2.3,3.4l2.3,-3.4l2.3,3.4l2.3,-3.4l2.3,3.4l2.3,-3.4l2.3,3.4l2.3,-3.4l2.3,3.4l2.3,-3.4l2.3,3.4l2.3,-3.4l2.3,3.4l2.3,-3.4l2.3,3.4l2.3,-3.4l2.3,3.4l2.3,-3.4l2.3,3.4l2.3,-3.4l2.3,3.4l2.3,-3.4l2.3,3.4l2.3,-3.4l2.3,3.4l2.3,-3.4l2.3,3.4l2.3,-3.4l2.3,3.4 M1410.9,1323.7l2.3,-3.4l2.3,3.4l2.3,-3.4l2.3,3.4l2.3,-3.4l2.3,3.4l2.3,-3.4l2.3,3.4l2.3,-3.4l2.3,3.4l2.3,-3.4l2.3,3.4l2.3,-3.4l2.3,3.4l2.3,-3.4l2.3,3.4l2.3,-3.4l2.3,3.4l2.3,-3.4l2.3,3.4l2.3,-3.4l2.3,3.4l2.3,-3.4l2.3,3.4l2.3,-3.4l2.3,3.4l2.3,-3.4l2.3,3.4l2.3,-3.4l2.3,3.4l2.3,-3.4 M1544.3,1323.7l2.3,-3.4l2.3,3.4l2.3,-3.4l2.3,3.4l2.3,-3.4l2.3,3.4l2.3,-3.4l2.3,3.4l2.3,-3.4l2.3,3.4l2.3,-3.4l2.3,3.4l2.3,-3.4l2.3,3.4l2.3,-3.4l2.3,3.4l2.3,-3.4l2.3,3.4l2.3,-3.4l2.3,3.4l2.3,-3.4l2.3,3.4l2.3,-3.4l2.3,3.4l2.3,-3.4l2.3,3.4l2.3,-3.4l2.3,3.4l2.3,-3.4l2.3,3.4l2.3,-3.4l2.3,3.4l2.3,-3.4l2.3,3.4l2.3,-3.4 M1630.7,1323.7l2.3,-3.4l2.3,3.4l2.3,-3.4l2.3,3.4l2.3,-3.4l2.3,3.4l2.3,-3.4l2.3,3.4l2.3,-3.4l2.3,3.4l2.3,-3.4l2.3,3.4l2.3,-3.4l2.3,3.4 M1747.1,1323.7l2.3,-3.4l2.3,3.4l2.3,-3.4l2.3,3.4l2.3,-3.4l2.3,3.4l2.3,-3.4l2.3,3.4l2.3,-3.4l2.3,3.4l2.3,-3.4l2.3,3.4l2.3,-3.4l2.3,3.4l2.3,-3.4l2.3,3.4l2.3,-3.4l2.3,3.4l2.3,-3.4l2.3,3.4l2.3,-3.4l2.3,3.4l2.3,-3.4l2.3,3.4l2.3,-3.4l2.3,3.4l2.3,-3.4l2.3,3.4l2.3,-3.4l2.3,3.4l2.3,-3.4l2.3,3.4l2.3,-3.4l2.3,3.4l2.3,-3.4l2.3,3.4l2.3,-3.4l2.3,3.4l2.3,-3.4l2.3,3.4l2.3,-3.4l2.3,3.4l2.3,-3.4l2.3,3.4l2.3,-3.4l2.3,3.4l2.3,-3.4l2.3,3.4l2.3,-3.4l2.3,3.4 M1868.8,1323.7l2.3,-3.4l2.3,3.4l2.3,-3.4l2.3,3.4l2.3,-3.4l2.3,3.4l2.3,-3.4l2.3,3.4l2.3,-3.4l2.3,3.4l2.3,-3.4l2.3,3.4l2.3,-3.4l2.3,3.4l2.3,-3.4l2.3,3.4l2.3,-3.4l2.3,3.4l2.3,-3.4l2.3,3.4l2.3,-3.4l2.3,3.4 M1926.4,1323.7l2.3,-3.4l2.3,3.4l2.3,-3.4l2.3,3.4l2.3,-3.4l2.3,3.4l2.3,-3.4l2.3,3.4l2.3,-3.4l2.3,3.4l2.3,-3.4l2.3,3.4l2.3,-3.4 M1963.1,1323.7l2.3,-3.4l2.3,3.4l2.3,-3.4l2.3,3.4l2.3,-3.4l2.3,3.4l2.3,-3.4l2.3,3.4l2.3,-3.4l2.3,3.4l2.3,-3.4l2.3,3.4l2.3,-3.4l2.3,3.4l2.3,-3.4l2.3,3.4l2.3,-3.4l2.3,3.4l2.3,-3.4l2.3,3.4l2.3,-3.4l2.3,3.4 M2025.9,1323.7l2.3,-3.4l2.3,3.4l2.3,-3.4l2.3,3.4l2.3,-3.4l2.3,3.4l2.3,-3.4l2.3,3.4l2.3,-3.4l2.3,3.4l2.3,-3.4l2.3,3.4l2.3,-3.4l2.3,3.4l2.3,-3.4l2.3,3.4l2.3,-3.4l2.3,3.4l2.3,-3.4l2.3,3.4l2.3,-3.4l2.3,3.4l2.3,-3.4l2.3,3.4 M1044.5,1357.4l2.3,-3.4l2.3,3.4l2.3,-3.4l2.3,3.4l2.3,-3.4l2.3,3.4l2.3,-3.4l2.3,3.4l2.3,-3.4l2.3,3.4l2.3,-3.4l2.3,3.4l2.3,-3.4l2.3,3.4l2.3,-3.4l2.3,3.4l2.3,-3.4l2.3,3.4l2.3,-3.4l2.3,3.4l2.3,-3.4l2.3,3.4l2.3,-3.4l2.3,3.4l2.3,-3.4l2.3,3.4l2.3,-3.4l2.3,3.4l2.3,-3.4l2.3,3.4l2.3,-3.4l2.3,3.4l2.3,-3.4l2.3,3.4l2.3,-3.4l2.3,3.4l2.3,-3.4l2.3,3.4l2.3,-3.4l2.3,3.4l2.3,-3.4l2.3,3.4l2.3,-3.4l2.3,3.4l2.3,-3.4l2.3,3.4l2.3,-3.4 M1158.7,1357.4l2.3,-3.4l2.3,3.4l2.3,-3.4l2.3,3.4l2.3,-3.4l2.3,3.4l2.3,-3.4l2.3,3.4l2.3,-3.4l2.3,3.4l2.3,-3.4l2.3,3.4l2.3,-3.4l2.3,3.4l2.3,-3.4l2.3,3.4l2.3,-3.4l2.3,3.4l2.3,-3.4l2.3,3.4l2.3,-3.4l2.3,3.4l2.3,-3.4l2.3,3.4l2.3,-3.4l2.3,3.4l2.3,-3.4l2.3,3.4l2.3,-3.4l2.3,3.4l2.3,-3.4l2.3,3.4l2.3,-3.4l2.3,3.4 M1275.4,1357.4l2.3,-3.4l2.3,3.4l2.3,-3.4l2.3,3.4l2.3,-3.4l2.3,3.4l2.3,-3.4l2.3,3.4l2.3,-3.4l2.3,3.4l2.3,-3.4l2.3,3.4l2.3,-3.4l2.3,3.4l2.3,-3.4l2.3,3.4l2.3,-3.4l2.3,3.4l2.3,-3.4l2.3,3.4 M1368.8,1357.4l2.3,-3.4l2.3,3.4l2.3,-3.4l2.3,3.4l2.3,-3.4l2.3,3.4l2.3,-3.4l2.3,3.4l2.3,-3.4l2.3,3.4l2.3,-3.4l2.3,3.4l2.3,-3.4l2.3,3.4l2.3,-3.4l2.3,3.4l2.3,-3.4l2.3,3.4l2.3,-3.4l2.3,3.4l2.3,-3.4l2.3,3.4l2.3,-3.4l2.3,3.4l2.3,-3.4l2.3,3.4l2.3,-3.4l2.3,3.4l2.3,-3.4l2.3,3.4l2.3,-3.4l2.3,3.4l2.3,-3.4 M1450.5,1357.4l2.3,-3.4l2.3,3.4l2.3,-3.4l2.3,3.4l2.3,-3.4l2.3,3.4l2.3,-3.4l2.3,3.4l2.3,-3.4l2.3,3.4l2.3,-3.4l2.3,3.4l2.3,-3.4l2.3,3.4l2.3,-3.4l2.3,3.4 M1494.7,1357.4l2.3,-3.4l2.3,3.4l2.3,-3.4l2.3,3.4l2.3,-3.4l2.3,3.4l2.3,-3.4l2.3,3.4l2.3,-3.4l2.3,3.4l2.3,-3.4l2.3,3.4l2.3,-3.4l2.3,3.4l2.3,-3.4l2.3,3.4l2.3,-3.4l2.3,3.4l2.3,-3.4 M1545.3,1357.4l2.3,-3.4l2.3,3.4l2.3,-3.4l2.3,3.4l2.3,-3.4l2.3,3.4l2.3,-3.4l2.3,3.4l2.3,-3.4l2.3,3.4l2.3,-3.4l2.3,3.4l2.3,-3.4l2.3,3.4l2.3,-3.4l2.3,3.4l2.3,-3.4l2.3,3.4l2.3,-3.4l2.3,3.4l2.3,-3.4l2.3,3.4l2.3,-3.4l2.3,3.4l2.3,-3.4 M1610.1,1357.4l2.3,-3.4l2.3,3.4l2.3,-3.4l2.3,3.4l2.3,-3.4l2.3,3.4l2.3,-3.4l2.3,3.4l2.3,-3.4l2.3,3.4l2.3,-3.4l2.3,3.4l2.3,-3.4l2.3,3.4l2.3,-3.4l2.3,3.4l2.3,-3.4l2.3,3.4l2.3,-3.4 M1659.5,1357.4l2.3,-3.4l2.3,3.4l2.3,-3.4l2.3,3.4l2.3,-3.4l2.3,3.4l2.3,-3.4l2.3,3.4l2.3,-3.4l2.3,3.4l2.3,-3.4l2.3,3.4l2.3,-3.4l2.3,3.4l2.3,-3.4l2.3,3.4l2.3,-3.4l2.3,3.4l2.3,-3.4l2.3,3.4l2.3,-3.4l2.3,3.4l2.3,-3.4l2.3,3.4l2.3,-3.4l2.3,3.4l2.3,-3.4l2.3,3.4l2.3,-3.4l2.3,3.4l2.3,-3.4l2.3,3.4l2.3,-3.4l2.3,3.4l2.3,-3.4l2.3,3.4l2.3,-3.4l2.3,3.4l2.3,-3.4l2.3,3.4l2.3,-3.4l2.3,3.4l2.3,-3.4l2.3,3.4l2.3,-3.4 M1768.4,1357.4l2.3,-3.4l2.3,3.4l2.3,-3.4l2.3,3.4l2.3,-3.4l2.3,3.4l2.3,-3.4l2.3,3.4l2.3,-3.4l2.3,3.4l2.3,-3.4l2.3,3.4l2.3,-3.4l2.3,3.4l2.3,-3.4l2.3,3.4l2.3,-3.4l2.3,3.4l2.3,-3.4 M1819.1,1357.4l2.3,-3.4l2.3,3.4l2.3,-3.4l2.3,3.4l2.3,-3.4l2.3,3.4l2.3,-3.4l2.3,3.4l2.3,-3.4l2.3,3.4l2.3,-3.4l2.3,3.4l2.3,-3.4l2.3,3.4l2.3,-3.4l2.3,3.4l2.3,-3.4l2.3,3.4l2.3,-3.4l2.3,3.4l2.3,-3.4l2.3,3.4l2.3,-3.4l2.3,3.4l2.3,-3.4l2.3,3.4l2.3,-3.4l2.3,3.4l2.3,-3.4l2.3,3.4l2.3,-3.4l2.3,3.4l2.3,-3.4l2.3,3.4 M1909.9,1357.4l2.3,-3.4l2.3,3.4l2.3,-3.4l2.3,3.4l2.3,-3.4l2.3,3.4l2.3,-3.4l2.3,3.4l2.3,-3.4l2.3,3.4l2.3,-3.4l2.3,3.4l2.3,-3.4l2.3,3.4l2.3,-3.4l2.3,3.4l2.3,-3.4l2.3,3.4l2.3,-3.4l2.3,3.4l2.3,-3.4l2.3,3.4l2.3,-3.4l2.3,3.4l2.3,-3.4l2.3,3.4l2.3,-3.4l2.3,3.4l2.3,-3.4l2.3,3.4l2.3,-3.4l2.3,3.4l2.3,-3.4l2.3,3.4l2.3,-3.4l2.3,3.4 M1044.5,1391.1l2.3,-3.4l2.3,3.4l2.3,-3.4l2.3,3.4l2.3,-3.4l2.3,3.4l2.3,-3.4l2.3,3.4l2.3,-3.4l2.3,3.4l2.3,-3.4l2.3,3.4l2.3,-3.4l2.3,3.4l2.3,-3.4l2.3,3.4l2.3,-3.4l2.3,3.4l2.3,-3.4l2.3,3.4l2.3,-3.4l2.3,3.4l2.3,-3.4l2.3,3.4l2.3,-3.4l2.3,3.4l2.3,-3.4l2.3,3.4l2.3,-3.4l2.3,3.4l2.3,-3.4l2.3,3.4l2.3,-3.4l2.3,3.4l2.3,-3.4l2.3,3.4l2.3,-3.4l2.3,3.4l2.3,-3.4l2.3,3.4l2.3,-3.4l2.3,3.4l2.3,-3.4l2.3,3.4l2.3,-3.4l2.3,3.4l2.3,-3.4l2.3,3.4l2.3,-3.4l2.3,3.4 M1165.4,1391.1l2.3,-3.4l2.3,3.4l2.3,-3.4l2.3,3.4l2.3,-3.4l2.3,3.4l2.3,-3.4l2.3,3.4l2.3,-3.4l2.3,3.4l2.3,-3.4l2.3,3.4l2.3,-3.4l2.3,3.4l2.3,-3.4l2.3,3.4l2.3,-3.4l2.3,3.4l2.3,-3.4 M1215.5,1391.1l2.3,-3.4l2.3,3.4l2.3,-3.4l2.3,3.4l2.3,-3.4l2.3,3.4l2.3,-3.4l2.3,3.4l2.3,-3.4l2.3,3.4l2.3,-3.4l2.3,3.4l2.3,-3.4l2.3,3.4l2.3,-3.4l2.3,3.4l2.3,-3.4l2.3,3.4l2.3,-3.4l2.3,3.4l2.3,-3.4l2.3,3.4l2.3,-3.4 M1276.0,1391.1l2.3,-3.4l2.3,3.4l2.3,-3.4l2.3,3.4l2.3,-3.4l2.3,3.4l2.3,-3.4l2.3,3.4l2.3,-3.4l2.3,3.4l2.3,-3.4l2.3,3.4l2.3,-3.4l2.3,3.4l2.3,-3.4l2.3,3.4l2.3,-3.4l2.3,3.4l2.3,-3.4l2.3,3.4l2.3,-3.4l2.3,3.4l2.3,-3.4l2.3,3.4l2.3,-3.4l2.3,3.4l2.3,-3.4l2.3,3.4l2.3,-3.4l2.3,3.4l2.3,-3.4l2.3,3.4l2.3,-3.4l2.3,3.4l2.3,-3.4l2.3,3.4l2.3,-3.4 M1375.0,1391.1l2.3,-3.4l2.3,3.4l2.3,-3.4l2.3,3.4l2.3,-3.4l2.3,3.4l2.3,-3.4l2.3,3.4l2.3,-3.4l2.3,3.4l2.3,-3.4l2.3,3.4l2.3,-3.4l2.3,3.4l2.3,-3.4l2.3,3.4l2.3,-3.4l2.3,3.4l2.3,-3.4l2.3,3.4l2.3,-3.4l2.3,3.4l2.3,-3.4l2.3,3.4l2.3,-3.4l2.3,3.4l2.3,-3.4l2.3,3.4l2.3,-3.4l2.3,3.4l2.3,-3.4l2.3,3.4l2.3,-3.4l2.3,3.4l2.3,-3.4l2.3,3.4l2.3,-3.4l2.3,3.4l2.3,-3.4l2.3,3.4l2.3,-3.4 M1475.3,1391.1l2.3,-3.4l2.3,3.4l2.3,-3.4l2.3,3.4l2.3,-3.4l2.3,3.4l2.3,-3.4l2.3,3.4l2.3,-3.4l2.3,3.4l2.3,-3.4l2.3,3.4l2.3,-3.4l2.3,3.4l2.3,-3.4l2.3,3.4l2.3,-3.4l2.3,3.4l2.3,-3.4l2.3,3.4l2.3,-3.4l2.3,3.4l2.3,-3.4l2.3,3.4l2.3,-3.4l2.3,3.4l2.3,-3.4l2.3,3.4l2.3,-3.4 M1548.6,1391.1l2.3,-3.4l2.3,3.4l2.3,-3.4l2.3,3.4l2.3,-3.4l2.3,3.4l2.3,-3.4l2.3,3.4l2.3,-3.4l2.3,3.4l2.3,-3.4l2.3,3.4l2.3,-3.4l2.3,3.4l2.3,-3.4l2.3,3.4l2.3,-3.4l2.3,3.4l2.3,-3.4l2.3,3.4l2.3,-3.4l2.3,3.4l2.3,-3.4l2.3,3.4l2.3,-3.4l2.3,3.4l2.3,-3.4l2.3,3.4l2.3,-3.4l2.3,3.4l2.3,-3.4l2.3,3.4l2.3,-3.4l2.3,3.4l2.3,-3.4l2.3,3.4l2.3,-3.4l2.3,3.4l2.3,-3.4l2.3,3.4l2.3,-3.4l2.3,3.4l2.3,-3.4l2.3,3.4l2.3,-3.4l2.3,3.4l2.3,-3.4l2.3,3.4l2.3,-3.4l2.3,3.4l2.3,-3.4l2.3,3.4l2.3,-3.4l2.3,3.4l2.3,-3.4l2.3,3.4 M1683.6,1391.1l2.3,-3.4l2.3,3.4l2.3,-3.4l2.3,3.4l2.3,-3.4l2.3,3.4l2.3,-3.4l2.3,3.4l2.3,-3.4l2.3,3.4l2.3,-3.4l2.3,3.4l2.3,-3.4l2.3,3.4l2.3,-3.4l2.3,3.4 M1828.9,1391.1l2.3,-3.4l2.3,3.4l2.3,-3.4l2.3,3.4l2.3,-3.4l2.3,3.4l2.3,-3.4l2.3,3.4l2.3,-3.4l2.3,3.4l2.3,-3.4l2.3,3.4l2.3,-3.4l2.3,3.4l2.3,-3.4l2.3,3.4l2.3,-3.4l2.3,3.4l2.3,-3.4l2.3,3.4l2.3,-3.4l2.3,3.4l2.3,-3.4l2.3,3.4l2.3,-3.4l2.3,3.4l2.3,-3.4l2.3,3.4l2.3,-3.4l2.3,3.4l2.3,-3.4l2.3,3.4l2.3,-3.4l2.3,3.4l2.3,-3.4 M1916.3,1391.1l2.3,-3.4l2.3,3.4l2.3,-3.4l2.3,3.4l2.3,-3.4l2.3,3.4l2.3,-3.4l2.3,3.4l2.3,-3.4l2.3,3.4l2.3,-3.4l2.3,3.4l2.3,-3.4l2.3,3.4l2.3,-3.4l2.3,3.4l2.3,-3.4l2.3,3.4l2.3,-3.4l2.3,3.4l2.3,-3.4l2.3,3.4l2.3,-3.4l2.3,3.4l2.3,-3.4 M1980.6,1391.1l2.3,-3.4l2.3,3.4l2.3,-3.4l2.3,3.4l2.3,-3.4l2.3,3.4l2.3,-3.4l2.3,3.4l2.3,-3.4l2.3,3.4l2.3,-3.4l2.3,3.4l2.3,-3.4l2.3,3.4l2.3,-3.4l2.3,3.4l2.3,-3.4l2.3,3.4l2.3,-3.4l2.3,3.4l2.3,-3.4l2.3,3.4l2.3,-3.4l2.3,3.4l2.3,-3.4l2.3,3.4l2.3,-3.4l2.3,3.4l2.3,-3.4l2.3,3.4 M1044.5,1424.9l2.3,-3.4l2.3,3.4l2.3,-3.4l2.3,3.4l2.3,-3.4l2.3,3.4l2.3,-3.4l2.3,3.4l2.3,-3.4l2.3,3.4l2.3,-3.4l2.3,3.4l2.3,-3.4l2.3,3.4l2.3,-3.4l2.3,3.4l2.3,-3.4l2.3,3.4l2.3,-3.4l2.3,3.4l2.3,-3.4l2.3,3.4l2.3,-3.4l2.3,3.4l2.3,-3.4l2.3,3.4l2.3,-3.4l2.3,3.4l2.3,-3.4l2.3,3.4l2.3,-3.4l2.3,3.4l2.3,-3.4l2.3,3.4l2.3,-3.4l2.3,3.4l2.3,-3.4l2.3,3.4l2.3,-3.4l2.3,3.4l2.3,-3.4l2.3,3.4l2.3,-3.4l2.3,3.4l2.3,-3.4l2.3,3.4l2.3,-3.4 M1236.0,1424.9l2.3,-3.4l2.3,3.4l2.3,-3.4l2.3,3.4l2.3,-3.4l2.3,3.4l2.3,-3.4l2.3,3.4l2.3,-3.4l2.3,3.4l2.3,-3.4l2.3,3.4l2.3,-3.4l2.3,3.4l2.3,-3.4l2.3,3.4l2.3,-3.4l2.3,3.4l2.3,-3.4l2.3,3.4l2.3,-3.4l2.3,3.4l2.3,-3.4 M1325.3,1424.9l2.3,-3.4l2.3,3.4l2.3,-3.4l2.3,3.4l2.3,-3.4l2.3,3.4l2.3,-3.4l2.3,3.4l2.3,-3.4l2.3,3.4l2.3,-3.4l2.3,3.4l2.3,-3.4l2.3,3.4l2.3,-3.4l2.3,3.4l2.3,-3.4l2.3,3.4l2.3,-3.4l2.3,3.4l2.3,-3.4l2.3,3.4l2.3,-3.4 M1384.3,1424.9l2.3,-3.4l2.3,3.4l2.3,-3.4l2.3,3.4l2.3,-3.4l2.3,3.4l2.3,-3.4l2.3,3.4l2.3,-3.4l2.3,3.4l2.3,-3.4l2.3,3.4l2.3,-3.4l2.3,3.4l2.3,-3.4l2.3,3.4l2.3,-3.4l2.3,3.4l2.3,-3.4l2.3,3.4l2.3,-3.4l2.3,3.4l2.3,-3.4l2.3,3.4l2.3,-3.4l2.3,3.4l2.3,-3.4l2.3,3.4l2.3,-3.4l2.3,3.4l2.3,-3.4l2.3,3.4l2.3,-3.4l2.3,3.4l2.3,-3.4l2.3,3.4l2.3,-3.4l2.3,3.4l2.3,-3.4l2.3,3.4l2.3,-3.4l2.3,3.4l2.3,-3.4l2.3,3.4l2.3,-3.4l2.3,3.4l2.3,-3.4l2.3,3.4l2.3,-3.4l2.3,3.4l2.3,-3.4l2.3,3.4l2.3,-3.4 M1512.9,1424.9l2.3,-3.4l2.3,3.4l2.3,-3.4l2.3,3.4l2.3,-3.4l2.3,3.4l2.3,-3.4l2.3,3.4l2.3,-3.4l2.3,3.4l2.3,-3.4l2.3,3.4l2.3,-3.4l2.3,3.4l2.3,-3.4l2.3,3.4l2.3,-3.4l2.3,3.4l2.3,-3.4l2.3,3.4l2.3,-3.4l2.3,3.4l2.3,-3.4l2.3,3.4l2.3,-3.4l2.3,3.4l2.3,-3.4l2.3,3.4l2.3,-3.4l2.3,3.4l2.3,-3.4l2.3,3.4l2.3,-3.4l2.3,3.4l2.3,-3.4l2.3,3.4l2.3,-3.4l2.3,3.4l2.3,-3.4l2.3,3.4l2.3,-3.4l2.3,3.4l2.3,-3.4l2.3,3.4l2.3,-3.4l2.3,3.4 M1624.5,1424.9l2.3,-3.4l2.3,3.4l2.3,-3.4l2.3,3.4l2.3,-3.4l2.3,3.4l2.3,-3.4l2.3,3.4l2.3,-3.4l2.3,3.4l2.3,-3.4l2.3,3.4l2.3,-3.4 M1661.3,1424.9l2.3,-3.4l2.3,3.4l2.3,-3.4l2.3,3.4l2.3,-3.4l2.3,3.4l2.3,-3.4l2.3,3.4l2.3,-3.4 M1687.5,1424.9l2.3,-3.4l2.3,3.4l2.3,-3.4l2.3,3.4l2.3,-3.4l2.3,3.4l2.3,-3.4l2.3,3.4l2.3,-3.4l2.3,3.4l2.3,-3.4l2.3,3.4l2.3,-3.4l2.3,3.4l2.3,-3.4l2.3,3.4l2.3,-3.4l2.3,3.4l2.3,-3.4l2.3,3.4l2.3,-3.4l2.3,3.4l2.3,-3.4l2.3,3.4l2.3,-3.4l2.3,3.4l2.3,-3.4l2.3,3.4l2.3,-3.4l2.3,3.4l2.3,-3.4l2.3,3.4l2.3,-3.4l2.3,3.4l2.3,-3.4l2.3,3.4 M1876.0,1424.9l2.3,-3.4l2.3,3.4l2.3,-3.4l2.3,3.4l2.3,-3.4l2.3,3.4l2.3,-3.4l2.3,3.4l2.3,-3.4l2.3,3.4l2.3,-3.4l2.3,3.4l2.3,-3.4l2.3,3.4l2.3,-3.4l2.3,3.4l2.3,-3.4l2.3,3.4l2.3,-3.4l2.3,3.4l2.3,-3.4 M1929.9,1424.9l2.3,-3.4l2.3,3.4l2.3,-3.4l2.3,3.4l2.3,-3.4l2.3,3.4l2.3,-3.4l2.3,3.4l2.3,-3.4l2.3,3.4l2.3,-3.4l2.3,3.4l2.3,-3.4l2.3,3.4l2.3,-3.4l2.3,3.4l2.3,-3.4l2.3,3.4l2.3,-3.4l2.3,3.4l2.3,-3.4l2.3,3.4l2.3,-3.4l2.3,3.4l2.3,-3.4l2.3,3.4l2.3,-3.4l2.3,3.4l2.3,-3.4l2.3,3.4l2.3,-3.4l2.3,3.4l2.3,-3.4l2.3,3.4l2.3,-3.4l2.3,3.4l2.3,-3.4l2.3,3.4l2.3,-3.4l2.3,3.4l2.3,-3.4l2.3,3.4l2.3,-3.4l2.3,3.4l2.3,-3.4l2.3,3.4l2.3,-3.4l2.3,3.4l2.3,-3.4l2.3,3.4l2.3,-3.4l2.3,3.4l2.3,-3.4l2.3,3.4l2.3,-3.4l2.3,3.4l2.3,-3.4l2.3,3.4l2.3,-3.4l2.3,3.4l2.3,-3.4l2.3,3.4 M1044.5,1458.6l2.3,-3.4l2.3,3.4l2.3,-3.4l2.3,3.4l2.3,-3.4l2.3,3.4l2.3,-3.4l2.3,3.4l2.3,-3.4l2.3,3.4l2.3,-3.4l2.3,3.4l2.3,-3.4l2.3,3.4l2.3,-3.4l2.3,3.4l2.3,-3.4l2.3,3.4l2.3,-3.4l2.3,3.4l2.3,-3.4l2.3,3.4l2.3,-3.4l2.3,3.4l2.3,-3.4l2.3,3.4l2.3,-3.4l2.3,3.4 M1114.4,1458.6l2.3,-3.4l2.3,3.4l2.3,-3.4l2.3,3.4l2.3,-3.4l2.3,3.4l2.3,-3.4l2.3,3.4l2.3,-3.4l2.3,3.4l2.3,-3.4l2.3,3.4l2.3,-3.4l2.3,3.4l2.3,-3.4l2.3,3.4l2.3,-3.4l2.3,3.4l2.3,-3.4l2.3,3.4l2.3,-3.4l2.3,3.4l2.3,-3.4l2.3,3.4l2.3,-3.4l2.3,3.4l2.3,-3.4l2.3,3.4l2.3,-3.4l2.3,3.4l2.3,-3.4l2.3,3.4l2.3,-3.4l2.3,3.4l2.3,-3.4l2.3,3.4l2.3,-3.4l2.3,3.4l2.3,-3.4l2.3,3.4l2.3,-3.4l2.3,3.4l2.3,-3.4l2.3,3.4l2.3,-3.4l2.3,3.4l2.3,-3.4l2.3,3.4l2.3,-3.4l2.3,3.4l2.3,-3.4l2.3,3.4l2.3,-3.4l2.3,3.4l2.3,-3.4l2.3,3.4l2.3,-3.4l2.3,3.4l2.3,-3.4 M1286.0,1458.6l2.3,-3.4l2.3,3.4l2.3,-3.4l2.3,3.4l2.3,-3.4l2.3,3.4l2.3,-3.4l2.3,3.4l2.3,-3.4l2.3,3.4l2.3,-3.4l2.3,3.4l2.3,-3.4l2.3,3.4l2.3,-3.4l2.3,3.4l2.3,-3.4l2.3,3.4l2.3,-3.4l2.3,3.4l2.3,-3.4l2.3,3.4l2.3,-3.4l2.3,3.4l2.3,-3.4l2.3,3.4l2.3,-3.4l2.3,3.4l2.3,-3.4l2.3,3.4l2.3,-3.4l2.3,3.4l2.3,-3.4l2.3,3.4l2.3,-3.4l2.3,3.4l2.3,-3.4 M1378.4,1458.6l2.3,-3.4l2.3,3.4l2.3,-3.4l2.3,3.4l2.3,-3.4l2.3,3.4l2.3,-3.4l2.3,3.4l2.3,-3.4l2.3,3.4l2.3,-3.4l2.3,3.4l2.3,-3.4l2.3,3.4l2.3,-3.4l2.3,3.4l2.3,-3.4l2.3,3.4l2.3,-3.4 M1456.2,1458.6l2.3,-3.4l2.3,3.4l2.3,-3.4l2.3,3.4l2.3,-3.4l2.3,3.4l2.3,-3.4l2.3,3.4l2.3,-3.4l2.3,3.4l2.3,-3.4l2.3,3.4l2.3,-3.4l2.3,3.4l2.3,-3.4l2.3,3.4l2.3,-3.4l2.3,3.4l2.3,-3.4l2.3,3.4l2.3,-3.4l2.3,3.4l2.3,-3.4l2.3,3.4 M1518.2,1458.6l2.3,-3.4l2.3,3.4l2.3,-3.4l2.3,3.4l2.3,-3.4l2.3,3.4l2.3,-3.4l2.3,3.4l2.3,-3.4l2.3,3.4l2.3,-3.4l2.3,3.4l2.3,-3.4l2.3,3.4l2.3,-3.4l2.3,3.4l2.3,-3.4l2.3,3.4l2.3,-3.4l2.3,3.4l2.3,-3.4l2.3,3.4l2.3,-3.4l2.3,3.4l2.3,-3.4l2.3,3.4l2.3,-3.4l2.3,3.4l2.3,-3.4l2.3,3.4l2.3,-3.4l2.3,3.4l2.3,-3.4l2.3,3.4l2.3,-3.4l2.3,3.4l2.3,-3.4l2.3,3.4l2.3,-3.4l2.3,3.4l2.3,-3.4l2.3,3.4l2.3,-3.4l2.3,3.4l2.3,-3.4l2.3,3.4l2.3,-3.4l2.3,3.4 M1757.1,1458.6l2.3,-3.4l2.3,3.4l2.3,-3.4l2.3,3.4l2.3,-3.4l2.3,3.4l2.3,-3.4l2.3,3.4l2.3,-3.4l2.3,3.4l2.3,-3.4 M1790.1,1458.6l2.3,-3.4l2.3,3.4l2.3,-3.4l2.3,3.4l2.3,-3.4l2.3,3.4l2.3,-3.4l2.3,3.4l2.3,-3.4l2.3,3.4l2.3,-3.4l2.3,3.4l2.3,-3.4l2.3,3.4l2.3,-3.4l2.3,3.4l2.3,-3.4l2.3,3.4l2.3,-3.4 M1977.4,1458.6l2.3,-3.4l2.3,3.4l2.3,-3.4l2.3,3.4l2.3,-3.4l2.3,3.4l2.3,-3.4l2.3,3.4l2.3,-3.4l2.3,3.4l2.3,-3.4l2.3,3.4l2.3,-3.4l2.3,3.4l2.3,-3.4l2.3,3.4l2.3,-3.4l2.3,3.4l2.3,-3.4l2.3,3.4l2.3,-3.4l2.3,3.4 M2034.2,1458.6l2.3,-3.4l2.3,3.4l2.3,-3.4l2.3,3.4l2.3,-3.4l2.3,3.4l2.3,-3.4l2.3,3.4l2.3,-3.4l2.3,3.4l2.3,-3.4l2.3,3.4l2.3,-3.4l2.3,3.4l2.3,-3.4l2.3,3.4l2.3,-3.4l2.3,3.4l2.3,-3.4l2.3,3.4" fill="none" stroke="#FF2020" stroke-width="1.05" stroke-linejoin="round"/></svg>
<div class="a" style="left:0;top:1476px;width:2560px;height:34px;background:#F3F3F3;border-top:2px solid #CDCDCD;box-sizing:border-box"></div>
<svg style="left:0;top:0" width="2560" height="1510" viewBox="0 0 2560 1510"><path d="M265,1486 H276.4 V1493.2 M265,1486 V1505.8 H276.3 V1500.3 M276.4,1486 H287.2 V1494.4" fill="none" stroke="#242424" stroke-width="1.7"/><path d="M277.6,1496.6 L288.6,1507.4 M288.6,1496.6 L277.6,1507.4" fill="none" stroke="#242424" stroke-width="1.7"/><circle cx="481.2" cy="1487.6" r="2.7" fill="none" stroke="#242424" stroke-width="1.6"/><path d="M472.4,1489.2 Q471,1491 473,1492 L477.5,1494.5 L476.4,1505.5 Q477,1507.3 478.8,1506 L481.4,1499.2 L484,1506 Q485.5,1507.5 486.4,1505.5 L485.4,1495.6 M477.5,1494.5 Q481.5,1493 484.5,1492.5 L488.6,1490.6 Q490.6,1489.2 489.4,1488 Q488.4,1487.4 486.6,1488.6 L484,1490.5" fill="none" stroke="#242424" stroke-width="1.6" stroke-linejoin="round"/><path d="M487.6,1497.4 Q488.5,1494.8 491.2,1495 Q493.6,1495.6 493.2,1498.2 Q492.6,1500 490.6,1501.4 V1503" fill="none" stroke="#242424" stroke-width="1.5"/><circle cx="490.6" cy="1506.2" r="0.9" fill="#242424"/><path d="M1941.2,1488.5 V1484.5 H1945.2 M1961,1484.5 H1965 V1488.5 M1965,1503.8 V1507.8 H1961 M1945.2,1507.8 H1941.2 V1503.8" fill="none" stroke="#242424" stroke-width="1.5"/><path d="M1947.4,1487.8 H1955.2 L1959.4,1492 V1504 H1947.4 Z M1955.2,1487.8 V1492 H1959.4" fill="none" stroke="#242424" stroke-width="1.5"/><path d="M2060.8,1485 H2068 Q2070.5,1485.3 2071.3,1487.5 Q2072.2,1485.3 2074.5,1485 H2081.8 V1503.5 H2074.5 Q2072.3,1503.8 2071.3,1505 Q2070.3,1503.8 2068,1503.5 H2060.8 Z M2071.3,1487.5 V1504.6" fill="none" stroke="#242424" stroke-width="1.6"/><path d="M2063.5,1489.6 H2068.8 M2063.5,1493 H2068.8 M2063.5,1496.4 H2068.8 M2063.5,1499.8 H2068.8 M2074,1489.6 H2079.2 M2074,1493 H2079.2 M2074,1496.4 H2079.2 M2074,1499.8 H2079.2" stroke="#242424" stroke-width="1.4"/><rect x="2107.4" y="1478" width="69.6" height="32" fill="#DFDFDF"/><rect x="2132.6" y="1485.2" width="17.4" height="21.5" fill="none" stroke="#242424" stroke-width="1.8"/><path d="M2135.8,1488.8 H2146.8 M2135.8,1492.2 H2146.8 M2135.8,1495.6 H2146.8 M2135.8,1499 H2146.8 M2135.8,1502.4 H2146.8" stroke="#242424" stroke-width="1.5"/><path d="M2209,1505.6 H2200.8 V1485.2 H2221.6 V1492" fill="none" stroke="#242424" stroke-width="1.6"/><path d="M2203.8,1488.8 H2218.5 M2203.8,1492.2 H2212 M2203.8,1495.6 H2208 M2203.8,1499 H2207 M2203.8,1502.4 H2207" stroke="#242424" stroke-width="1.4"/><circle cx="2216.6" cy="1500.2" r="7.1" fill="#F3F3F3" stroke="#242424" stroke-width="1.6"/><ellipse cx="2216.6" cy="1500.2" rx="2.9" ry="7.1" fill="none" stroke="#242424" stroke-width="1.3"/><path d="M2209.5,1500.2 H2223.7 M2210.6,1496.6 H2222.6 M2210.6,1503.8 H2222.6" stroke="#242424" stroke-width="1.2"/><rect x="2257.8" y="1495" width="13.2" height="1.5" fill="#555"/><rect x="2281.8" y="1495" width="173.2" height="1.6" fill="#6E6E6E"/><rect x="2364.3" y="1487.2" width="8.7" height="18.2" rx="1" fill="#6E6E6E"/><path d="M2464.6,1495.7 H2478.8 M2471.7,1488.6 V1502.8" stroke="#555" stroke-width="1.5"/></svg>
<div class="t" style="left:12.7px;top:1487.5px;font-size:19px;color:#333333;transform:scaleX(0.9424);">Page 1 of 3</div>
<div class="t" style="left:138.6px;top:1487.5px;font-size:19px;color:#333333;transform:scaleX(0.9559);">1056 words</div>
<div class="t" style="left:319.4px;top:1487.5px;font-size:19px;color:#333333;transform:scaleX(0.9782);">English (India)</div>
<div class="t" style="left:500.8px;top:1487.5px;font-size:19px;color:#333333;transform:scaleX(0.9774);">Accessibility: Unavailable</div>
<div class="t" style="left:1970.7px;top:1487.5px;font-size:19px;color:#333333;transform:scaleX(0.9043);">Focus</div>
<div class="t" style="left:2502.4px;top:1487.5px;font-size:19px;color:#333333;transform:scaleX(0.9011);">100%</div>
<svg style="left:0;top:0" width="2560" height="1510" viewBox="0 0 2560 1510"><rect x="374.5" y="85.4" width="105.2" height="55.2" rx="3" fill="none" stroke="#FF0000" stroke-width="10"/><rect x="2099.6" y="135.5" width="122.8" height="173.8" rx="3.5" fill="none" stroke="#FF0000" stroke-width="10"/><path d="M2293.5,586 L2215,349" stroke="#FF0000" stroke-width="12" fill="none"/><path d="M2203.6,316.8 L2191.2,361.3 L2240,344.4 Z" fill="#FF0000"/></svg>

</body></html>
